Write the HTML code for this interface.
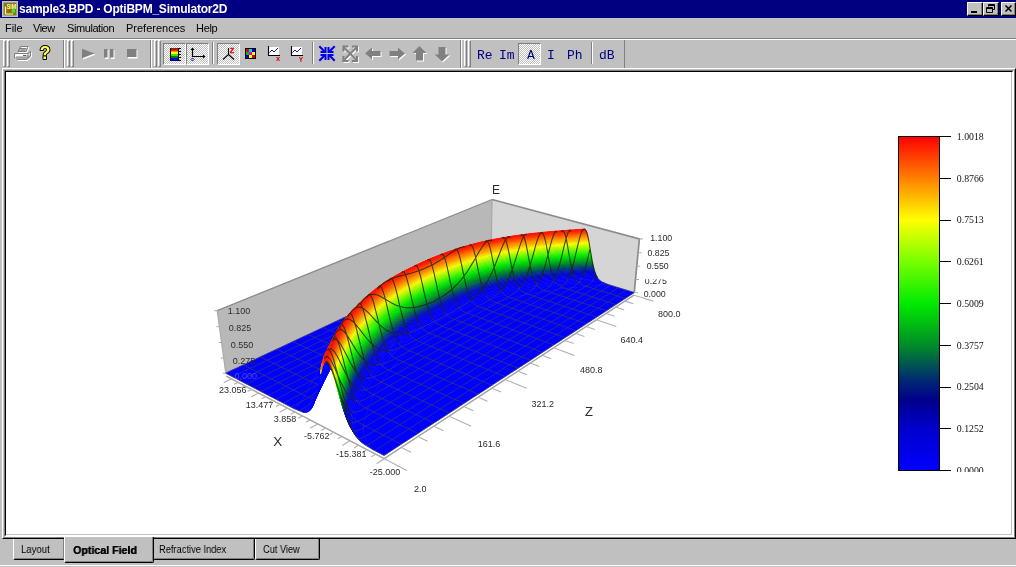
<!DOCTYPE html>
<html><head><meta charset="utf-8"><title>sample3.BPD - OptiBPM_Simulator2D</title><style>
html,body{margin:0;padding:0}
body{width:1016px;height:567px;position:relative;overflow:hidden;background:#c0c0c0;font-family:"Liberation Sans",Arial,sans-serif;font-size:11px;color:#000}
.a{position:absolute}
.t,.m,.tx,.tab span,svg{will-change:transform}
#title{left:0;top:0;width:1016px;height:18px;background:#000080}
#title .t{left:19px;top:2px;color:#fff;font-weight:bold;font-size:12px;line-height:14px;letter-spacing:-.22px;white-space:nowrap}
.wb{top:2px;width:16px;height:14px;background:#c0c0c0;box-sizing:border-box;border:1px solid;border-color:#fff #000 #000 #fff;box-shadow:inset -1px -1px 0 #808080}
.m{top:22px;line-height:12px;white-space:nowrap}
.grip{top:40px;width:3px;height:27px;box-sizing:border-box;border-left:1px solid #fff;border-right:1px solid #808080;border-top:1px solid #fff;border-bottom:1px solid #808080;background:#c0c0c0}
.vd{top:40px;width:1px;height:28px;background:#808080}
.vw{top:40px;width:1px;height:28px;background:#fff}
.sep{top:42px;width:2px;height:22px;border-left:1px solid #808080;border-right:1px solid #fff;box-sizing:border-box}
.pb{top:43px;height:22px;width:23px;box-sizing:border-box;border:1px solid;border-color:#808080 #fff #fff #808080;background:repeating-conic-gradient(#fff 0% 25%,#c0c0c0 0% 50%) 0 0/2px 2px}
.tx{top:49px;font-family:"Liberation Mono",monospace;font-size:13px;line-height:14px;color:#000080;white-space:nowrap}
.tab{top:539px;height:21px;border-radius:0 0 2px 2px;box-sizing:border-box;border-left:1px solid #fff;border-right:1px solid #000;border-bottom:1px solid #000;box-shadow:inset -1px -1px 0 #808080;background:#c0c0c0}
.tab span{position:absolute;top:4px;left:0;white-space:nowrap;transform-origin:0 0;line-height:12px}
</style></head><body>
<div id="title" class="a"><svg class="a" style="left:2px;top:1px" width="16" height="16" viewBox="0 0 16 16"><rect width="16" height="16" fill="#c4c4bc"/><rect x="1.5" y="1.5" width="13" height="13" fill="#857a18"/><path d="M3.500 5.500v7.500h7.500" stroke="#ffff90" stroke-width="1.200" fill="none"/><rect x="6" y="8.500" width="4" height="3" fill="#a06010"/><circle cx="11.300" cy="10" r="1.900" fill="#30f030"/><text x="4.800" y="7.600" font-family="Liberation Sans,sans-serif" font-weight="bold" font-size="6.500" fill="#ffffa0" textLength="9.500" lengthAdjust="spacingAndGlyphs">SIM</text></svg>
<div class="a t">sample3.BPD - OptiBPM_Simulator2D</div>
<div class="a wb" style="left:967px"><div class="a" style="left:3px;top:8px;width:6px;height:2px;background:#000"></div></div>
<div class="a wb" style="left:983px"><svg class="a" style="left:0;top:0" width="14" height="12" viewBox="0 0 14 12"><path d="M4.5 1.5h6v5h-2M4.5 2.5h6M4.5 1.5v2M2.5 4.5h6v5h-6zM2.5 5.5h6" stroke="#000" fill="none"/></svg></div>
<div class="a wb" style="left:1001px;width:15px"><svg class="a" style="left:0;top:0" width="14" height="12" viewBox="0 0 14 12"><path d="M3.5 2.5l6 6M9.5 2.5l-6 6" stroke="#000" stroke-width="1.6" fill="none"/></svg></div>
</div>
<div class="a m" style="left:4.5px;letter-spacing:-0.05px">File</div>
<div class="a m" style="left:33px;letter-spacing:-0.5px">View</div>
<div class="a m" style="left:66.7px;letter-spacing:-0.42px">Simulation</div>
<div class="a m" style="left:126px;letter-spacing:0px">Preferences</div>
<div class="a m" style="left:195.5px;letter-spacing:-0.3px">Help</div>
<div class="a" style="left:0;top:38px;width:1016px;height:1px;background:#808080"></div>
<div class="a" style="left:0;top:39px;width:1016px;height:1px;background:#fff"></div>
<div class="a grip" style="left:3px"></div><div class="a grip" style="left:7px"></div>
<div class="a vd" style="left:63px"></div>
<div class="a vw" style="left:64px"></div>
<div class="a grip" style="left:67px"></div><div class="a grip" style="left:71px"></div>
<div class="a vd" style="left:150px"></div>
<div class="a vw" style="left:151px"></div>
<div class="a grip" style="left:154px"></div><div class="a grip" style="left:158px"></div>
<div class="a vd" style="left:460px"></div>
<div class="a vw" style="left:461px"></div>
<div class="a grip" style="left:464px"></div><div class="a grip" style="left:468px"></div>
<div class="a vd" style="left:624px"></div>
<div class="a sep" style="left:212px"></div>
<div class="a sep" style="left:312px"></div>
<div class="a sep" style="left:591px"></div>
<div class="a pb" style="left:163px"></div><div class="a pb" style="left:186px"></div><div class="a pb" style="left:217px"></div><div class="a pb" style="left:518px"></div>
<svg class="a" style="left:0;top:40px" width="640" height="28" viewBox="0 40 640 28" font-family="Liberation Sans,Arial,sans-serif">
<!-- printer (disabled) -->
<g fill="none" stroke="#fff" transform="translate(1,1)"><path d="M20.5 46.5h7.5l-2 5h-8zM14.5 53.5h13.5l2.5-2v4.5l-2.5 2h-13.5zM16.5 59.5h10.5l2-2"/></g>
<g fill="none" stroke="#808080"><path d="M20.5 46.5h7.5l-2 5h-8zM20 48.5h6M19 50h6M14.5 53.5h13.5l2.5-2M28 53.5v4.5M30.5 51.500v4.5l-2.500 2h-13.500v-4.500M16.500 59.500h10.500l2-2"/><path d="M16 55.500h7" stroke="#fff"/><path d="M23 55.500h3" stroke="#606060"/></g>
<!-- help -->
<text x="45" y="58.900" font-size="17.5" font-weight="bold" text-anchor="middle" fill="#ffff50" stroke="#000" stroke-width="2" paint-order="stroke" stroke-linejoin="round">?</text>
<!-- play pause stop (disabled) -->
<g fill="#fff"><path d="M83 50l12.500 4.700-12.500 4.700z"/><rect x="105" y="50" width="3.500" height="9"/><rect x="111" y="50" width="3.500" height="9"/><rect x="128" y="50" width="9.500" height="8.500"/></g>
<g fill="#808080"><path d="M82 48.800l12.500 4.700-12.500 4.700z"/><rect x="104" y="49" width="3.500" height="8.500"/><rect x="110" y="49" width="3.500" height="8.500"/><rect x="127" y="49" width="9.500" height="8"/></g>
<!-- colour bar icon -->
<g shape-rendering="crispEdges"><rect x="170" y="48" width="9" height="13" fill="#000"/>
<rect x="171" y="48" width="7" height="2" fill="#a02000"/><rect x="171" y="50" width="7" height="1" fill="#ff2000"/><rect x="171" y="51" width="7" height="1" fill="#ff9000"/><rect x="171" y="52" width="7" height="2" fill="#ffff00"/><rect x="171" y="54" width="7" height="2" fill="#40e000"/><rect x="171" y="56" width="7" height="2" fill="#008000"/><rect x="171" y="58" width="7" height="2" fill="#0000e0"/><rect x="171" y="60" width="7" height="1" fill="#000090"/>
<path d="M179 48.500h2M179 51.500h2M179 54.500h2M179 57.500h2M179 60.500h2" stroke="#000"/></g>
<!-- axes icon -->
<g stroke="#000" fill="#000"><path d="M192.500 49v7.500h11" fill="none" stroke-width="1.200"/><path d="M192.500 47.500l2 2.500h-4z" stroke="none"/><path d="M205.500 56.500l-2.500-2v4z" stroke="none"/></g>
<path d="M192.500 58l1.500 1.500-1.500 1.500-1.500-1.500z" fill="none" stroke="#0000c0" stroke-width=".9"/>
<!-- xyz icon -->
<path d="M228.500 48v6.500l-5.500 5M228.500 54.500l5.500 5" stroke="#000" stroke-width="1.100" fill="none"/>
<text x="229.800" y="52.800" font-size="7" font-weight="bold" fill="#e00000" stroke="#e00000" stroke-width=".3">Z</text>
<!-- palette icon -->
<g shape-rendering="crispEdges"><rect x="245" y="48" width="11" height="11" fill="#000"/>
<rect x="246" y="49" width="3" height="3" fill="#e00000"/><rect x="249" y="49" width="3" height="3" fill="#00e0e0"/><rect x="252" y="49" width="3" height="3" fill="#0000c0"/>
<rect x="246" y="52" width="3" height="3" fill="#00c000"/><rect x="249" y="52" width="3" height="3" fill="#e000e0"/><rect x="252" y="52" width="3" height="3" fill="#ffff00"/>
<rect x="246" y="55" width="3" height="3" fill="#0000c0"/><rect x="249" y="55" width="3" height="3" fill="#ffff00"/><rect x="252" y="55" width="3" height="3" fill="#e00000"/></g>
<!-- chart x / chart y -->
<g id="ch"><rect x="269" y="47" width="10" height="8" fill="#fff"/><path d="M268.500 46v9.500h11.500" stroke="#000" stroke-width="1.100" fill="none"/><path d="M269.500 52.500l2.500-2.500 2 2 4-4" stroke="#0000a0" stroke-width=".9" fill="none"/></g>
<text x="276" y="61.300" font-size="7.500" font-weight="bold" fill="#e00000">x</text>
<use href="#ch" x="23"/>
<text x="298.700" y="62" font-size="6.500" font-weight="bold" fill="#e00000">Y</text>
<!-- zoom-in (blue arrows to centre) -->
<g stroke="#0000e8" stroke-width="2" fill="none"><path d="M319.300 46.300l6 6M334.700 46.300l-6 6M319.300 60.700l6-6M334.700 60.700l-6-6"/><path d="M320.500 52h5v-5M333.500 52h-5v-5M320.500 55h5v5M333.500 55h-5v5" stroke-width="2"/></g>
<!-- zoom-out (disabled) -->
<g stroke="#fff" stroke-width="2" fill="none" transform="translate(1,1)"><path d="M344 47.500l12.500 12.500M356.500 47.500l-12.500 12.500"/><path d="M343.500 51.500v-5h5M352 46.500h5v5M343.500 56v5h5M352 61h5v-5"/></g>
<g stroke="#808080" stroke-width="2" fill="none"><path d="M344 47.500l12.500 12.500M356.500 47.500l-12.500 12.500"/><path d="M343.500 51.500v-5h5M352 46.500h5v5M343.500 56v5h5M352 61h5v-5" stroke-width="2.200"/></g>
<!-- arrows (disabled) -->
<g fill="#fff" transform="translate(1,1)"><path d="M365 53.500l7-6v3.500h8.500v5h-8.500v3.500z"/><path d="M405 53.500l-7-6v3.500h-8.500v5h8.500v3.500z"/><path d="M419.500 46l7 7h-3.500v7.500h-7v-7.500h-3.500z"/><path d="M442 61.500l7.500-7h-4v-7.500h-7v7.500h-4z"/></g>
<g fill="#808080"><path d="M365 53.500l7-6v3.500h8.500v5h-8.500v3.500z"/><path d="M405 53.500l-7-6v3.500h-8.500v5h8.500v3.500z"/><path d="M419.500 46l7 7h-3.500v7.500h-7v-7.500h-3.500z"/><path d="M442 61.500l7.500-7h-4v-7.500h-7v7.500h-4z"/></g>
</svg>
<div class="a tx" style="left:477.300px">Re</div><div class="a tx" style="left:499px">Im</div><div class="a tx" style="left:527px">A</div><div class="a tx" style="left:547.400px">I</div><div class="a tx" style="left:567px">Ph</div><div class="a tx" style="left:599px">dB</div>

<div class="a" style="left:2px;top:68px;width:1014px;height:471px;box-sizing:border-box;border:1px solid;border-color:#fff #000 #000 #fff"></div>
<div class="a" style="left:3px;top:69px;width:1012px;height:469px;box-sizing:border-box;border:1px solid;border-color:#c0c0c0 #808080 #808080 #c0c0c0"></div>
<div class="a" style="left:4px;top:70px;width:1010px;height:467px;box-sizing:border-box;border:1px solid;border-color:#808080 #fff #fff #808080"></div>
<div class="a" style="left:5px;top:71px;width:1008px;height:465px;box-sizing:border-box;border:1px solid;border-color:#000 #fff #fff #000;background:#fff"></div>
<div class="a" style="left:6px;top:534px;width:1006px;height:1px;background:#c0c0c0"></div>
<div class="a" style="left:1011px;top:72px;width:1px;height:463px;background:#c0c0c0"></div>
<svg width="1006" height="463" viewBox="6 72 1006 463" style="position:absolute;left:6px;top:72px" font-family="Liberation Sans, Arial, sans-serif" fill="#2b2b2b">
<defs><clipPath id="c275"><rect x="640" y="279.3" width="40" height="10"/></clipPath><clipPath id="cbl"><rect x="950" y="120" width="60" height="352"/></clipPath>
<linearGradient id="cb" x1="0" y1="1" x2="0" y2="0">
<stop offset="0.000" stop-color="#0000ff"/>
<stop offset="0.125" stop-color="#0000cd"/>
<stop offset="0.210" stop-color="#00008c"/>
<stop offset="0.270" stop-color="#002873"/>
<stop offset="0.375" stop-color="#008c28"/>
<stop offset="0.500" stop-color="#00eb00"/>
<stop offset="0.625" stop-color="#78ff00"/>
<stop offset="0.750" stop-color="#ffff00"/>
<stop offset="0.875" stop-color="#ff8000"/>
<stop offset="1.000" stop-color="#ff0000"/>
</linearGradient></defs>
<polygon points="225.8,373.2 217.2,310.7 492.1,199.5 491.2,248.6" fill="#b8b8b8"/>
<polygon points="491.2,248.6 492.1,199.5 639.4,238.9 634.2,292.6" fill="#d5d5d5"/>
<polyline points="491.2,248.6 492.1,199.5" stroke="#a2a2a2" stroke-width="1" fill="none"/>
<polyline points="217.2,310.7 492.1,199.5" stroke="#8c8c8c" stroke-width="1.3" fill="none"/>
<polyline points="492.1,199.5 639.4,238.9 634.2,292.6" stroke="#8c8c8c" stroke-width="1.7" fill="none"/>
<polyline points="225.8,373.2 217.2,310.7" stroke="#aaa" stroke-width="1.2" fill="none"/>
<polygon points="225.8,373.2 228.2,372.0 230.5,370.9 232.9,369.8 235.2,368.7 237.5,367.7 239.8,366.6 242.1,365.5 244.4,364.4 246.7,363.4 249.0,362.3 251.2,361.2 259.7,357.2 268.0,353.3 276.2,349.5 284.3,345.7 292.2,342.0 300.0,338.3 307.7,334.7 315.2,331.2 322.6,327.7 329.9,324.3 337.1,320.9 344.2,317.6 351.2,314.3 358.0,311.1 364.8,307.9 371.5,304.8 378.0,301.7 384.5,298.7 390.8,295.7 397.1,292.7 403.3,289.8 409.4,287.0 415.4,284.2 421.3,281.4 427.2,278.7 432.9,276.0 438.6,273.3 444.2,270.7 449.7,268.1 455.1,265.5 460.5,263.0 465.8,260.5 471.0,258.1 476.2,255.6 481.3,253.3 486.3,250.9 491.2,248.6 556.1,268.5 545.4,269.2 534.9,270.1 524.7,271.0 514.8,272.1 505.2,273.2 495.8,274.5 486.8,276.0 478.0,277.5 469.6,279.2 461.5,281.1 453.6,283.1 446.1,285.2 438.7,287.5 431.7,290.0 424.8,292.5 418.0,295.2 411.5,298.0 405.0,301.0 398.6,304.0 392.3,307.2 386.1,310.5 379.9,313.9 373.9,317.4 368.0,321.1 362.4,325.0 356.9,329.2 351.7,333.5 346.6,338.0 341.7,342.7 336.8,347.6 332.1,352.7 327.4,358.0 323.0,363.6 318.9,369.6 315.2,375.9 311.8,382.5 308.3,389.4 307.3,391.2 306.3,393.1 305.3,394.9 304.2,396.7 303.1,398.6 302.0,400.4 300.7,402.2 299.4,403.9 297.8,405.6 296.0,407.1 293.8,408.5" fill="#0000ff" stroke="#0000ff" stroke-width=".6"/>
<polygon points="373.5,449.9 369.4,445.1 366.7,441.0 364.9,437.5 363.9,434.4 363.3,431.5 363.2,428.9 363.3,426.4 363.5,424.1 364.0,421.8 364.5,419.6 365.1,417.5 367.6,409.7 370.3,402.3 373.4,395.2 377.0,388.7 380.9,382.5 385.2,376.6 389.6,371.0 394.1,365.6 398.7,360.4 403.5,355.4 408.4,350.7 413.6,346.2 419.0,341.9 424.7,337.8 430.6,333.9 436.6,330.2 442.7,326.6 448.8,323.2 455.1,319.8 461.5,316.6 468.0,313.6 474.6,310.6 481.5,307.8 488.5,305.2 495.8,302.7 503.4,300.3 511.3,298.2 519.5,296.1 528.1,294.3 537.0,292.6 546.2,291.0 555.7,289.6 565.5,288.3 575.7,287.2 586.2,286.2 596.9,285.3 607.9,284.5 634.2,292.6 629.8,295.5 625.2,298.5 620.6,301.5 615.9,304.5 611.1,307.6 606.3,310.8 601.4,314.0 596.4,317.2 591.4,320.5 586.2,323.8 581.0,327.2 575.7,330.7 570.3,334.2 564.8,337.7 559.3,341.4 553.6,345.0 547.9,348.8 542.0,352.6 536.1,356.5 530.0,360.4 523.9,364.4 517.6,368.5 511.3,372.6 504.8,376.8 498.2,381.1 491.5,385.5 484.7,389.9 477.7,394.4 470.6,399.0 463.4,403.7 456.1,408.5 448.6,413.4 441.0,418.4 433.2,423.4 425.2,428.6 417.2,433.9 408.9,439.2 406.7,440.7 404.5,442.1 402.3,443.5 400.0,445.0 397.8,446.5 395.5,447.9 393.2,449.4 391.0,450.9 388.7,452.4 386.4,453.9 384.0,455.4" fill="#0000ff" stroke="#0000ff" stroke-width=".6"/>
<polygon points="293.8,408.5 296.0,407.1 297.8,405.6 299.4,403.9 300.7,402.2 302.0,400.4 303.1,398.6 304.2,396.7 305.3,394.9 306.3,393.1 307.3,391.2 308.3,389.4 311.8,382.5 315.2,375.9 318.9,369.6 323.0,363.6 327.4,358.0 332.1,352.7 336.8,347.6 341.7,342.7 346.6,338.0 351.7,333.5 356.9,329.2 362.4,325.0 368.0,321.1 373.9,317.4 379.9,313.9 386.1,310.5 392.3,307.2 398.6,304.0 405.0,301.0 411.5,298.0 418.0,295.2 424.8,292.5 431.7,290.0 438.7,287.5 446.1,285.2 453.6,283.1 461.5,281.1 469.6,279.2 478.0,277.5 486.8,276.0 495.8,274.5 505.2,273.2 514.8,272.1 524.7,271.0 534.9,270.1 545.4,269.2 556.1,268.5 563.0,269.7 552.2,270.4 541.7,271.3 531.5,272.2 521.5,273.3 511.8,274.5 502.4,275.8 493.4,277.2 484.6,278.8 476.1,280.5 468.0,282.4 460.1,284.4 452.6,286.6 445.3,288.9 438.2,291.3 431.3,293.9 424.6,296.7 418.0,299.5 411.5,302.5 405.2,305.5 398.9,308.7 392.6,312.0 386.5,315.5 380.5,319.1 374.6,322.8 369.0,326.8 363.6,330.9 358.4,335.3 353.4,339.9 348.5,344.6 343.6,349.6 338.9,354.8 334.3,360.1 329.9,365.8 325.9,371.8 322.3,378.2 318.9,384.9 315.5,391.9 314.6,393.8 313.7,395.6 312.7,397.5 311.8,399.4 310.8,401.3 309.8,403.2 308.8,405.1 307.7,407.0 306.6,408.9 305.3,410.7 303.8,412.5" fill="#0000ff" stroke="#0000ff" stroke-width=".7"/>
<polygon points="303.8,412.5 305.3,410.7 306.6,408.9 307.7,407.0 308.8,405.1 309.8,403.2 310.8,401.3 311.8,399.4 312.7,397.5 313.7,395.6 314.6,393.8 315.5,391.9 318.9,384.9 322.3,378.2 325.9,371.8 329.9,365.8 334.3,360.1 338.9,354.8 343.6,349.6 348.5,344.6 353.4,339.9 358.4,335.3 363.6,330.9 369.0,326.8 374.6,322.8 380.5,319.1 386.5,315.5 392.6,312.0 398.9,308.7 405.2,305.5 411.5,302.5 418.0,299.5 424.6,296.7 431.3,293.9 438.2,291.3 445.3,288.9 452.6,286.6 460.1,284.4 468.0,282.4 476.1,280.5 484.6,278.8 493.4,277.2 502.4,275.8 511.8,274.5 521.5,273.3 531.5,272.2 541.7,271.3 552.2,270.4 563.0,269.7 564.7,269.3 554.0,270.0 543.4,270.9 533.2,271.8 523.2,272.9 513.5,274.0 504.1,275.4 495.1,276.8 486.3,278.4 477.8,280.1 469.6,282.0 461.8,284.0 454.2,286.2 446.9,288.5 439.8,290.9 432.9,293.5 426.2,296.3 419.6,299.1 413.2,302.1 406.8,305.2 400.5,308.4 394.3,311.7 388.1,315.1 382.1,318.7 376.3,322.5 370.6,326.4 365.2,330.6 360.0,334.9 355.0,339.5 350.1,344.3 345.3,349.3 340.6,354.4 336.0,359.8 331.6,365.5 327.6,371.5 324.0,377.9 320.7,384.7 317.3,391.6 316.4,393.5 315.5,395.4 314.5,397.3 313.6,399.2 312.7,401.1 311.7,403.0 310.7,404.9 309.7,406.9 308.7,408.8 307.6,410.7 306.3,412.5" fill="#0000ff" stroke="#0000ff" stroke-width=".7"/>
<polygon points="306.3,412.5 307.6,410.7 308.7,408.8 309.7,406.9 310.7,404.9 311.7,403.0 312.7,401.1 313.6,399.2 314.5,397.3 315.5,395.4 316.4,393.5 317.3,391.6 320.7,384.7 324.0,377.9 327.6,371.5 331.6,365.5 336.0,359.8 340.6,354.4 345.3,349.3 350.1,344.3 355.0,339.5 360.0,334.9 365.2,330.6 370.6,326.4 376.3,322.5 382.1,318.7 388.1,315.1 394.3,311.7 400.5,308.4 406.8,305.2 413.2,302.1 419.6,299.1 426.2,296.3 432.9,293.5 439.8,290.9 446.9,288.5 454.2,286.2 461.8,284.0 469.6,282.0 477.8,280.1 486.3,278.4 495.1,276.8 504.1,275.4 513.5,274.0 523.2,272.9 533.2,271.8 543.4,270.9 554.0,270.0 564.7,269.3 565.9,268.6 555.1,269.4 544.6,270.2 534.3,271.2 524.3,272.3 514.6,273.4 505.2,274.7 496.1,276.2 487.4,277.8 478.9,279.5 470.7,281.4 462.9,283.4 455.3,285.5 448.0,287.9 440.9,290.3 434.0,292.9 427.2,295.6 420.6,298.5 414.2,301.5 407.8,304.5 401.5,307.7 395.3,311.0 389.2,314.5 383.2,318.1 377.3,321.8 371.7,325.8 366.3,330.0 361.1,334.3 356.1,338.9 351.2,343.7 346.4,348.7 341.6,353.8 337.0,359.2 332.7,364.9 328.7,370.9 325.1,377.3 321.7,384.1 318.4,391.0 317.5,392.9 316.6,394.8 315.7,396.7 314.7,398.6 313.8,400.5 312.9,402.4 312.0,404.4 311.0,406.3 310.0,408.2 309.0,410.2 307.8,412.0" fill="#0000ff" stroke="#0000ff" stroke-width=".7"/>
<polygon points="307.8,412.0 309.0,410.2 310.0,408.2 311.0,406.3 312.0,404.4 312.9,402.4 313.8,400.5 314.7,398.6 315.7,396.7 316.6,394.8 317.5,392.9 318.4,391.0 321.7,384.1 325.1,377.3 328.7,370.9 332.7,364.9 337.0,359.2 341.6,353.8 346.4,348.7 351.2,343.7 356.1,338.9 361.1,334.3 366.3,330.0 371.7,325.8 377.3,321.8 383.2,318.1 389.2,314.5 395.3,311.0 401.5,307.7 407.8,304.5 414.2,301.5 420.6,298.5 427.2,295.6 434.0,292.9 440.9,290.3 448.0,287.9 455.3,285.5 462.9,283.4 470.7,281.4 478.9,279.5 487.4,277.8 496.1,276.2 505.2,274.7 514.6,273.4 524.3,272.3 534.3,271.2 544.6,270.2 555.1,269.4 565.9,268.6 566.8,268.0 556.0,268.7 545.4,269.5 535.2,270.5 525.2,271.5 515.5,272.7 506.1,274.0 497.0,275.5 488.2,277.1 479.7,278.8 471.5,280.6 463.7,282.7 456.1,284.8 448.7,287.2 441.6,289.6 434.7,292.2 428.0,294.9 421.4,297.8 415.0,300.7 408.6,303.8 402.3,307.0 396.1,310.3 389.9,313.8 383.9,317.3 378.1,321.1 372.4,325.1 367.0,329.2 361.8,333.6 356.8,338.2 351.9,343.0 347.1,347.9 342.4,353.1 337.8,358.5 333.5,364.1 329.5,370.2 325.9,376.6 322.5,383.3 319.2,390.3 318.3,392.2 317.4,394.0 316.5,395.9 315.6,397.8 314.7,399.7 313.8,401.7 312.8,403.6 311.9,405.6 311.0,407.5 310.0,409.5 309.0,411.3" fill="#0000ff" stroke="#0000ff" stroke-width=".7"/>
<polygon points="309.0,411.3 310.0,409.5 311.0,407.5 311.9,405.6 312.8,403.6 313.8,401.7 314.7,399.7 315.6,397.8 316.5,395.9 317.4,394.0 318.3,392.2 319.2,390.3 322.5,383.3 325.9,376.6 329.5,370.2 333.5,364.1 337.8,358.5 342.4,353.1 347.1,347.9 351.9,343.0 356.8,338.2 361.8,333.6 367.0,329.2 372.4,325.1 378.1,321.1 383.9,317.3 389.9,313.8 396.1,310.3 402.3,307.0 408.6,303.8 415.0,300.7 421.4,297.8 428.0,294.9 434.7,292.2 441.6,289.6 448.7,287.2 456.1,284.8 463.7,282.7 471.5,280.6 479.7,278.8 488.2,277.1 497.0,275.5 506.1,274.0 515.5,272.7 525.2,271.5 535.2,270.5 545.4,269.5 556.0,268.7 566.8,268.0 567.5,267.2 556.7,267.9 546.2,268.8 535.9,269.7 525.9,270.8 516.2,272.0 506.8,273.3 497.6,274.7 488.8,276.3 480.4,278.0 472.2,279.9 464.3,281.9 456.7,284.1 449.4,286.4 442.3,288.8 435.4,291.4 428.7,294.1 422.1,297.0 415.6,300.0 409.2,303.0 402.9,306.2 396.7,309.5 390.6,313.0 384.5,316.6 378.7,320.3 373.1,324.3 367.7,328.4 362.5,332.8 357.4,337.4 352.5,342.2 347.7,347.1 343.0,352.3 338.4,357.7 334.1,363.3 330.1,369.3 326.5,375.8 323.2,382.5 319.8,389.5 319.0,391.3 318.0,393.2 317.1,395.1 316.2,397.0 315.3,398.9 314.4,400.8 313.6,402.8 312.7,404.7 311.8,406.7 310.8,408.6 309.9,410.5" fill="#0000ff" stroke="#0000ff" stroke-width=".7"/>
<polygon points="309.9,410.5 310.8,408.6 311.8,406.7 312.7,404.7 313.6,402.8 314.4,400.8 315.3,398.9 316.2,397.0 317.1,395.1 318.0,393.2 319.0,391.3 319.8,389.5 323.2,382.5 326.5,375.8 330.1,369.3 334.1,363.3 338.4,357.7 343.0,352.3 347.7,347.1 352.5,342.2 357.4,337.4 362.5,332.8 367.7,328.4 373.1,324.3 378.7,320.3 384.5,316.6 390.6,313.0 396.7,309.5 402.9,306.2 409.2,303.0 415.6,300.0 422.1,297.0 428.7,294.1 435.4,291.4 442.3,288.8 449.4,286.4 456.7,284.1 464.3,281.9 472.2,279.9 480.4,278.0 488.8,276.3 497.6,274.7 506.8,273.3 516.2,272.0 525.9,270.8 535.9,269.7 546.2,268.8 556.7,267.9 567.5,267.2 568.2,266.4 557.3,267.2 546.8,268.0 536.5,269.0 526.5,270.0 516.8,271.2 507.3,272.5 498.2,273.9 489.4,275.5 480.9,277.2 472.7,279.1 464.9,281.1 457.3,283.3 449.9,285.6 442.8,288.0 435.9,290.6 429.2,293.3 422.6,296.2 416.1,299.1 409.8,302.2 403.5,305.4 397.2,308.7 391.1,312.1 385.1,315.7 379.2,319.5 373.6,323.4 368.2,327.6 363.0,332.0 358.0,336.5 353.1,341.3 348.3,346.3 343.5,351.4 338.9,356.8 334.6,362.5 330.6,368.5 327.0,374.9 323.7,381.6 320.4,388.6 319.5,390.4 318.6,392.3 317.7,394.2 316.8,396.1 315.9,398.0 315.0,399.9 314.1,401.9 313.3,403.8 312.4,405.8 311.5,407.7 310.6,409.7" fill="#0000ff" stroke="#0000ff" stroke-width=".7"/>
<polygon points="310.6,409.7 311.5,407.7 312.4,405.8 313.3,403.8 314.1,401.9 315.0,399.9 315.9,398.0 316.8,396.1 317.7,394.2 318.6,392.3 319.5,390.4 320.4,388.6 323.7,381.6 327.0,374.9 330.6,368.5 334.6,362.5 338.9,356.8 343.5,351.4 348.3,346.3 353.1,341.3 358.0,336.5 363.0,332.0 368.2,327.6 373.6,323.4 379.2,319.5 385.1,315.7 391.1,312.1 397.2,308.7 403.5,305.4 409.8,302.2 416.1,299.1 422.6,296.2 429.2,293.3 435.9,290.6 442.8,288.0 449.9,285.6 457.3,283.3 464.9,281.1 472.7,279.1 480.9,277.2 489.4,275.5 498.2,273.9 507.3,272.5 516.8,271.2 526.5,270.0 536.5,269.0 546.8,268.0 557.3,267.2 568.2,266.4 568.7,265.6 557.9,266.4 547.3,267.2 537.0,268.2 527.0,269.2 517.3,270.4 507.9,271.7 498.8,273.1 489.9,274.7 481.4,276.4 473.2,278.3 465.4,280.3 457.8,282.5 450.4,284.8 443.3,287.2 436.4,289.8 429.7,292.5 423.1,295.3 416.6,298.3 410.2,301.4 403.9,304.6 397.7,307.9 391.5,311.3 385.5,314.9 379.7,318.6 374.0,322.6 368.6,326.7 363.4,331.1 358.4,335.7 353.5,340.4 348.7,345.4 344.0,350.5 339.4,355.9 335.0,361.6 331.1,367.6 327.5,374.0 324.2,380.7 320.8,387.7 320.0,389.5 319.1,391.4 318.2,393.3 317.3,395.2 316.4,397.1 315.5,399.0 314.7,400.9 313.8,402.9 313.0,404.9 312.1,406.8 311.3,408.7" fill="#0000ff" stroke="#0000ff" stroke-width=".7"/>
<polygon points="311.3,408.7 312.1,406.8 313.0,404.9 313.8,402.9 314.7,400.9 315.5,399.0 316.4,397.1 317.3,395.2 318.2,393.3 319.1,391.4 320.0,389.5 320.8,387.7 324.2,380.7 327.5,374.0 331.1,367.6 335.0,361.6 339.4,355.9 344.0,350.5 348.7,345.4 353.5,340.4 358.4,335.7 363.4,331.1 368.6,326.7 374.0,322.6 379.7,318.6 385.5,314.9 391.5,311.3 397.7,307.9 403.9,304.6 410.2,301.4 416.6,298.3 423.1,295.3 429.7,292.5 436.4,289.8 443.3,287.2 450.4,284.8 457.8,282.5 465.4,280.3 473.2,278.3 481.4,276.4 489.9,274.7 498.8,273.1 507.9,271.7 517.3,270.4 527.0,269.2 537.0,268.2 547.3,267.2 557.9,266.4 568.7,265.6 569.3,264.8 558.4,265.6 547.8,266.4 537.5,267.3 527.5,268.4 517.8,269.6 508.3,270.9 499.2,272.3 490.4,273.9 481.9,275.6 473.7,277.4 465.8,279.4 458.2,281.6 450.9,283.9 443.8,286.4 436.8,288.9 430.1,291.7 423.5,294.5 417.0,297.4 410.6,300.5 404.3,303.7 398.1,307.0 392.0,310.4 385.9,314.0 380.1,317.7 374.4,321.7 369.0,325.8 363.8,330.2 358.8,334.8 353.9,339.5 349.1,344.5 344.4,349.6 339.8,355.0 335.4,360.6 331.5,366.6 327.9,373.0 324.6,379.8 321.3,386.7 320.4,388.6 319.5,390.4 318.6,392.3 317.7,394.2 316.8,396.1 315.9,398.0 315.1,400.0 314.3,401.9 313.5,403.9 312.7,405.8 311.9,407.8" fill="#0000ff" stroke="#0000ff" stroke-width=".7"/>
<polygon points="311.9,407.8 312.7,405.8 313.5,403.9 314.3,401.9 315.1,400.0 315.9,398.0 316.8,396.1 317.7,394.2 318.6,392.3 319.5,390.4 320.4,388.6 321.3,386.7 324.6,379.8 327.9,373.0 331.5,366.6 335.4,360.6 339.8,355.0 344.4,349.6 349.1,344.5 353.9,339.5 358.8,334.8 363.8,330.2 369.0,325.8 374.4,321.7 380.1,317.7 385.9,314.0 392.0,310.4 398.1,307.0 404.3,303.7 410.6,300.5 417.0,297.4 423.5,294.5 430.1,291.7 436.8,288.9 443.8,286.4 450.9,283.9 458.2,281.6 465.8,279.4 473.7,277.4 481.9,275.6 490.4,273.9 499.2,272.3 508.3,270.9 517.8,269.6 527.5,268.4 537.5,267.3 547.8,266.4 558.4,265.6 569.3,264.8 569.7,264.0 558.9,264.7 548.3,265.6 538.0,266.5 528.0,267.5 518.2,268.7 508.8,270.0 499.6,271.5 490.8,273.0 482.3,274.7 474.1,276.6 466.2,278.6 458.6,280.8 451.3,283.1 444.2,285.5 437.2,288.1 430.5,290.8 423.9,293.6 417.4,296.6 411.0,299.6 404.7,302.8 398.5,306.1 392.3,309.5 386.3,313.1 380.4,316.8 374.8,320.8 369.4,324.9 364.2,329.3 359.2,333.8 354.3,338.6 349.5,343.5 344.7,348.7 340.1,354.0 335.8,359.7 331.8,365.7 328.2,372.1 324.9,378.8 321.6,385.7 320.7,387.6 319.8,389.4 318.9,391.3 318.1,393.2 317.2,395.1 316.3,397.0 315.5,399.0 314.7,400.9 313.9,402.9 313.2,404.8 312.4,406.7" fill="#0000ff" stroke="#0000ff" stroke-width=".7"/>
<polygon points="312.4,406.7 313.2,404.8 313.9,402.9 314.7,400.9 315.5,399.0 316.3,397.0 317.2,395.1 318.1,393.2 318.9,391.3 319.8,389.4 320.7,387.6 321.6,385.7 324.9,378.8 328.2,372.1 331.8,365.7 335.8,359.7 340.1,354.0 344.7,348.7 349.5,343.5 354.3,338.6 359.2,333.8 364.2,329.3 369.4,324.9 374.8,320.8 380.4,316.8 386.3,313.1 392.3,309.5 398.5,306.1 404.7,302.8 411.0,299.6 417.4,296.6 423.9,293.6 430.5,290.8 437.2,288.1 444.2,285.5 451.3,283.1 458.6,280.8 466.2,278.6 474.1,276.6 482.3,274.7 490.8,273.0 499.6,271.5 508.8,270.0 518.2,268.7 528.0,267.5 538.0,266.5 548.3,265.6 558.9,264.7 569.7,264.0 570.2,263.1 559.3,263.9 548.7,264.7 538.4,265.6 528.4,266.7 518.6,267.9 509.2,269.2 500.0,270.6 491.2,272.2 482.7,273.9 474.5,275.7 466.6,277.7 459.0,279.9 451.6,282.2 444.5,284.6 437.6,287.2 430.8,289.9 424.2,292.7 417.8,295.7 411.4,298.7 405.1,301.9 398.8,305.2 392.7,308.6 386.6,312.2 380.8,315.9 375.1,319.8 369.7,324.0 364.5,328.3 359.5,332.9 354.6,337.7 349.8,342.6 345.1,347.7 340.5,353.1 336.1,358.7 332.1,364.7 328.6,371.1 325.2,377.8 321.9,384.7 321.1,386.6 320.2,388.4 319.3,390.3 318.4,392.2 317.5,394.1 316.7,396.0 315.9,397.9 315.1,399.9 314.3,401.8 313.6,403.8 312.9,405.7" fill="#0000ff" stroke="#0000ff" stroke-width=".7"/>
<polygon points="312.9,405.7 313.6,403.8 314.3,401.8 315.1,399.9 315.9,397.9 316.7,396.0 317.5,394.1 318.4,392.2 319.3,390.3 320.2,388.4 321.1,386.6 321.9,384.7 325.2,377.8 328.6,371.1 332.1,364.7 336.1,358.7 340.5,353.1 345.1,347.7 349.8,342.6 354.6,337.7 359.5,332.9 364.5,328.3 369.7,324.0 375.1,319.8 380.8,315.9 386.6,312.2 392.7,308.6 398.8,305.2 405.1,301.9 411.4,298.7 417.8,295.7 424.2,292.7 430.8,289.9 437.6,287.2 444.5,284.6 451.6,282.2 459.0,279.9 466.6,277.7 474.5,275.7 482.7,273.9 491.2,272.2 500.0,270.6 509.2,269.2 518.6,267.9 528.4,266.7 538.4,265.6 548.7,264.7 559.3,263.9 570.2,263.1 570.6,262.3 559.8,263.0 549.2,263.9 538.8,264.8 528.8,265.8 519.0,267.0 509.6,268.3 500.4,269.7 491.6,271.3 483.1,273.0 474.9,274.9 467.0,276.9 459.3,279.0 452.0,281.3 444.9,283.7 437.9,286.3 431.2,289.0 424.6,291.8 418.1,294.8 411.7,297.8 405.4,301.0 399.1,304.3 393.0,307.7 387.0,311.3 381.1,315.0 375.4,318.9 370.0,323.1 364.8,327.4 359.8,332.0 354.9,336.7 350.1,341.6 345.4,346.8 340.8,352.1 336.4,357.8 332.4,363.7 328.9,370.1 325.5,376.8 322.2,383.7 321.4,385.6 320.5,387.4 319.6,389.3 318.7,391.2 317.9,393.1 317.0,395.0 316.2,396.9 315.4,398.8 314.7,400.8 314.0,402.7 313.3,404.6" fill="#0000ff" stroke="#0000ff" stroke-width=".7"/>
<polygon points="313.3,404.6 314.0,402.7 314.7,400.8 315.4,398.8 316.2,396.9 317.0,395.0 317.9,393.1 318.7,391.2 319.6,389.3 320.5,387.4 321.4,385.6 322.2,383.7 325.5,376.8 328.9,370.1 332.4,363.7 336.4,357.8 340.8,352.1 345.4,346.8 350.1,341.6 354.9,336.7 359.8,332.0 364.8,327.4 370.0,323.1 375.4,318.9 381.1,315.0 387.0,311.3 393.0,307.7 399.1,304.3 405.4,301.0 411.7,297.8 418.1,294.8 424.6,291.8 431.2,289.0 437.9,286.3 444.9,283.7 452.0,281.3 459.3,279.0 467.0,276.9 474.9,274.9 483.1,273.0 491.6,271.3 500.4,269.7 509.6,268.3 519.0,267.0 528.8,265.8 538.8,264.8 549.2,263.9 559.8,263.0 570.6,262.3 571.0,261.4 560.1,262.2 549.5,263.0 539.2,263.9 529.1,265.0 519.4,266.1 509.9,267.4 500.8,268.9 491.9,270.4 483.4,272.1 475.2,274.0 467.3,276.0 459.7,278.1 452.3,280.4 445.2,282.8 438.3,285.4 431.5,288.1 424.9,290.9 418.4,293.9 412.0,296.9 405.7,300.1 399.4,303.4 393.3,306.8 387.2,310.3 381.4,314.1 375.7,318.0 370.3,322.1 365.1,326.4 360.1,331.0 355.2,335.7 350.4,340.7 345.6,345.8 341.0,351.1 336.7,356.8 332.7,362.7 329.1,369.1 325.8,375.8 322.5,382.7 321.6,384.5 320.8,386.4 319.9,388.3 319.0,390.1 318.1,392.0 317.3,393.9 316.5,395.8 315.8,397.8 315.0,399.7 314.3,401.6 313.7,403.6" fill="#0000ff" stroke="#0000ff" stroke-width=".7"/>
<polygon points="313.7,403.6 314.3,401.6 315.0,399.7 315.8,397.8 316.5,395.8 317.3,393.9 318.1,392.0 319.0,390.1 319.9,388.3 320.8,386.4 321.6,384.5 322.5,382.7 325.8,375.8 329.1,369.1 332.7,362.7 336.7,356.8 341.0,351.1 345.6,345.8 350.4,340.7 355.2,335.7 360.1,331.0 365.1,326.4 370.3,322.1 375.7,318.0 381.4,314.1 387.2,310.3 393.3,306.8 399.4,303.4 405.7,300.1 412.0,296.9 418.4,293.9 424.9,290.9 431.5,288.1 438.3,285.4 445.2,282.8 452.3,280.4 459.7,278.1 467.3,276.0 475.2,274.0 483.4,272.1 491.9,270.4 500.8,268.9 509.9,267.4 519.4,266.1 529.1,265.0 539.2,263.9 549.5,263.0 560.1,262.2 571.0,261.4 571.4,260.6 560.5,261.3 549.9,262.1 539.6,263.1 529.5,264.1 519.7,265.3 510.3,266.6 501.1,268.0 492.3,269.5 483.7,271.2 475.5,273.1 467.6,275.1 460.0,277.2 452.6,279.5 445.5,281.9 438.6,284.5 431.8,287.2 425.2,290.0 418.7,292.9 412.3,296.0 406.0,299.2 399.7,302.4 393.6,305.8 387.5,309.4 381.7,313.1 376.0,317.0 370.6,321.1 365.4,325.5 360.3,330.0 355.4,334.8 350.6,339.7 345.9,344.8 341.3,350.1 337.0,355.8 333.0,361.7 329.4,368.1 326.1,374.8 322.8,381.7 321.9,383.5 321.0,385.3 320.1,387.2 319.3,389.1 318.4,391.0 317.6,392.9 316.8,394.8 316.1,396.7 315.4,398.6 314.7,400.5 314.1,402.5" fill="#0000ff" stroke="#0000ff" stroke-width=".7"/>
<polygon points="314.1,402.5 314.7,400.5 315.4,398.6 316.1,396.7 316.8,394.8 317.6,392.9 318.4,391.0 319.3,389.1 320.1,387.2 321.0,385.3 321.9,383.5 322.8,381.7 326.1,374.8 329.4,368.1 333.0,361.7 337.0,355.8 341.3,350.1 345.9,344.8 350.6,339.7 355.4,334.8 360.3,330.0 365.4,325.5 370.6,321.1 376.0,317.0 381.7,313.1 387.5,309.4 393.6,305.8 399.7,302.4 406.0,299.2 412.3,296.0 418.7,292.9 425.2,290.0 431.8,287.2 438.6,284.5 445.5,281.9 452.6,279.5 460.0,277.2 467.6,275.1 475.5,273.1 483.7,271.2 492.3,269.5 501.1,268.0 510.3,266.6 519.7,265.3 529.5,264.1 539.6,263.1 549.9,262.1 560.5,261.3 571.4,260.6 571.8,259.7 560.9,260.4 550.3,261.2 539.9,262.2 529.9,263.2 520.1,264.4 510.6,265.7 501.4,267.1 492.6,268.7 484.1,270.3 475.8,272.2 467.9,274.2 460.3,276.3 452.9,278.6 445.8,281.0 438.8,283.6 432.1,286.3 425.5,289.1 419.0,292.0 412.6,295.1 406.3,298.2 400.0,301.5 393.8,304.9 387.8,308.4 381.9,312.2 376.3,316.1 370.8,320.2 365.6,324.5 360.6,329.0 355.7,333.8 350.9,338.7 346.1,343.8 341.5,349.1 337.2,354.8 333.2,360.7 329.6,367.1 326.3,373.7 323.0,380.6 322.1,382.5 321.3,384.3 320.4,386.1 319.5,388.0 318.7,389.9 317.9,391.8 317.1,393.7 316.3,395.6 315.7,397.5 315.0,399.4 314.4,401.4" fill="#0000ff" stroke="#0000ff" stroke-width=".7"/>
<polygon points="314.4,401.4 315.0,399.4 315.7,397.5 316.3,395.6 317.1,393.7 317.9,391.8 318.7,389.9 319.5,388.0 320.4,386.1 321.3,384.3 322.1,382.5 323.0,380.6 326.3,373.7 329.6,367.1 333.2,360.7 337.2,354.8 341.5,349.1 346.1,343.8 350.9,338.7 355.7,333.8 360.6,329.0 365.6,324.5 370.8,320.2 376.3,316.1 381.9,312.2 387.8,308.4 393.8,304.9 400.0,301.5 406.3,298.2 412.6,295.1 419.0,292.0 425.5,289.1 432.1,286.3 438.8,283.6 445.8,281.0 452.9,278.6 460.3,276.3 467.9,274.2 475.8,272.2 484.1,270.3 492.6,268.7 501.4,267.1 510.6,265.7 520.1,264.4 529.9,263.2 539.9,262.2 550.3,261.2 560.9,260.4 571.8,259.7 572.1,258.8 561.2,259.5 550.6,260.4 540.3,261.3 530.2,262.3 520.4,263.5 510.9,264.8 501.8,266.2 492.9,267.8 484.4,269.5 476.1,271.3 468.2,273.3 460.6,275.4 453.2,277.7 446.1,280.1 439.1,282.7 432.4,285.4 425.7,288.2 419.2,291.1 412.8,294.1 406.5,297.3 400.2,300.6 394.1,303.9 388.0,307.5 382.2,311.2 376.5,315.1 371.1,319.2 365.9,323.5 360.8,328.1 355.9,332.8 351.1,337.7 346.4,342.8 341.8,348.1 337.4,353.7 333.4,359.7 329.9,366.0 326.5,372.7 323.3,379.6 322.4,381.4 321.5,383.2 320.6,385.1 319.8,386.9 318.9,388.8 318.1,390.7 317.3,392.6 316.6,394.5 315.9,396.4 315.3,398.3 314.8,400.2" fill="#0000ff" stroke="#0000ff" stroke-width=".7"/>
<polygon points="314.8,400.2 315.3,398.3 315.9,396.4 316.6,394.5 317.3,392.6 318.1,390.7 318.9,388.8 319.8,386.9 320.6,385.1 321.5,383.2 322.4,381.4 323.3,379.6 326.5,372.7 329.9,366.0 333.4,359.7 337.4,353.7 341.8,348.1 346.4,342.8 351.1,337.7 355.9,332.8 360.8,328.1 365.9,323.5 371.1,319.2 376.5,315.1 382.2,311.2 388.0,307.5 394.1,303.9 400.2,300.6 406.5,297.3 412.8,294.1 419.2,291.1 425.7,288.2 432.4,285.4 439.1,282.7 446.1,280.1 453.2,277.7 460.6,275.4 468.2,273.3 476.1,271.3 484.4,269.5 492.9,267.8 501.8,266.2 510.9,264.8 520.4,263.5 530.2,262.3 540.3,261.3 550.6,260.4 561.2,259.5 572.1,258.8 572.5,257.9 561.6,258.7 550.9,259.5 540.6,260.4 530.5,261.5 520.7,262.6 511.2,263.9 502.1,265.3 493.2,266.9 484.6,268.5 476.4,270.4 468.5,272.4 460.9,274.5 453.5,276.8 446.3,279.2 439.4,281.8 432.6,284.4 426.0,287.2 419.5,290.2 413.1,293.2 406.8,296.3 400.5,299.6 394.3,303.0 388.3,306.5 382.4,310.2 376.7,314.1 371.3,318.2 366.1,322.6 361.1,327.1 356.2,331.8 351.3,336.7 346.6,341.8 342.0,347.1 337.6,352.7 333.6,358.7 330.1,365.0 326.8,371.6 323.5,378.5 322.6,380.3 321.7,382.2 320.8,384.0 320.0,385.9 319.1,387.7 318.3,389.6 317.6,391.5 316.9,393.4 316.2,395.3 315.6,397.2 315.1,399.1" fill="#0000ff" stroke="#0000ff" stroke-width=".7"/>
<polygon points="315.1,399.1 315.6,397.2 316.2,395.3 316.9,393.4 317.6,391.5 318.3,389.6 319.1,387.7 320.0,385.9 320.8,384.0 321.7,382.2 322.6,380.3 323.5,378.5 326.8,371.6 330.1,365.0 333.6,358.7 337.6,352.7 342.0,347.1 346.6,341.8 351.3,336.7 356.2,331.8 361.1,327.1 366.1,322.6 371.3,318.2 376.7,314.1 382.4,310.2 388.3,306.5 394.3,303.0 400.5,299.6 406.8,296.3 413.1,293.2 419.5,290.2 426.0,287.2 432.6,284.4 439.4,281.8 446.3,279.2 453.5,276.8 460.9,274.5 468.5,272.4 476.4,270.4 484.6,268.5 493.2,266.9 502.1,265.3 511.2,263.9 520.7,262.6 530.5,261.5 540.6,260.4 550.9,259.5 561.6,258.7 572.5,257.9 572.8,257.0 561.9,257.8 551.3,258.6 540.9,259.5 530.8,260.6 521.0,261.7 511.5,263.0 502.4,264.4 493.5,266.0 484.9,267.6 476.7,269.5 468.8,271.5 461.1,273.6 453.7,275.9 446.6,278.3 439.6,280.8 432.9,283.5 426.2,286.3 419.7,289.2 413.3,292.2 407.0,295.4 400.7,298.6 394.6,302.0 388.5,305.6 382.6,309.3 377.0,313.1 371.5,317.2 366.3,321.6 361.3,326.1 356.4,330.8 351.5,335.7 346.8,340.8 342.2,346.1 337.8,351.7 333.9,357.6 330.3,364.0 327.0,370.6 323.7,377.4 322.8,379.3 321.9,381.1 321.1,382.9 320.2,384.8 319.4,386.6 318.6,388.5 317.8,390.4 317.1,392.3 316.5,394.2 315.9,396.1 315.4,398.0" fill="#0000ff" stroke="#0000ff" stroke-width=".7"/>
<polygon points="315.4,398.0 315.9,396.1 316.5,394.2 317.1,392.3 317.8,390.4 318.6,388.5 319.4,386.6 320.2,384.8 321.1,382.9 321.9,381.1 322.8,379.3 323.7,377.4 327.0,370.6 330.3,364.0 333.9,357.6 337.8,351.7 342.2,346.1 346.8,340.8 351.5,335.7 356.4,330.8 361.3,326.1 366.3,321.6 371.5,317.2 377.0,313.1 382.6,309.3 388.5,305.6 394.6,302.0 400.7,298.6 407.0,295.4 413.3,292.2 419.7,289.2 426.2,286.3 432.9,283.5 439.6,280.8 446.6,278.3 453.7,275.9 461.1,273.6 468.8,271.5 476.7,269.5 484.9,267.6 493.5,266.0 502.4,264.4 511.5,263.0 521.0,261.7 530.8,260.6 540.9,259.5 551.3,258.6 561.9,257.8 572.8,257.0 573.1,256.2 562.2,256.9 551.6,257.7 541.2,258.6 531.1,259.7 521.3,260.8 511.8,262.1 502.6,263.5 493.8,265.0 485.2,266.7 477.0,268.6 469.0,270.5 461.4,272.7 454.0,274.9 446.9,277.4 439.9,279.9 433.1,282.6 426.5,285.4 420.0,288.3 413.6,291.3 407.2,294.4 401.0,297.7 394.8,301.1 388.7,304.6 382.8,308.3 377.2,312.2 371.7,316.3 366.5,320.6 361.5,325.1 356.6,329.8 351.8,334.7 347.0,339.8 342.4,345.1 338.0,350.6 334.1,356.6 330.5,362.9 327.2,369.5 323.9,376.4 323.0,378.2 322.1,380.0 321.3,381.8 320.4,383.7 319.6,385.5 318.8,387.4 318.0,389.3 317.3,391.1 316.7,393.0 316.2,394.9 315.7,396.8" fill="#0000ff" stroke="#0000ff" stroke-width=".7"/>
<polygon points="315.7,396.8 316.2,394.9 316.7,393.0 317.3,391.1 318.0,389.3 318.8,387.4 319.6,385.5 320.4,383.7 321.3,381.8 322.1,380.0 323.0,378.2 323.9,376.4 327.2,369.5 330.5,362.9 334.1,356.6 338.0,350.6 342.4,345.1 347.0,339.8 351.8,334.7 356.6,329.8 361.5,325.1 366.5,320.6 371.7,316.3 377.2,312.2 382.8,308.3 388.7,304.6 394.8,301.1 401.0,297.7 407.2,294.4 413.6,291.3 420.0,288.3 426.5,285.4 433.1,282.6 439.9,279.9 446.9,277.4 454.0,274.9 461.4,272.7 469.0,270.5 477.0,268.6 485.2,266.7 493.8,265.0 502.6,263.5 511.8,262.1 521.3,260.8 531.1,259.7 541.2,258.6 551.6,257.7 562.2,256.9 573.1,256.2 573.5,255.3 562.6,256.0 551.9,256.8 541.5,257.7 531.4,258.8 521.6,259.9 512.1,261.2 502.9,262.6 494.0,264.1 485.5,265.8 477.2,267.6 469.3,269.6 461.6,271.7 454.3,274.0 447.1,276.4 440.1,279.0 433.4,281.6 426.7,284.4 420.2,287.3 413.8,290.3 407.5,293.5 401.2,296.7 395.0,300.1 388.9,303.6 383.1,307.3 377.4,311.2 372.0,315.3 366.7,319.6 361.7,324.1 356.8,328.8 352.0,333.7 347.2,338.7 342.6,344.0 338.2,349.6 334.2,355.5 330.7,361.8 327.3,368.5 324.1,375.3 323.2,377.1 322.3,378.9 321.4,380.7 320.6,382.6 319.8,384.4 319.0,386.3 318.2,388.1 317.6,390.0 316.9,391.9 316.4,393.8 316.0,395.6" fill="#0000ff" stroke="#0000ff" stroke-width=".7"/>
<polygon points="316.0,395.6 316.4,393.8 316.9,391.9 317.6,390.0 318.2,388.1 319.0,386.3 319.8,384.4 320.6,382.6 321.4,380.7 322.3,378.9 323.2,377.1 324.1,375.3 327.3,368.5 330.7,361.8 334.2,355.5 338.2,349.6 342.6,344.0 347.2,338.7 352.0,333.7 356.8,328.8 361.7,324.1 366.7,319.6 372.0,315.3 377.4,311.2 383.1,307.3 388.9,303.6 395.0,300.1 401.2,296.7 407.5,293.5 413.8,290.3 420.2,287.3 426.7,284.4 433.4,281.6 440.1,279.0 447.1,276.4 454.3,274.0 461.6,271.7 469.3,269.6 477.2,267.6 485.5,265.8 494.0,264.1 502.9,262.6 512.1,261.2 521.6,259.9 531.4,258.8 541.5,257.7 551.9,256.8 562.6,256.0 573.5,255.3 573.8,254.4 562.9,255.1 552.2,255.9 541.8,256.8 531.7,257.9 521.9,259.0 512.4,260.3 503.2,261.7 494.3,263.2 485.7,264.9 477.5,266.7 469.5,268.7 461.9,270.8 454.5,273.1 447.3,275.5 440.4,278.0 433.6,280.7 426.9,283.5 420.4,286.4 414.0,289.4 407.7,292.5 401.4,295.8 395.2,299.1 389.2,302.6 383.3,306.3 377.6,310.2 372.2,314.3 366.9,318.6 361.9,323.1 357.0,327.8 352.1,332.6 347.4,337.7 342.8,343.0 338.4,348.6 334.4,354.5 330.9,360.8 327.5,367.4 324.3,374.2 323.4,376.0 322.5,377.8 321.6,379.6 320.8,381.5 320.0,383.3 319.2,385.1 318.4,387.0 317.8,388.9 317.2,390.7 316.7,392.6 316.3,394.5" fill="#0000ff" stroke="#0000ff" stroke-width=".7"/>
<polygon points="316.3,394.5 316.7,392.6 317.2,390.7 317.8,388.9 318.4,387.0 319.2,385.1 320.0,383.3 320.8,381.5 321.6,379.6 322.5,377.8 323.4,376.0 324.3,374.2 327.5,367.4 330.9,360.8 334.4,354.5 338.4,348.6 342.8,343.0 347.4,337.7 352.1,332.6 357.0,327.8 361.9,323.1 366.9,318.6 372.2,314.3 377.6,310.2 383.3,306.3 389.2,302.6 395.2,299.1 401.4,295.8 407.7,292.5 414.0,289.4 420.4,286.4 426.9,283.5 433.6,280.7 440.4,278.0 447.3,275.5 454.5,273.1 461.9,270.8 469.5,268.7 477.5,266.7 485.7,264.9 494.3,263.2 503.2,261.7 512.4,260.3 521.9,259.0 531.7,257.9 541.8,256.8 552.2,255.9 562.9,255.1 573.8,254.4 574.1,253.5 563.2,254.2 552.5,255.0 542.1,255.9 532.0,257.0 522.2,258.1 512.7,259.4 503.5,260.8 494.6,262.3 486.0,264.0 477.7,265.8 469.8,267.8 462.1,269.9 454.7,272.2 447.6,274.5 440.6,277.1 433.8,279.7 427.2,282.5 420.7,285.4 414.2,288.4 407.9,291.5 401.6,294.8 395.4,298.1 389.4,301.6 383.5,305.3 377.8,309.2 372.3,313.3 367.1,317.6 362.1,322.0 357.2,326.7 352.3,331.6 347.6,336.7 343.0,341.9 338.6,347.5 334.6,353.4 331.0,359.7 327.7,366.3 324.4,373.1 323.6,374.9 322.7,376.7 321.8,378.5 321.0,380.3 320.2,382.2 319.4,384.0 318.6,385.9 318.0,387.7 317.4,389.6 316.9,391.4 316.5,393.3" fill="#0000ff" stroke="#0000ff" stroke-width=".7"/>
<polygon points="316.5,393.3 316.9,391.4 317.4,389.6 318.0,387.7 318.6,385.9 319.4,384.0 320.2,382.2 321.0,380.3 321.8,378.5 322.7,376.7 323.6,374.9 324.4,373.1 327.7,366.3 331.0,359.7 334.6,353.4 338.6,347.5 343.0,341.9 347.6,336.7 352.3,331.6 357.2,326.7 362.1,322.0 367.1,317.6 372.3,313.3 377.8,309.2 383.5,305.3 389.4,301.6 395.4,298.1 401.6,294.8 407.9,291.5 414.2,288.4 420.7,285.4 427.2,282.5 433.8,279.7 440.6,277.1 447.6,274.5 454.7,272.2 462.1,269.9 469.8,267.8 477.7,265.8 486.0,264.0 494.6,262.3 503.5,260.8 512.7,259.4 522.2,258.1 532.0,257.0 542.1,255.9 552.5,255.0 563.2,254.2 574.1,253.5 574.4,252.6 563.5,253.3 552.8,254.1 542.4,255.0 532.3,256.0 522.4,257.2 512.9,258.5 503.7,259.9 494.8,261.4 486.2,263.1 478.0,264.9 470.0,266.8 462.4,269.0 455.0,271.2 447.8,273.6 440.8,276.1 434.0,278.8 427.4,281.6 420.9,284.4 414.4,287.5 408.1,290.6 401.8,293.8 395.6,297.2 389.6,300.7 383.7,304.3 378.0,308.2 372.5,312.3 367.3,316.5 362.3,321.0 357.3,325.7 352.5,330.6 347.8,335.6 343.1,340.9 338.8,346.5 334.8,352.4 331.2,358.6 327.9,365.2 324.6,372.0 323.7,373.8 322.9,375.6 322.0,377.4 321.2,379.2 320.3,381.0 319.6,382.9 318.8,384.7 318.2,386.6 317.6,388.4 317.1,390.3 316.8,392.1" fill="#0000ff" stroke="#0000ff" stroke-width=".7"/>
<polygon points="316.8,392.1 317.1,390.3 317.6,388.4 318.2,386.6 318.8,384.7 319.6,382.9 320.3,381.0 321.2,379.2 322.0,377.4 322.9,375.6 323.7,373.8 324.6,372.0 327.9,365.2 331.2,358.6 334.8,352.4 338.8,346.5 343.1,340.9 347.8,335.6 352.5,330.6 357.3,325.7 362.3,321.0 367.3,316.5 372.5,312.3 378.0,308.2 383.7,304.3 389.6,300.7 395.6,297.2 401.8,293.8 408.1,290.6 414.4,287.5 420.9,284.4 427.4,281.6 434.0,278.8 440.8,276.1 447.8,273.6 455.0,271.2 462.4,269.0 470.0,266.8 478.0,264.9 486.2,263.1 494.8,261.4 503.7,259.9 512.9,258.5 522.4,257.2 532.3,256.0 542.4,255.0 552.8,254.1 563.5,253.3 574.4,252.6 574.7,251.7 563.8,252.4 553.1,253.2 542.7,254.1 532.6,255.1 522.7,256.3 513.2,257.5 504.0,258.9 495.1,260.5 486.5,262.1 478.2,264.0 470.3,265.9 462.6,268.0 455.2,270.3 448.0,272.7 441.1,275.2 434.3,277.8 427.6,280.6 421.1,283.5 414.7,286.5 408.3,289.6 402.0,292.8 395.8,296.2 389.8,299.7 383.9,303.3 378.2,307.2 372.7,311.3 367.5,315.5 362.4,320.0 357.5,324.7 352.7,329.5 347.9,334.6 343.3,339.8 339.0,345.4 335.0,351.3 331.4,357.6 328.1,364.1 324.8,370.9 323.9,372.7 323.0,374.5 322.2,376.3 321.3,378.1 320.5,379.9 319.7,381.7 319.0,383.6 318.4,385.4 317.8,387.2 317.4,389.1 317.0,390.9" fill="#0000ff" stroke="#0000ff" stroke-width=".7"/>
<polygon points="317.0,390.9 317.4,389.1 317.8,387.2 318.4,385.4 319.0,383.6 319.7,381.7 320.5,379.9 321.3,378.1 322.2,376.3 323.0,374.5 323.9,372.7 324.8,370.9 328.1,364.1 331.4,357.6 335.0,351.3 339.0,345.4 343.3,339.8 347.9,334.6 352.7,329.5 357.5,324.7 362.4,320.0 367.5,315.5 372.7,311.3 378.2,307.2 383.9,303.3 389.8,299.7 395.8,296.2 402.0,292.8 408.3,289.6 414.7,286.5 421.1,283.5 427.6,280.6 434.3,277.8 441.1,275.2 448.0,272.7 455.2,270.3 462.6,268.0 470.3,265.9 478.2,264.0 486.5,262.1 495.1,260.5 504.0,258.9 513.2,257.5 522.7,256.3 532.6,255.1 542.7,254.1 553.1,253.2 563.8,252.4 574.7,251.7 575.0,250.8 564.1,251.5 553.4,252.3 543.0,253.2 532.8,254.2 523.0,255.4 513.5,256.6 504.2,258.0 495.3,259.5 486.7,261.2 478.5,263.0 470.5,265.0 462.8,267.1 455.4,269.3 448.3,271.7 441.3,274.2 434.5,276.9 427.8,279.6 421.3,282.5 414.9,285.5 408.5,288.6 402.2,291.8 396.0,295.2 389.9,298.7 384.0,302.3 378.4,306.2 372.9,310.2 367.7,314.5 362.6,319.0 357.7,323.6 352.9,328.5 348.1,333.5 343.5,338.8 339.1,344.3 335.1,350.2 331.5,356.5 328.2,363.0 324.9,369.8 324.1,371.6 323.2,373.4 322.3,375.2 321.5,377.0 320.7,378.8 319.9,380.6 319.2,382.4 318.6,384.2 318.0,386.1 317.6,387.9 317.3,389.7" fill="#0000ff" stroke="#0000ff" stroke-width=".7"/>
<polygon points="317.3,389.7 317.6,387.9 318.0,386.1 318.6,384.2 319.2,382.4 319.9,380.6 320.7,378.8 321.5,377.0 322.3,375.2 323.2,373.4 324.1,371.6 324.9,369.8 328.2,363.0 331.5,356.5 335.1,350.2 339.1,344.3 343.5,338.8 348.1,333.5 352.9,328.5 357.7,323.6 362.6,319.0 367.7,314.5 372.9,310.2 378.4,306.2 384.0,302.3 389.9,298.7 396.0,295.2 402.2,291.8 408.5,288.6 414.9,285.5 421.3,282.5 427.8,279.6 434.5,276.9 441.3,274.2 448.3,271.7 455.4,269.3 462.8,267.1 470.5,265.0 478.5,263.0 486.7,261.2 495.3,259.5 504.2,258.0 513.5,256.6 523.0,255.4 532.8,254.2 543.0,253.2 553.4,252.3 564.1,251.5 575.0,250.8 575.3,249.8 564.4,250.6 553.7,251.4 543.2,252.3 533.1,253.3 523.3,254.4 513.7,255.7 504.5,257.1 495.6,258.6 487.0,260.3 478.7,262.1 470.7,264.0 463.1,266.1 455.7,268.4 448.5,270.8 441.5,273.3 434.7,275.9 428.0,278.7 421.5,281.6 415.1,284.5 408.7,287.6 402.4,290.9 396.2,294.2 390.1,297.7 384.2,301.3 378.5,305.2 373.1,309.2 367.9,313.5 362.8,318.0 357.9,322.6 353.0,327.5 348.3,332.5 343.7,337.7 339.3,343.3 335.3,349.1 331.7,355.4 328.4,361.9 325.1,368.7 324.2,370.5 323.4,372.2 322.5,374.0 321.7,375.8 320.9,377.6 320.1,379.4 319.4,381.3 318.8,383.1 318.2,384.9 317.8,386.7 317.5,388.5" fill="#0000ff" stroke="#0000ff" stroke-width=".7"/>
<polygon points="317.5,388.5 317.8,386.7 318.2,384.9 318.8,383.1 319.4,381.3 320.1,379.4 320.9,377.6 321.7,375.8 322.5,374.0 323.4,372.2 324.2,370.5 325.1,368.7 328.4,361.9 331.7,355.4 335.3,349.1 339.3,343.3 343.7,337.7 348.3,332.5 353.0,327.5 357.9,322.6 362.8,318.0 367.9,313.5 373.1,309.2 378.5,305.2 384.2,301.3 390.1,297.7 396.2,294.2 402.4,290.9 408.7,287.6 415.1,284.5 421.5,281.6 428.0,278.7 434.7,275.9 441.5,273.3 448.5,270.8 455.7,268.4 463.1,266.1 470.7,264.0 478.7,262.1 487.0,260.3 495.6,258.6 504.5,257.1 513.7,255.7 523.3,254.4 533.1,253.3 543.2,252.3 553.7,251.4 564.4,250.6 575.3,249.8 575.6,248.9 564.7,249.6 554.0,250.5 543.5,251.4 533.4,252.4 523.5,253.5 514.0,254.8 504.8,256.2 495.8,257.7 487.2,259.3 479.0,261.2 471.0,263.1 463.3,265.2 455.9,267.4 448.7,269.8 441.7,272.3 434.9,275.0 428.2,277.7 421.7,280.6 415.3,283.6 408.9,286.7 402.6,289.9 396.4,293.2 390.3,296.7 384.4,300.3 378.7,304.2 373.3,308.2 368.0,312.5 363.0,316.9 358.0,321.6 353.2,326.4 348.4,331.4 343.8,336.7 339.5,342.2 335.5,348.1 331.9,354.3 328.5,360.8 325.3,367.6 324.4,369.3 323.5,371.1 322.7,372.9 321.8,374.7 321.0,376.5 320.3,378.3 319.6,380.1 319.0,381.9 318.4,383.7 318.0,385.5 317.8,387.3" fill="#0000ff" stroke="#0000ff" stroke-width=".7"/>
<polygon points="317.8,387.3 318.0,385.5 318.4,383.7 319.0,381.9 319.6,380.1 320.3,378.3 321.0,376.5 321.8,374.7 322.7,372.9 323.5,371.1 324.4,369.3 325.3,367.6 328.5,360.8 331.9,354.3 335.5,348.1 339.5,342.2 343.8,336.7 348.4,331.4 353.2,326.4 358.0,321.6 363.0,316.9 368.0,312.5 373.3,308.2 378.7,304.2 384.4,300.3 390.3,296.7 396.4,293.2 402.6,289.9 408.9,286.7 415.3,283.6 421.7,280.6 428.2,277.7 434.9,275.0 441.7,272.3 448.7,269.8 455.9,267.4 463.3,265.2 471.0,263.1 479.0,261.2 487.2,259.3 495.8,257.7 504.8,256.2 514.0,254.8 523.5,253.5 533.4,252.4 543.5,251.4 554.0,250.5 564.7,249.6 575.6,248.9 575.9,248.0 564.9,248.7 554.2,249.5 543.8,250.4 533.6,251.5 523.8,252.6 514.2,253.9 505.0,255.2 496.1,256.8 487.5,258.4 479.2,260.2 471.2,262.2 463.5,264.3 456.1,266.5 448.9,268.9 441.9,271.4 435.1,274.0 428.5,276.7 421.9,279.6 415.5,282.6 409.1,285.7 402.8,288.9 396.6,292.2 390.5,295.7 384.6,299.3 378.9,303.2 373.5,307.2 368.2,311.4 363.2,315.9 358.2,320.5 353.4,325.4 348.6,330.4 344.0,335.6 339.6,341.1 335.6,347.0 332.0,353.2 328.7,359.7 325.4,366.4 324.6,368.2 323.7,370.0 322.8,371.8 322.0,373.6 321.2,375.4 320.4,377.1 319.7,378.9 319.1,380.7 318.6,382.5 318.3,384.3 318.0,386.1" fill="#0000ff" stroke="#0000ff" stroke-width=".7"/>
<polygon points="318.0,386.1 318.3,384.3 318.6,382.5 319.1,380.7 319.7,378.9 320.4,377.1 321.2,375.4 322.0,373.6 322.8,371.8 323.7,370.0 324.6,368.2 325.4,366.4 328.7,359.7 332.0,353.2 335.6,347.0 339.6,341.1 344.0,335.6 348.6,330.4 353.4,325.4 358.2,320.5 363.2,315.9 368.2,311.4 373.5,307.2 378.9,303.2 384.6,299.3 390.5,295.7 396.6,292.2 402.8,288.9 409.1,285.7 415.5,282.6 421.9,279.6 428.5,276.7 435.1,274.0 441.9,271.4 448.9,268.9 456.1,266.5 463.5,264.3 471.2,262.2 479.2,260.2 487.5,258.4 496.1,256.8 505.0,255.2 514.2,253.9 523.8,252.6 533.6,251.5 543.8,250.4 554.2,249.5 564.9,248.7 575.9,248.0 576.2,247.1 565.2,247.8 554.5,248.6 544.1,249.5 533.9,250.5 524.0,251.7 514.5,252.9 505.3,254.3 496.3,255.8 487.7,257.5 479.4,259.3 471.4,261.2 463.8,263.3 456.3,265.5 449.1,267.9 442.1,270.4 435.3,273.0 428.7,275.8 422.1,278.6 415.7,281.6 409.3,284.7 403.0,287.9 396.8,291.2 390.7,294.7 384.8,298.3 379.1,302.1 373.6,306.2 368.4,310.4 363.3,314.9 358.4,319.5 353.5,324.3 348.8,329.3 344.2,334.5 339.8,340.1 335.8,345.9 332.2,352.1 328.9,358.6 325.6,365.3 324.7,367.1 323.9,368.9 323.0,370.6 322.2,372.4 321.4,374.2 320.6,376.0 319.9,377.8 319.3,379.6 318.8,381.3 318.5,383.1 318.3,384.9" fill="#0000ff" stroke="#0000ff" stroke-width=".7"/>
<polygon points="318.3,384.9 318.5,383.1 318.8,381.3 319.3,379.6 319.9,377.8 320.6,376.0 321.4,374.2 322.2,372.4 323.0,370.6 323.9,368.9 324.7,367.1 325.6,365.3 328.9,358.6 332.2,352.1 335.8,345.9 339.8,340.1 344.2,334.5 348.8,329.3 353.5,324.3 358.4,319.5 363.3,314.9 368.4,310.4 373.6,306.2 379.1,302.1 384.8,298.3 390.7,294.7 396.8,291.2 403.0,287.9 409.3,284.7 415.7,281.6 422.1,278.6 428.7,275.8 435.3,273.0 442.1,270.4 449.1,267.9 456.3,265.5 463.8,263.3 471.4,261.2 479.4,259.3 487.7,257.5 496.3,255.8 505.3,254.3 514.5,252.9 524.0,251.7 533.9,250.5 544.1,249.5 554.5,248.6 565.2,247.8 576.2,247.1 576.5,246.2 565.5,246.9 554.8,247.7 544.3,248.6 534.2,249.6 524.3,250.7 514.8,252.0 505.5,253.4 496.6,254.9 488.0,256.5 479.7,258.3 471.7,260.3 464.0,262.4 456.6,264.6 449.4,266.9 442.4,269.4 435.5,272.1 428.9,274.8 422.3,277.7 415.9,280.6 409.5,283.7 403.2,286.9 397.0,290.2 390.9,293.7 385.0,297.3 379.3,301.1 373.8,305.2 368.6,309.4 363.5,313.8 358.6,318.5 353.7,323.3 348.9,328.3 344.3,333.5 339.9,339.0 335.9,344.8 332.3,351.0 329.0,357.5 325.7,364.2 324.9,366.0 324.0,367.7 323.2,369.5 322.3,371.3 321.5,373.1 320.8,374.8 320.1,376.6 319.5,378.4 319.0,380.2 318.7,381.9 318.5,383.7" fill="#0000ff" stroke="#0000ff" stroke-width=".7"/>
<polygon points="318.5,383.7 318.7,381.9 319.0,380.2 319.5,378.4 320.1,376.6 320.8,374.8 321.5,373.1 322.3,371.3 323.2,369.5 324.0,367.7 324.9,366.0 325.7,364.2 329.0,357.5 332.3,351.0 335.9,344.8 339.9,339.0 344.3,333.5 348.9,328.3 353.7,323.3 358.6,318.5 363.5,313.8 368.6,309.4 373.8,305.2 379.3,301.1 385.0,297.3 390.9,293.7 397.0,290.2 403.2,286.9 409.5,283.7 415.9,280.6 422.3,277.7 428.9,274.8 435.5,272.1 442.4,269.4 449.4,266.9 456.6,264.6 464.0,262.4 471.7,260.3 479.7,258.3 488.0,256.5 496.6,254.9 505.5,253.4 514.8,252.0 524.3,250.7 534.2,249.6 544.3,248.6 554.8,247.7 565.5,246.9 576.5,246.2 576.8,245.3 565.8,246.0 555.1,246.8 544.6,247.7 534.5,248.7 524.6,249.8 515.0,251.1 505.8,252.4 496.8,254.0 488.2,255.6 479.9,257.4 471.9,259.3 464.2,261.4 456.8,263.6 449.6,266.0 442.6,268.5 435.8,271.1 429.1,273.8 422.5,276.7 416.1,279.6 409.7,282.7 403.4,285.9 397.2,289.2 391.1,292.7 385.2,296.3 379.5,300.1 374.0,304.1 368.7,308.4 363.7,312.8 358.7,317.4 353.9,322.2 349.1,327.2 344.5,332.4 340.1,337.9 336.1,343.7 332.5,349.9 329.2,356.4 325.9,363.1 325.0,364.8 324.2,366.6 323.3,368.4 322.5,370.1 321.7,371.9 321.0,373.7 320.3,375.4 319.7,377.2 319.2,379.0 318.9,380.7 318.8,382.5" fill="#0000ff" stroke="#0000ff" stroke-width=".7"/>
<polygon points="318.8,382.5 318.9,380.7 319.2,379.0 319.7,377.2 320.3,375.4 321.0,373.7 321.7,371.9 322.5,370.1 323.3,368.4 324.2,366.6 325.0,364.8 325.9,363.1 329.2,356.4 332.5,349.9 336.1,343.7 340.1,337.9 344.5,332.4 349.1,327.2 353.9,322.2 358.7,317.4 363.7,312.8 368.7,308.4 374.0,304.1 379.5,300.1 385.2,296.3 391.1,292.7 397.2,289.2 403.4,285.9 409.7,282.7 416.1,279.6 422.5,276.7 429.1,273.8 435.8,271.1 442.6,268.5 449.6,266.0 456.8,263.6 464.2,261.4 471.9,259.3 479.9,257.4 488.2,255.6 496.8,254.0 505.8,252.4 515.0,251.1 524.6,249.8 534.5,248.7 544.6,247.7 555.1,246.8 565.8,246.0 576.8,245.3 577.1,244.4 566.1,245.1 555.4,245.9 544.9,246.8 534.7,247.8 524.8,248.9 515.3,250.1 506.0,251.5 497.1,253.0 488.4,254.7 480.1,256.4 472.1,258.4 464.4,260.5 457.0,262.7 449.8,265.0 442.8,267.5 436.0,270.1 429.3,272.9 422.7,275.7 416.3,278.7 409.9,281.7 403.6,284.9 397.4,288.2 391.3,291.7 385.3,295.3 379.6,299.1 374.2,303.1 368.9,307.3 363.8,311.7 358.9,316.4 354.1,321.2 349.3,326.1 344.6,331.3 340.3,336.8 336.3,342.6 332.7,348.8 329.3,355.3 326.1,362.0 325.2,363.7 324.3,365.5 323.5,367.2 322.7,369.0 321.9,370.7 321.1,372.5 320.5,374.3 319.9,376.0 319.4,377.8 319.1,379.5 319.0,381.2" fill="#0000ff" stroke="#0000ff" stroke-width=".7"/>
<polygon points="319.0,381.2 319.1,379.5 319.4,377.8 319.9,376.0 320.5,374.3 321.1,372.5 321.9,370.7 322.7,369.0 323.5,367.2 324.3,365.5 325.2,363.7 326.1,362.0 329.3,355.3 332.7,348.8 336.3,342.6 340.3,336.8 344.6,331.3 349.3,326.1 354.1,321.2 358.9,316.4 363.8,311.7 368.9,307.3 374.2,303.1 379.6,299.1 385.3,295.3 391.3,291.7 397.4,288.2 403.6,284.9 409.9,281.7 416.3,278.7 422.7,275.7 429.3,272.9 436.0,270.1 442.8,267.5 449.8,265.0 457.0,262.7 464.4,260.5 472.1,258.4 480.1,256.4 488.4,254.7 497.1,253.0 506.0,251.5 515.3,250.1 524.8,248.9 534.7,247.8 544.9,246.8 555.4,245.9 566.1,245.1 577.1,244.4 577.4,243.4 566.4,244.1 555.7,244.9 545.2,245.8 535.0,246.8 525.1,248.0 515.5,249.2 506.3,250.6 497.3,252.1 488.7,253.7 480.4,255.5 472.4,257.4 464.7,259.5 457.2,261.7 450.0,264.1 443.0,266.5 436.2,269.2 429.5,271.9 422.9,274.7 416.5,277.7 410.1,280.7 403.8,283.9 397.6,287.2 391.5,290.7 385.5,294.3 379.8,298.1 374.4,302.1 369.1,306.3 364.0,310.7 359.1,315.3 354.2,320.1 349.4,325.1 344.8,330.3 340.4,335.7 336.4,341.6 332.8,347.7 329.5,354.2 326.2,360.8 325.4,362.6 324.5,364.3 323.6,366.1 322.8,367.8 322.0,369.6 321.3,371.3 320.6,373.1 320.1,374.8 319.6,376.6 319.3,378.3 319.2,380.0" fill="#0000ff" stroke="#0000ff" stroke-width=".7"/>
<polygon points="319.2,380.0 319.3,378.3 319.6,376.6 320.1,374.8 320.6,373.1 321.3,371.3 322.0,369.6 322.8,367.8 323.6,366.1 324.5,364.3 325.4,362.6 326.2,360.8 329.5,354.2 332.8,347.7 336.4,341.6 340.4,335.7 344.8,330.3 349.4,325.1 354.2,320.1 359.1,315.3 364.0,310.7 369.1,306.3 374.4,302.1 379.8,298.1 385.5,294.3 391.5,290.7 397.6,287.2 403.8,283.9 410.1,280.7 416.5,277.7 422.9,274.7 429.5,271.9 436.2,269.2 443.0,266.5 450.0,264.1 457.2,261.7 464.7,259.5 472.4,257.4 480.4,255.5 488.7,253.7 497.3,252.1 506.3,250.6 515.5,249.2 525.1,248.0 535.0,246.8 545.2,245.8 555.7,244.9 566.4,244.1 577.4,243.4 577.7,242.5 566.7,243.2 555.9,244.0 545.5,244.9 535.3,245.9 525.4,247.0 515.8,248.3 506.5,249.6 497.6,251.1 488.9,252.8 480.6,254.6 472.6,256.5 464.9,258.6 457.5,260.8 450.2,263.1 443.2,265.6 436.4,268.2 429.7,270.9 423.1,273.7 416.7,276.7 410.3,279.8 404.0,282.9 397.7,286.2 391.6,289.7 385.7,293.3 380.0,297.1 374.5,301.1 369.3,305.3 364.2,309.7 359.3,314.3 354.4,319.0 349.6,324.0 345.0,329.2 340.6,334.7 336.6,340.5 333.0,346.6 329.7,353.1 326.4,359.7 325.5,361.4 324.7,363.2 323.8,364.9 323.0,366.7 322.2,368.4 321.5,370.2 320.8,371.9 320.3,373.7 319.8,375.4 319.6,377.1 319.5,378.8" fill="#0000ff" stroke="#0000ff" stroke-width=".7"/>
<polygon points="319.5,378.8 319.6,377.1 319.8,375.4 320.3,373.7 320.8,371.9 321.5,370.2 322.2,368.4 323.0,366.7 323.8,364.9 324.7,363.2 325.5,361.4 326.4,359.7 329.7,353.1 333.0,346.6 336.6,340.5 340.6,334.7 345.0,329.2 349.6,324.0 354.4,319.0 359.3,314.3 364.2,309.7 369.3,305.3 374.5,301.1 380.0,297.1 385.7,293.3 391.6,289.7 397.7,286.2 404.0,282.9 410.3,279.8 416.7,276.7 423.1,273.7 429.7,270.9 436.4,268.2 443.2,265.6 450.2,263.1 457.5,260.8 464.9,258.6 472.6,256.5 480.6,254.6 488.9,252.8 497.6,251.1 506.5,249.6 515.8,248.3 525.4,247.0 535.3,245.9 545.5,244.9 555.9,244.0 566.7,243.2 577.7,242.5 578.0,241.6 567.0,242.3 556.2,243.1 545.7,244.0 535.5,245.0 525.6,246.1 516.1,247.3 506.8,248.7 497.8,250.2 489.2,251.8 480.9,253.6 472.9,255.5 465.1,257.6 457.7,259.8 450.5,262.1 443.5,264.6 436.6,267.2 429.9,269.9 423.4,272.8 416.9,275.7 410.5,278.8 404.2,281.9 397.9,285.2 391.8,288.6 385.9,292.2 380.2,296.0 374.7,300.0 369.5,304.2 364.4,308.6 359.4,313.2 354.6,318.0 349.8,322.9 345.2,328.1 340.8,333.6 336.8,339.4 333.2,345.5 329.8,352.0 326.6,358.6 325.7,360.3 324.8,362.1 324.0,363.8 323.2,365.5 322.4,367.3 321.7,369.0 321.0,370.7 320.5,372.5 320.0,374.2 319.8,375.9 319.8,377.6" fill="#0000ff" stroke="#0000ff" stroke-width=".7"/>
<polygon points="319.8,377.6 319.8,375.9 320.0,374.2 320.5,372.5 321.0,370.7 321.7,369.0 322.4,367.3 323.2,365.5 324.0,363.8 324.8,362.1 325.7,360.3 326.6,358.6 329.8,352.0 333.2,345.5 336.8,339.4 340.8,333.6 345.2,328.1 349.8,322.9 354.6,318.0 359.4,313.2 364.4,308.6 369.5,304.2 374.7,300.0 380.2,296.0 385.9,292.2 391.8,288.6 397.9,285.2 404.2,281.9 410.5,278.8 416.9,275.7 423.4,272.8 429.9,269.9 436.6,267.2 443.5,264.6 450.5,262.1 457.7,259.8 465.1,257.6 472.9,255.5 480.9,253.6 489.2,251.8 497.8,250.2 506.8,248.7 516.1,247.3 525.6,246.1 535.5,245.0 545.7,244.0 556.2,243.1 567.0,242.3 578.0,241.6 578.3,240.7 567.3,241.4 556.5,242.2 546.0,243.1 535.8,244.1 525.9,245.2 516.3,246.4 507.0,247.8 498.1,249.3 489.4,250.9 481.1,252.7 473.1,254.6 465.4,256.6 457.9,258.8 450.7,261.2 443.7,263.6 436.8,266.2 430.1,268.9 423.6,271.8 417.1,274.7 410.7,277.8 404.4,280.9 398.1,284.2 392.0,287.6 386.1,291.2 380.4,295.0 374.9,299.0 369.6,303.2 364.6,307.6 359.6,312.2 354.8,316.9 350.0,321.9 345.3,327.0 340.9,332.5 336.9,338.3 333.3,344.4 330.0,350.9 326.7,357.4 325.9,359.2 325.0,360.9 324.2,362.6 323.3,364.4 322.6,366.1 321.8,367.8 321.2,369.6 320.7,371.3 320.3,373.0 320.0,374.7 320.0,376.3" fill="#0000ff" stroke="#0000ff" stroke-width=".7"/>
<polygon points="320.0,376.3 320.0,374.7 320.3,373.0 320.7,371.3 321.2,369.6 321.8,367.8 322.6,366.1 323.3,364.4 324.2,362.6 325.0,360.9 325.9,359.2 326.7,357.4 330.0,350.9 333.3,344.4 336.9,338.3 340.9,332.5 345.3,327.0 350.0,321.9 354.8,316.9 359.6,312.2 364.6,307.6 369.6,303.2 374.9,299.0 380.4,295.0 386.1,291.2 392.0,287.6 398.1,284.2 404.4,280.9 410.7,277.8 417.1,274.7 423.6,271.8 430.1,268.9 436.8,266.2 443.7,263.6 450.7,261.2 457.9,258.8 465.4,256.6 473.1,254.6 481.1,252.7 489.4,250.9 498.1,249.3 507.0,247.8 516.3,246.4 525.9,245.2 535.8,244.1 546.0,243.1 556.5,242.2 567.3,241.4 578.3,240.7 578.6,239.8 567.6,240.5 556.8,241.2 546.3,242.1 536.1,243.1 526.2,244.2 516.6,245.5 507.3,246.8 498.3,248.3 489.7,250.0 481.4,251.7 473.3,253.6 465.6,255.7 458.2,257.9 450.9,260.2 443.9,262.7 437.1,265.3 430.4,268.0 423.8,270.8 417.3,273.7 410.9,276.8 404.6,279.9 398.3,283.2 392.2,286.6 386.3,290.2 380.6,294.0 375.1,298.0 369.8,302.1 364.8,306.5 359.8,311.1 354.9,315.9 350.1,320.8 345.5,326.0 341.1,331.4 337.1,337.2 333.5,343.3 330.2,349.7 326.9,356.3 326.0,358.0 325.2,359.8 324.3,361.5 323.5,363.2 322.7,364.9 322.0,366.7 321.4,368.4 320.9,370.1 320.5,371.8 320.3,373.5 320.3,375.1" fill="#0000ff" stroke="#0000ff" stroke-width=".7"/>
<polygon points="320.3,375.1 320.3,373.5 320.5,371.8 320.9,370.1 321.4,368.4 322.0,366.7 322.7,364.9 323.5,363.2 324.3,361.5 325.2,359.8 326.0,358.0 326.9,356.3 330.2,349.7 333.5,343.3 337.1,337.2 341.1,331.4 345.5,326.0 350.1,320.8 354.9,315.9 359.8,311.1 364.8,306.5 369.8,302.1 375.1,298.0 380.6,294.0 386.3,290.2 392.2,286.6 398.3,283.2 404.6,279.9 410.9,276.8 417.3,273.7 423.8,270.8 430.4,268.0 437.1,265.3 443.9,262.7 450.9,260.2 458.2,257.9 465.6,255.7 473.3,253.6 481.4,251.7 489.7,250.0 498.3,248.3 507.3,246.8 516.6,245.5 526.2,244.2 536.1,243.1 546.3,242.1 556.8,241.2 567.6,240.5 578.6,239.8 578.9,238.8 567.9,239.5 557.1,240.3 546.6,241.2 536.4,242.2 526.5,243.3 516.9,244.5 507.6,245.9 498.6,247.4 489.9,249.0 481.6,250.8 473.6,252.7 465.9,254.7 458.4,256.9 451.2,259.3 444.1,261.7 437.3,264.3 430.6,267.0 424.0,269.8 417.5,272.7 411.1,275.8 404.8,278.9 398.6,282.2 392.4,285.6 386.5,289.2 380.8,293.0 375.3,296.9 370.0,301.1 364.9,305.5 360.0,310.1 355.1,314.8 350.3,319.7 345.7,324.9 341.3,330.3 337.3,336.1 333.7,342.2 330.4,348.6 327.1,355.2 326.2,356.9 325.4,358.6 324.5,360.4 323.7,362.1 322.9,363.8 322.2,365.5 321.6,367.2 321.1,368.9 320.7,370.6 320.5,372.2 320.6,373.9" fill="#0000ff" stroke="#0000ff" stroke-width=".7"/>
<polygon points="320.6,373.9 320.5,372.2 320.7,370.6 321.1,368.9 321.6,367.2 322.2,365.5 322.9,363.8 323.7,362.1 324.5,360.4 325.4,358.6 326.2,356.9 327.1,355.2 330.4,348.6 333.7,342.2 337.3,336.1 341.3,330.3 345.7,324.9 350.3,319.7 355.1,314.8 360.0,310.1 364.9,305.5 370.0,301.1 375.3,296.9 380.8,293.0 386.5,289.2 392.4,285.6 398.6,282.2 404.8,278.9 411.1,275.8 417.5,272.7 424.0,269.8 430.6,267.0 437.3,264.3 444.1,261.7 451.2,259.3 458.4,256.9 465.9,254.7 473.6,252.7 481.6,250.8 489.9,249.0 498.6,247.4 507.6,245.9 516.9,244.5 526.5,243.3 536.4,242.2 546.6,241.2 557.1,240.3 567.9,239.5 578.9,238.8 579.3,237.9 568.2,238.6 557.4,239.4 546.9,240.3 536.7,241.3 526.8,242.4 517.2,243.6 507.9,245.0 498.9,246.4 490.2,248.1 481.9,249.8 473.8,251.7 466.1,253.8 458.6,256.0 451.4,258.3 444.4,260.7 437.5,263.3 430.8,266.0 424.2,268.8 417.8,271.8 411.4,274.8 405.0,277.9 398.8,281.2 392.7,284.6 386.7,288.2 381.0,291.9 375.5,295.9 370.2,300.1 365.1,304.4 360.2,309.0 355.3,313.8 350.5,318.7 345.9,323.8 341.5,329.2 337.5,335.0 333.9,341.1 330.5,347.5 327.3,354.0 326.4,355.8 325.6,357.5 324.7,359.2 323.9,360.9 323.1,362.6 322.4,364.3 321.8,366.0 321.3,367.7 320.9,369.4 320.8,371.0 320.8,372.7" fill="#ffd800" stroke="#ffd800" stroke-width=".7"/>
<polygon points="320.8,372.7 320.8,371.0 320.9,369.4 321.3,367.7 321.8,366.0 322.4,364.3 323.1,362.6 323.9,360.9 324.7,359.2 325.6,357.5 326.4,355.8 327.3,354.0 330.5,347.5 333.9,341.1 337.5,335.0 341.5,329.2 345.9,323.8 350.5,318.7 355.3,313.8 360.2,309.0 365.1,304.4 370.2,300.1 375.5,295.9 381.0,291.9 386.7,288.2 392.7,284.6 398.8,281.2 405.0,277.9 411.4,274.8 417.8,271.8 424.2,268.8 430.8,266.0 437.5,263.3 444.4,260.7 451.4,258.3 458.6,256.0 466.1,253.8 473.8,251.7 481.9,249.8 490.2,248.1 498.9,246.4 507.9,245.0 517.2,243.6 526.8,242.4 536.7,241.3 546.9,240.3 557.4,239.4 568.2,238.6 579.3,237.9 579.6,237.0 568.5,237.7 557.8,238.5 547.2,239.4 537.0,240.3 527.1,241.4 517.5,242.7 508.1,244.0 499.2,245.5 490.5,247.1 482.1,248.9 474.1,250.8 466.4,252.8 458.9,255.0 451.7,257.3 444.6,259.8 437.8,262.4 431.1,265.0 424.5,267.8 418.0,270.8 411.6,273.8 405.3,276.9 399.0,280.2 392.9,283.6 386.9,287.2 381.2,290.9 375.7,294.9 370.4,299.0 365.4,303.4 360.4,308.0 355.5,312.7 350.7,317.6 346.1,322.8 341.7,328.2 337.7,333.9 334.1,340.0 330.7,346.4 327.5,352.9 326.6,354.6 325.8,356.4 324.9,358.1 324.1,359.8 323.3,361.5 322.6,363.2 322.0,364.9 321.5,366.5 321.2,368.2 321.0,369.8 321.1,371.4" fill="#ffc400" stroke="#ffc400" stroke-width=".7"/>
<polygon points="321.1,371.4 321.0,369.8 321.2,368.2 321.5,366.5 322.0,364.9 322.6,363.2 323.3,361.5 324.1,359.8 324.9,358.1 325.8,356.4 326.6,354.6 327.5,352.9 330.7,346.4 334.1,340.0 337.7,333.9 341.7,328.2 346.1,322.8 350.7,317.6 355.5,312.7 360.4,308.0 365.4,303.4 370.4,299.0 375.7,294.9 381.2,290.9 386.9,287.2 392.9,283.6 399.0,280.2 405.3,276.9 411.6,273.8 418.0,270.8 424.5,267.8 431.1,265.0 437.8,262.4 444.6,259.8 451.7,257.3 458.9,255.0 466.4,252.8 474.1,250.8 482.1,248.9 490.5,247.1 499.2,245.5 508.1,244.0 517.5,242.7 527.1,241.4 537.0,240.3 547.2,239.4 557.8,238.5 568.5,237.7 579.6,237.0 579.9,236.1 568.9,236.8 558.1,237.5 547.6,238.4 537.3,239.4 527.4,240.5 517.8,241.7 508.4,243.1 499.5,244.6 490.8,246.2 482.4,247.9 474.4,249.8 466.7,251.9 459.2,254.1 451.9,256.4 444.9,258.8 438.0,261.4 431.3,264.1 424.7,266.9 418.2,269.8 411.8,272.8 405.5,275.9 399.2,279.2 393.1,282.6 387.2,286.1 381.4,289.9 375.9,293.9 370.7,298.0 365.6,302.4 360.6,306.9 355.7,311.6 350.9,316.6 346.3,321.7 341.9,327.1 337.9,332.8 334.3,338.9 330.9,345.3 327.7,351.8 326.8,353.5 326.0,355.2 325.1,356.9 324.3,358.6 323.6,360.3 322.9,362.0 322.3,363.7 321.8,365.3 321.4,367.0 321.3,368.6 321.4,370.2" fill="#ffb000" stroke="#ffb000" stroke-width=".7"/>
<polygon points="321.4,370.2 321.3,368.6 321.4,367.0 321.8,365.3 322.3,363.7 322.9,362.0 323.6,360.3 324.3,358.6 325.1,356.9 326.0,355.2 326.8,353.5 327.7,351.8 330.9,345.3 334.3,338.9 337.9,332.8 341.9,327.1 346.3,321.7 350.9,316.6 355.7,311.6 360.6,306.9 365.6,302.4 370.7,298.0 375.9,293.9 381.4,289.9 387.2,286.1 393.1,282.6 399.2,279.2 405.5,275.9 411.8,272.8 418.2,269.8 424.7,266.9 431.3,264.1 438.0,261.4 444.9,258.8 451.9,256.4 459.2,254.1 466.7,251.9 474.4,249.8 482.4,247.9 490.8,246.2 499.5,244.6 508.4,243.1 517.8,241.7 527.4,240.5 537.3,239.4 547.6,238.4 558.1,237.5 568.9,236.8 579.9,236.1 580.3,235.2 569.2,235.8 558.4,236.6 547.9,237.5 537.6,238.5 527.7,239.6 518.1,240.8 508.8,242.2 499.8,243.6 491.1,245.2 482.7,247.0 474.7,248.9 466.9,250.9 459.5,253.1 452.2,255.4 445.2,257.9 438.3,260.4 431.6,263.1 425.0,265.9 418.5,268.8 412.1,271.8 405.7,274.9 399.5,278.2 393.4,281.6 387.4,285.1 381.7,288.9 376.2,292.8 370.9,297.0 365.8,301.3 360.8,305.9 356.0,310.6 351.2,315.5 346.5,320.6 342.1,326.0 338.1,331.7 334.5,337.8 331.2,344.2 327.9,350.7 327.0,352.4 326.2,354.1 325.4,355.8 324.6,357.5 323.8,359.2 323.1,360.8 322.5,362.5 322.0,364.2 321.7,365.8 321.6,367.4 321.8,369.0" fill="#ff9c00" stroke="#ff9c00" stroke-width=".7"/>
<polygon points="321.8,369.0 321.6,367.4 321.7,365.8 322.0,364.2 322.5,362.5 323.1,360.8 323.8,359.2 324.6,357.5 325.4,355.8 326.2,354.1 327.0,352.4 327.9,350.7 331.2,344.2 334.5,337.8 338.1,331.7 342.1,326.0 346.5,320.6 351.2,315.5 356.0,310.6 360.8,305.9 365.8,301.3 370.9,297.0 376.2,292.8 381.7,288.9 387.4,285.1 393.4,281.6 399.5,278.2 405.7,274.9 412.1,271.8 418.5,268.8 425.0,265.9 431.6,263.1 438.3,260.4 445.2,257.9 452.2,255.4 459.5,253.1 466.9,250.9 474.7,248.9 482.7,247.0 491.1,245.2 499.8,243.6 508.8,242.2 518.1,240.8 527.7,239.6 537.6,238.5 547.9,237.5 558.4,236.6 569.2,235.8 580.3,235.2 580.7,234.2 569.6,234.9 558.8,235.7 548.2,236.6 538.0,237.6 528.0,238.7 518.4,239.9 509.1,241.2 500.1,242.7 491.4,244.3 483.0,246.1 475.0,248.0 467.2,250.0 459.8,252.2 452.5,254.5 445.5,256.9 438.6,259.5 431.9,262.1 425.3,264.9 418.8,267.8 412.4,270.8 406.0,274.0 399.8,277.2 393.6,280.6 387.7,284.1 381.9,287.9 376.4,291.8 371.2,296.0 366.1,300.3 361.1,304.8 356.2,309.5 351.4,314.4 346.8,319.6 342.4,324.9 338.3,330.7 334.7,336.7 331.4,343.1 328.2,349.6 327.3,351.3 326.4,353.0 325.6,354.7 324.8,356.3 324.1,358.0 323.4,359.7 322.8,361.4 322.3,363.0 322.0,364.6 321.9,366.2 322.1,367.8" fill="#ff8700" stroke="#ff8700" stroke-width=".7"/>
<polygon points="322.1,367.8 321.9,366.2 322.0,364.6 322.3,363.0 322.8,361.4 323.4,359.7 324.1,358.0 324.8,356.3 325.6,354.7 326.4,353.0 327.3,351.3 328.2,349.6 331.4,343.1 334.7,336.7 338.3,330.7 342.4,324.9 346.8,319.6 351.4,314.4 356.2,309.5 361.1,304.8 366.1,300.3 371.2,296.0 376.4,291.8 381.9,287.9 387.7,284.1 393.6,280.6 399.8,277.2 406.0,274.0 412.4,270.8 418.8,267.8 425.3,264.9 431.9,262.1 438.6,259.5 445.5,256.9 452.5,254.5 459.8,252.2 467.2,250.0 475.0,248.0 483.0,246.1 491.4,244.3 500.1,242.7 509.1,241.2 518.4,239.9 528.0,238.7 538.0,237.6 548.2,236.6 558.8,235.7 569.6,234.9 580.7,234.2 581.1,233.3 570.0,234.0 559.2,234.8 548.6,235.7 538.4,236.7 528.4,237.8 518.8,239.0 509.4,240.3 500.4,241.8 491.7,243.4 483.4,245.1 475.3,247.0 467.6,249.0 460.1,251.2 452.8,253.5 445.8,255.9 438.9,258.5 432.2,261.2 425.6,264.0 419.1,266.9 412.7,269.9 406.3,273.0 400.0,276.2 393.9,279.6 387.9,283.1 382.2,286.9 376.7,290.8 371.4,294.9 366.3,299.3 361.4,303.8 356.5,308.5 351.7,313.4 347.0,318.5 342.6,323.9 338.6,329.6 335.0,335.7 331.7,342.0 328.4,348.5 327.6,350.2 326.7,351.8 325.9,353.5 325.1,355.2 324.3,356.9 323.7,358.6 323.1,360.2 322.6,361.8 322.4,363.5 322.3,365.1 322.5,366.6" fill="#ff7300" stroke="#ff7300" stroke-width=".7"/>
<polygon points="322.5,366.6 322.3,365.1 322.4,363.5 322.6,361.8 323.1,360.2 323.7,358.6 324.3,356.9 325.1,355.2 325.9,353.5 326.7,351.8 327.6,350.2 328.4,348.5 331.7,342.0 335.0,335.7 338.6,329.6 342.6,323.9 347.0,318.5 351.7,313.4 356.5,308.5 361.4,303.8 366.3,299.3 371.4,294.9 376.7,290.8 382.2,286.9 387.9,283.1 393.9,279.6 400.0,276.2 406.3,273.0 412.7,269.9 419.1,266.9 425.6,264.0 432.2,261.2 438.9,258.5 445.8,255.9 452.8,253.5 460.1,251.2 467.6,249.0 475.3,247.0 483.4,245.1 491.7,243.4 500.4,241.8 509.4,240.3 518.8,239.0 528.4,237.8 538.4,236.7 548.6,235.7 559.2,234.8 570.0,234.0 581.1,233.3 581.5,232.4 570.4,233.1 559.6,233.9 549.0,234.8 538.8,235.7 528.8,236.8 519.1,238.1 509.8,239.4 500.8,240.9 492.1,242.5 483.7,244.2 475.7,246.1 467.9,248.1 460.4,250.3 453.2,252.6 446.1,255.0 439.2,257.5 432.5,260.2 425.9,263.0 419.4,265.9 413.0,268.9 406.6,272.0 400.3,275.2 394.2,278.6 388.3,282.1 382.5,285.9 377.0,289.8 371.7,293.9 366.6,298.3 361.7,302.8 356.8,307.5 352.0,312.4 347.3,317.5 342.9,322.8 338.9,328.5 335.3,334.6 332.0,340.9 328.7,347.4 327.9,349.1 327.0,350.7 326.2,352.4 325.4,354.1 324.6,355.8 324.0,357.4 323.4,359.1 323.0,360.7 322.7,362.3 322.7,363.9 323.0,365.5" fill="#ff5e00" stroke="#ff5e00" stroke-width=".7"/>
<polygon points="323.0,365.5 322.7,363.9 322.7,362.3 323.0,360.7 323.4,359.1 324.0,357.4 324.6,355.8 325.4,354.1 326.2,352.4 327.0,350.7 327.9,349.1 328.7,347.4 332.0,340.9 335.3,334.6 338.9,328.5 342.9,322.8 347.3,317.5 352.0,312.4 356.8,307.5 361.7,302.8 366.6,298.3 371.7,293.9 377.0,289.8 382.5,285.9 388.3,282.1 394.2,278.6 400.3,275.2 406.6,272.0 413.0,268.9 419.4,265.9 425.9,263.0 432.5,260.2 439.2,257.5 446.1,255.0 453.2,252.6 460.4,250.3 467.9,248.1 475.7,246.1 483.7,244.2 492.1,242.5 500.8,240.9 509.8,239.4 519.1,238.1 528.8,236.8 538.8,235.7 549.0,234.8 559.6,233.9 570.4,233.1 581.5,232.4 582.0,231.5 570.9,232.2 560.0,233.0 549.5,233.9 539.2,234.8 529.2,235.9 519.6,237.1 510.2,238.5 501.2,239.9 492.5,241.5 484.1,243.3 476.1,245.2 468.3,247.2 460.8,249.4 453.5,251.6 446.5,254.1 439.6,256.6 432.9,259.3 426.3,262.0 419.8,264.9 413.3,267.9 407.0,271.0 400.7,274.3 394.6,277.6 388.6,281.2 382.9,284.9 377.4,288.8 372.1,292.9 367.0,297.3 362.0,301.8 357.1,306.5 352.3,311.3 347.7,316.4 343.3,321.8 339.2,327.5 335.6,333.5 332.3,339.9 329.1,346.3 328.2,348.0 327.4,349.7 326.5,351.3 325.7,353.0 325.0,354.7 324.3,356.3 323.8,358.0 323.4,359.6 323.1,361.2 323.2,362.8 323.5,364.3" fill="#ff4900" stroke="#ff4900" stroke-width=".7"/>
<polygon points="323.5,364.3 323.2,362.8 323.1,361.2 323.4,359.6 323.8,358.0 324.3,356.3 325.0,354.7 325.7,353.0 326.5,351.3 327.4,349.7 328.2,348.0 329.1,346.3 332.3,339.9 335.6,333.5 339.2,327.5 343.3,321.8 347.7,316.4 352.3,311.3 357.1,306.5 362.0,301.8 367.0,297.3 372.1,292.9 377.4,288.8 382.9,284.9 388.6,281.2 394.6,277.6 400.7,274.3 407.0,271.0 413.3,267.9 419.8,264.9 426.3,262.0 432.9,259.3 439.6,256.6 446.5,254.1 453.5,251.6 460.8,249.4 468.3,247.2 476.1,245.2 484.1,243.3 492.5,241.5 501.2,239.9 510.2,238.5 519.6,237.1 529.2,235.9 539.2,234.8 549.5,233.9 560.0,233.0 570.9,232.2 582.0,231.5 582.5,230.7 571.4,231.3 560.5,232.1 550.0,233.0 539.7,234.0 529.7,235.1 520.0,236.3 510.7,237.6 501.7,239.1 493.0,240.7 484.6,242.4 476.5,244.3 468.7,246.3 461.2,248.4 454.0,250.7 446.9,253.1 440.0,255.7 433.3,258.3 426.7,261.1 420.2,264.0 413.8,267.0 407.4,270.1 401.1,273.3 395.0,276.7 389.0,280.2 383.3,283.9 377.8,287.8 372.5,292.0 367.4,296.3 362.4,300.8 357.5,305.5 352.7,310.3 348.1,315.4 343.7,320.8 339.6,326.5 336.0,332.5 332.7,338.8 329.5,345.2 328.6,346.9 327.8,348.6 327.0,350.3 326.2,351.9 325.4,353.6 324.8,355.2 324.3,356.9 323.9,358.5 323.7,360.1 323.7,361.7 324.1,363.2" fill="#ff3500" stroke="#ff3500" stroke-width=".7"/>
<polygon points="324.1,363.2 323.7,361.7 323.7,360.1 323.9,358.5 324.3,356.9 324.8,355.2 325.4,353.6 326.2,351.9 327.0,350.3 327.8,348.6 328.6,346.9 329.5,345.2 332.7,338.8 336.0,332.5 339.6,326.5 343.7,320.8 348.1,315.4 352.7,310.3 357.5,305.5 362.4,300.8 367.4,296.3 372.5,292.0 377.8,287.8 383.3,283.9 389.0,280.2 395.0,276.7 401.1,273.3 407.4,270.1 413.8,267.0 420.2,264.0 426.7,261.1 433.3,258.3 440.0,255.7 446.9,253.1 454.0,250.7 461.2,248.4 468.7,246.3 476.5,244.3 484.6,242.4 493.0,240.7 501.7,239.1 510.7,237.6 520.0,236.3 529.7,235.1 539.7,234.0 550.0,233.0 560.5,232.1 571.4,231.3 582.5,230.7 583.2,229.8 572.0,230.5 561.2,231.3 550.6,232.1 540.3,233.1 530.3,234.2 520.7,235.4 511.3,236.7 502.3,238.2 493.6,239.8 485.2,241.5 477.1,243.4 469.3,245.4 461.8,247.6 454.6,249.9 447.5,252.3 440.6,254.8 433.9,257.5 427.3,260.2 420.8,263.1 414.3,266.1 408.0,269.2 401.7,272.4 395.5,275.8 389.6,279.3 383.8,283.0 378.3,286.9 373.0,291.0 367.9,295.3 362.9,299.8 358.1,304.5 353.3,309.4 348.6,314.5 344.2,319.8 340.2,325.5 336.6,331.5 333.3,337.8 330.0,344.2 329.2,345.9 328.3,347.6 327.5,349.3 326.8,350.9 326.0,352.6 325.4,354.2 324.9,355.9 324.5,357.5 324.4,359.1 324.5,360.6 324.9,362.2" fill="#ff2400" stroke="#ff2400" stroke-width=".7"/>
<polygon points="324.9,362.2 324.5,360.6 324.4,359.1 324.5,357.5 324.9,355.9 325.4,354.2 326.0,352.6 326.8,350.9 327.5,349.3 328.3,347.6 329.2,345.9 330.0,344.2 333.3,337.8 336.6,331.5 340.2,325.5 344.2,319.8 348.6,314.5 353.3,309.4 358.1,304.5 362.9,299.8 367.9,295.3 373.0,291.0 378.3,286.9 383.8,283.0 389.6,279.3 395.5,275.8 401.7,272.4 408.0,269.2 414.3,266.1 420.8,263.1 427.3,260.2 433.9,257.5 440.6,254.8 447.5,252.3 454.6,249.9 461.8,247.6 469.3,245.4 477.1,243.4 485.2,241.5 493.6,239.8 502.3,238.2 511.3,236.7 520.7,235.4 530.3,234.2 540.3,233.1 550.6,232.1 561.2,231.3 572.0,230.5 583.2,229.8 584.7,229.2 573.5,229.9 562.7,230.7 552.1,231.5 541.8,232.5 531.8,233.6 522.1,234.8 512.7,236.1 503.7,237.6 495.0,239.2 486.6,240.9 478.5,242.8 470.7,244.8 463.2,247.0 455.9,249.2 448.9,251.6 442.0,254.2 435.2,256.8 428.6,259.6 422.1,262.5 415.7,265.5 409.3,268.6 403.0,271.8 396.9,275.2 390.9,278.7 385.2,282.4 379.7,286.3 374.4,290.4 369.3,294.7 364.3,299.2 359.5,303.9 354.7,308.8 350.0,313.9 345.6,319.2 341.6,324.9 338.0,331.0 334.7,337.3 331.5,343.7 330.7,345.3 329.8,347.0 329.0,348.7 328.3,350.4 327.6,352.0 327.0,353.7 326.5,355.3 326.2,356.9 326.1,358.5 326.4,360.2 327.0,361.8" fill="#ff1300" stroke="#ff1300" stroke-width=".7"/>
<polygon points="327.0,361.8 326.4,360.2 326.1,358.5 326.2,356.9 326.5,355.3 327.0,353.7 327.6,352.0 328.3,350.4 329.0,348.7 329.8,347.0 330.7,345.3 331.5,343.7 334.7,337.3 338.0,331.0 341.6,324.9 345.6,319.2 350.0,313.9 354.7,308.8 359.5,303.9 364.3,299.2 369.3,294.7 374.4,290.4 379.7,286.3 385.2,282.4 390.9,278.7 396.9,275.2 403.0,271.8 409.3,268.6 415.7,265.5 422.1,262.5 428.6,259.6 435.2,256.8 442.0,254.2 448.9,251.6 455.9,249.2 463.2,247.0 470.7,244.8 478.5,242.8 486.6,240.9 495.0,239.2 503.7,237.6 512.7,236.1 522.1,234.8 531.8,233.6 541.8,232.5 552.1,231.5 562.7,230.7 573.5,229.9 584.7,229.2 586.0,230.6 574.9,231.3 564.0,232.1 553.4,232.9 543.1,233.9 533.1,235.0 523.4,236.2 514.1,237.6 505.0,239.0 496.3,240.6 487.9,242.4 479.9,244.2 472.1,246.3 464.6,248.4 457.3,250.7 450.2,253.2 443.4,255.7 436.6,258.4 430.0,261.2 423.5,264.1 417.1,267.1 410.7,270.2 404.5,273.4 398.3,276.8 392.4,280.3 386.6,284.0 381.2,288.0 375.9,292.1 370.8,296.4 365.8,301.0 361.0,305.7 356.2,310.6 351.6,315.7 347.2,321.1 343.2,326.8 339.6,332.8 336.4,339.2 333.2,345.6 332.4,347.3 331.5,349.0 330.8,350.7 330.0,352.4 329.4,354.1 328.8,355.8 328.4,357.5 328.1,359.1 328.2,360.8 328.5,362.5 329.3,364.2" fill="#ff1300" stroke="#ff1300" stroke-width=".7"/>
<polygon points="329.3,364.2 328.5,362.5 328.2,360.8 328.1,359.1 328.4,357.5 328.8,355.8 329.4,354.1 330.0,352.4 330.8,350.7 331.5,349.0 332.4,347.3 333.2,345.6 336.4,339.2 339.6,332.8 343.2,326.8 347.2,321.1 351.6,315.7 356.2,310.6 361.0,305.7 365.8,301.0 370.8,296.4 375.9,292.1 381.2,288.0 386.6,284.0 392.4,280.3 398.3,276.8 404.5,273.4 410.7,270.2 417.1,267.1 423.5,264.1 430.0,261.2 436.6,258.4 443.4,255.7 450.2,253.2 457.3,250.7 464.6,248.4 472.1,246.3 479.9,244.2 487.9,242.4 496.3,240.6 505.0,239.0 514.1,237.6 523.4,236.2 533.1,235.0 543.1,233.9 553.4,232.9 564.0,232.1 574.9,231.3 586.0,230.6 586.6,231.8 575.4,232.5 564.6,233.2 554.0,234.1 543.7,235.1 533.7,236.2 524.0,237.4 514.6,238.8 505.6,240.2 496.9,241.8 488.5,243.6 480.4,245.5 472.7,247.5 465.2,249.7 457.9,252.0 450.8,254.4 443.9,257.0 437.2,259.6 430.6,262.4 424.1,265.3 417.7,268.4 411.4,271.5 405.1,274.7 399.0,278.1 393.0,281.7 387.3,285.4 381.8,289.3 376.5,293.5 371.5,297.8 366.5,302.4 361.7,307.1 356.9,312.0 352.3,317.1 347.9,322.5 343.9,328.3 340.4,334.4 337.1,340.7 333.9,347.2 333.1,348.9 332.3,350.6 331.5,352.3 330.8,354.0 330.2,355.7 329.6,357.4 329.2,359.1 329.0,360.8 329.1,362.6 329.5,364.3 330.4,366.1" fill="#ff2400" stroke="#ff2400" stroke-width=".7"/>
<polygon points="330.4,366.1 329.5,364.3 329.1,362.6 329.0,360.8 329.2,359.1 329.6,357.4 330.2,355.7 330.8,354.0 331.5,352.3 332.3,350.6 333.1,348.9 333.9,347.2 337.1,340.7 340.4,334.4 343.9,328.3 347.9,322.5 352.3,317.1 356.9,312.0 361.7,307.1 366.5,302.4 371.5,297.8 376.5,293.5 381.8,289.3 387.3,285.4 393.0,281.7 399.0,278.1 405.1,274.7 411.4,271.5 417.7,268.4 424.1,265.3 430.6,262.4 437.2,259.6 443.9,257.0 450.8,254.4 457.9,252.0 465.2,249.7 472.7,247.5 480.4,245.5 488.5,243.6 496.9,241.8 505.6,240.2 514.6,238.8 524.0,237.4 533.7,236.2 543.7,235.1 554.0,234.1 564.6,233.2 575.4,232.5 586.6,231.8 587.0,232.9 575.8,233.6 565.0,234.4 554.4,235.3 544.1,236.2 534.1,237.3 524.4,238.6 515.1,239.9 506.0,241.4 497.3,243.0 488.9,244.8 480.9,246.7 473.1,248.7 465.6,250.9 458.3,253.2 451.3,255.6 444.4,258.2 437.7,260.9 431.1,263.7 424.6,266.6 418.2,269.6 411.8,272.7 405.6,276.0 399.5,279.4 393.5,283.0 387.8,286.7 382.3,290.7 377.1,294.8 372.0,299.2 367.1,303.7 362.2,308.5 357.4,313.4 352.8,318.5 348.5,324.0 344.5,329.7 341.0,335.8 337.7,342.2 334.6,348.7 333.7,350.4 332.9,352.2 332.2,353.9 331.5,355.6 330.8,357.3 330.3,359.0 329.9,360.8 329.7,362.5 329.8,364.3 330.3,366.1 331.2,367.9" fill="#ff3500" stroke="#ff3500" stroke-width=".7"/>
<polygon points="331.2,367.9 330.3,366.1 329.8,364.3 329.7,362.5 329.9,360.8 330.3,359.0 330.8,357.3 331.5,355.6 332.2,353.9 332.9,352.2 333.7,350.4 334.6,348.7 337.7,342.2 341.0,335.8 344.5,329.7 348.5,324.0 352.8,318.5 357.4,313.4 362.2,308.5 367.1,303.7 372.0,299.2 377.1,294.8 382.3,290.7 387.8,286.7 393.5,283.0 399.5,279.4 405.6,276.0 411.8,272.7 418.2,269.6 424.6,266.6 431.1,263.7 437.7,260.9 444.4,258.2 451.3,255.6 458.3,253.2 465.6,250.9 473.1,248.7 480.9,246.7 488.9,244.8 497.3,243.0 506.0,241.4 515.1,239.9 524.4,238.6 534.1,237.3 544.1,236.2 554.4,235.3 565.0,234.4 575.8,233.6 587.0,232.9 587.3,234.0 576.2,234.7 565.3,235.5 554.7,236.4 544.4,237.4 534.4,238.5 524.8,239.7 515.4,241.1 506.4,242.5 497.7,244.2 489.3,245.9 481.2,247.8 473.5,249.9 466.0,252.0 458.7,254.4 451.7,256.8 444.8,259.4 438.1,262.1 431.5,264.9 425.0,267.8 418.6,270.8 412.3,274.0 406.0,277.2 399.9,280.7 394.0,284.2 388.2,288.0 382.8,292.0 377.5,296.1 372.5,300.5 367.5,305.1 362.7,309.8 357.9,314.8 353.3,319.9 349.0,325.4 345.0,331.1 341.5,337.3 338.2,343.7 335.1,350.2 334.3,351.9 333.5,353.7 332.7,355.4 332.0,357.1 331.4,358.8 330.9,360.6 330.5,362.3 330.3,364.1 330.5,365.9 331.0,367.7 332.0,369.6" fill="#ff4900" stroke="#ff4900" stroke-width=".7"/>
<polygon points="332.0,369.6 331.0,367.7 330.5,365.9 330.3,364.1 330.5,362.3 330.9,360.6 331.4,358.8 332.0,357.1 332.7,355.4 333.5,353.7 334.3,351.9 335.1,350.2 338.2,343.7 341.5,337.3 345.0,331.1 349.0,325.4 353.3,319.9 357.9,314.8 362.7,309.8 367.5,305.1 372.5,300.5 377.5,296.1 382.8,292.0 388.2,288.0 394.0,284.2 399.9,280.7 406.0,277.2 412.3,274.0 418.6,270.8 425.0,267.8 431.5,264.9 438.1,262.1 444.8,259.4 451.7,256.8 458.7,254.4 466.0,252.0 473.5,249.9 481.2,247.8 489.3,245.9 497.7,244.2 506.4,242.5 515.4,241.1 524.8,239.7 534.4,238.5 544.4,237.4 554.7,236.4 565.3,235.5 576.2,234.7 587.3,234.0 587.6,235.1 576.5,235.8 565.6,236.6 555.0,237.5 544.7,238.5 534.8,239.6 525.1,240.8 515.7,242.2 506.7,243.7 498.0,245.3 489.6,247.1 481.6,249.0 473.8,251.0 466.3,253.2 459.1,255.5 452.0,258.0 445.2,260.6 438.5,263.3 431.9,266.1 425.4,269.0 419.0,272.1 412.7,275.2 406.4,278.5 400.3,281.9 394.4,285.5 388.7,289.3 383.2,293.2 377.9,297.4 372.9,301.8 368.0,306.4 363.1,311.2 358.4,316.1 353.8,321.3 349.4,326.7 345.5,332.5 342.0,338.7 338.7,345.1 335.6,351.7 334.8,353.4 334.0,355.1 333.2,356.9 332.5,358.6 331.9,360.4 331.4,362.1 331.1,363.9 330.9,365.7 331.1,367.5 331.6,369.4 332.6,371.3" fill="#ff5e00" stroke="#ff5e00" stroke-width=".7"/>
<polygon points="332.6,371.3 331.6,369.4 331.1,367.5 330.9,365.7 331.1,363.9 331.4,362.1 331.9,360.4 332.5,358.6 333.2,356.9 334.0,355.1 334.8,353.4 335.6,351.7 338.7,345.1 342.0,338.7 345.5,332.5 349.4,326.7 353.8,321.3 358.4,316.1 363.1,311.2 368.0,306.4 372.9,301.8 377.9,297.4 383.2,293.2 388.7,289.3 394.4,285.5 400.3,281.9 406.4,278.5 412.7,275.2 419.0,272.1 425.4,269.0 431.9,266.1 438.5,263.3 445.2,260.6 452.0,258.0 459.1,255.5 466.3,253.2 473.8,251.0 481.6,249.0 489.6,247.1 498.0,245.3 506.7,243.7 515.7,242.2 525.1,240.8 534.8,239.6 544.7,238.5 555.0,237.5 565.6,236.6 576.5,235.8 587.6,235.1 587.9,236.2 576.7,236.9 565.9,237.7 555.3,238.6 545.0,239.6 535.0,240.7 525.4,241.9 516.0,243.3 507.0,244.8 498.3,246.4 489.9,248.2 481.9,250.1 474.1,252.2 466.6,254.4 459.4,256.7 452.4,259.2 445.5,261.7 438.8,264.4 432.2,267.3 425.7,270.2 419.3,273.3 413.0,276.4 406.8,279.7 400.7,283.1 394.7,286.7 389.0,290.5 383.6,294.5 378.3,298.7 373.3,303.1 368.4,307.7 363.5,312.5 358.8,317.4 354.2,322.6 349.9,328.1 345.9,333.9 342.4,340.1 339.2,346.5 336.0,353.1 335.2,354.8 334.5,356.6 333.7,358.3 333.0,360.1 332.4,361.8 331.9,363.6 331.6,365.4 331.4,367.2 331.6,369.1 332.2,371.0 333.2,373.0" fill="#ff7300" stroke="#ff7300" stroke-width=".7"/>
<polygon points="333.2,373.0 332.2,371.0 331.6,369.1 331.4,367.2 331.6,365.4 331.9,363.6 332.4,361.8 333.0,360.1 333.7,358.3 334.5,356.6 335.2,354.8 336.0,353.1 339.2,346.5 342.4,340.1 345.9,333.9 349.9,328.1 354.2,322.6 358.8,317.4 363.5,312.5 368.4,307.7 373.3,303.1 378.3,298.7 383.6,294.5 389.0,290.5 394.7,286.7 400.7,283.1 406.8,279.7 413.0,276.4 419.3,273.3 425.7,270.2 432.2,267.3 438.8,264.4 445.5,261.7 452.4,259.2 459.4,256.7 466.6,254.4 474.1,252.2 481.9,250.1 489.9,248.2 498.3,246.4 507.0,244.8 516.0,243.3 525.4,241.9 535.0,240.7 545.0,239.6 555.3,238.6 565.9,237.7 576.7,236.9 587.9,236.2 588.1,237.3 577.0,238.0 566.1,238.8 555.6,239.7 545.3,240.7 535.3,241.8 525.6,243.0 516.3,244.4 507.3,245.9 498.6,247.5 490.2,249.3 482.2,251.2 474.4,253.3 466.9,255.5 459.7,257.8 452.7,260.3 445.8,262.9 439.1,265.6 432.5,268.5 426.1,271.4 419.7,274.5 413.3,277.6 407.1,280.9 401.0,284.4 395.1,288.0 389.4,291.8 383.9,295.8 378.7,300.0 373.6,304.4 368.7,309.0 363.9,313.8 359.2,318.8 354.6,324.0 350.3,329.4 346.3,335.3 342.8,341.4 339.6,347.9 336.5,354.5 335.7,356.3 334.9,358.0 334.1,359.8 333.5,361.6 332.9,363.3 332.4,365.1 332.0,366.9 331.9,368.8 332.1,370.7 332.7,372.6 333.8,374.7" fill="#ff8700" stroke="#ff8700" stroke-width=".7"/>
<polygon points="333.8,374.7 332.7,372.6 332.1,370.7 331.9,368.8 332.0,366.9 332.4,365.1 332.9,363.3 333.5,361.6 334.1,359.8 334.9,358.0 335.7,356.3 336.5,354.5 339.6,347.9 342.8,341.4 346.3,335.3 350.3,329.4 354.6,324.0 359.2,318.8 363.9,313.8 368.7,309.0 373.6,304.4 378.7,300.0 383.9,295.8 389.4,291.8 395.1,288.0 401.0,284.4 407.1,280.9 413.3,277.6 419.7,274.5 426.1,271.4 432.5,268.5 439.1,265.6 445.8,262.9 452.7,260.3 459.7,257.8 466.9,255.5 474.4,253.3 482.2,251.2 490.2,249.3 498.6,247.5 507.3,245.9 516.3,244.4 525.6,243.0 535.3,241.8 545.3,240.7 555.6,239.7 566.1,238.8 577.0,238.0 588.1,237.3 588.3,238.4 577.2,239.1 566.4,239.9 555.8,240.8 545.5,241.8 535.6,242.9 525.9,244.2 516.6,245.5 507.5,247.0 498.9,248.7 490.5,250.4 482.4,252.4 474.7,254.4 467.2,256.6 460.0,259.0 453.0,261.5 446.1,264.1 439.4,266.8 432.8,269.6 426.4,272.6 420.0,275.7 413.7,278.8 407.4,282.1 401.3,285.6 395.4,289.2 389.7,293.0 384.3,297.0 379.0,301.2 374.0,305.7 369.1,310.3 364.3,315.1 359.5,320.1 355.0,325.3 350.6,330.8 346.7,336.6 343.2,342.8 340.0,349.3 336.9,355.9 336.1,357.7 335.3,359.5 334.6,361.2 333.9,363.0 333.3,364.8 332.8,366.6 332.5,368.4 332.4,370.3 332.6,372.2 333.2,374.2 334.4,376.3" fill="#ff9c00" stroke="#ff9c00" stroke-width=".7"/>
<polygon points="334.4,376.3 333.2,374.2 332.6,372.2 332.4,370.3 332.5,368.4 332.8,366.6 333.3,364.8 333.9,363.0 334.6,361.2 335.3,359.5 336.1,357.7 336.9,355.9 340.0,349.3 343.2,342.8 346.7,336.6 350.6,330.8 355.0,325.3 359.5,320.1 364.3,315.1 369.1,310.3 374.0,305.7 379.0,301.2 384.3,297.0 389.7,293.0 395.4,289.2 401.3,285.6 407.4,282.1 413.7,278.8 420.0,275.7 426.4,272.6 432.8,269.6 439.4,266.8 446.1,264.1 453.0,261.5 460.0,259.0 467.2,256.6 474.7,254.4 482.4,252.4 490.5,250.4 498.9,248.7 507.5,247.0 516.6,245.5 525.9,244.2 535.6,242.9 545.5,241.8 555.8,240.8 566.4,239.9 577.2,239.1 588.3,238.4 588.5,239.5 577.4,240.2 566.6,241.0 556.0,241.9 545.8,242.9 535.8,244.0 526.1,245.3 516.8,246.6 507.8,248.1 499.1,249.8 490.7,251.6 482.7,253.5 475.0,255.6 467.5,257.8 460.3,260.1 453.2,262.6 446.4,265.2 439.7,268.0 433.1,270.8 426.7,273.8 420.3,276.8 414.0,280.0 407.7,283.3 401.6,286.8 395.7,290.4 390.0,294.2 384.6,298.3 379.4,302.5 374.3,306.9 369.4,311.6 364.6,316.4 359.9,321.4 355.3,326.6 351.0,332.1 347.1,338.0 343.6,344.2 340.4,350.7 337.3,357.4 336.5,359.1 335.7,360.9 335.0,362.7 334.3,364.5 333.7,366.3 333.3,368.1 333.0,369.9 332.9,371.8 333.1,373.8 333.8,375.8 335.0,378.0" fill="#ffb000" stroke="#ffb000" stroke-width=".7"/>
<polygon points="335.0,378.0 333.8,375.8 333.1,373.8 332.9,371.8 333.0,369.9 333.3,368.1 333.7,366.3 334.3,364.5 335.0,362.7 335.7,360.9 336.5,359.1 337.3,357.4 340.4,350.7 343.6,344.2 347.1,338.0 351.0,332.1 355.3,326.6 359.9,321.4 364.6,316.4 369.4,311.6 374.3,306.9 379.4,302.5 384.6,298.3 390.0,294.2 395.7,290.4 401.6,286.8 407.7,283.3 414.0,280.0 420.3,276.8 426.7,273.8 433.1,270.8 439.7,268.0 446.4,265.2 453.2,262.6 460.3,260.1 467.5,257.8 475.0,255.6 482.7,253.5 490.7,251.6 499.1,249.8 507.8,248.1 516.8,246.6 526.1,245.3 535.8,244.0 545.8,242.9 556.0,241.9 566.6,241.0 577.4,240.2 588.5,239.5 588.8,240.6 577.6,241.3 566.8,242.1 556.2,243.0 546.0,244.0 536.0,245.1 526.4,246.3 517.0,247.7 508.0,249.2 499.3,250.9 491.0,252.7 483.0,254.6 475.2,256.7 467.8,258.9 460.5,261.3 453.5,263.8 446.7,266.4 440.0,269.1 433.4,272.0 427.0,274.9 420.6,278.0 414.3,281.2 408.0,284.5 402.0,288.0 396.0,291.6 390.4,295.5 384.9,299.5 379.7,303.7 374.7,308.2 369.8,312.8 365.0,317.7 360.3,322.7 355.7,327.9 351.4,333.4 347.4,339.3 344.0,345.5 340.8,352.1 337.7,358.8 336.9,360.5 336.1,362.3 335.4,364.1 334.7,365.9 334.1,367.7 333.7,369.6 333.4,371.4 333.3,373.3 333.6,375.3 334.2,377.4 335.5,379.6" fill="#ffc400" stroke="#ffc400" stroke-width=".7"/>
<polygon points="335.5,379.6 334.2,377.4 333.6,375.3 333.3,373.3 333.4,371.4 333.7,369.6 334.1,367.7 334.7,365.9 335.4,364.1 336.1,362.3 336.9,360.5 337.7,358.8 340.8,352.1 344.0,345.5 347.4,339.3 351.4,333.4 355.7,327.9 360.3,322.7 365.0,317.7 369.8,312.8 374.7,308.2 379.7,303.7 384.9,299.5 390.4,295.5 396.0,291.6 402.0,288.0 408.0,284.5 414.3,281.2 420.6,278.0 427.0,274.9 433.4,272.0 440.0,269.1 446.7,266.4 453.5,263.8 460.5,261.3 467.8,258.9 475.2,256.7 483.0,254.6 491.0,252.7 499.3,250.9 508.0,249.2 517.0,247.7 526.4,246.3 536.0,245.1 546.0,244.0 556.2,243.0 566.8,242.1 577.6,241.3 588.8,240.6 588.9,241.6 577.8,242.3 567.0,243.1 556.5,244.0 546.2,245.1 536.2,246.2 526.6,247.4 517.3,248.8 508.3,250.3 499.6,252.0 491.2,253.8 483.2,255.7 475.5,257.8 468.0,260.0 460.8,262.4 453.8,264.9 446.9,267.5 440.2,270.3 433.7,273.1 427.2,276.1 420.9,279.2 414.5,282.4 408.3,285.7 402.2,289.2 396.3,292.9 390.7,296.7 385.2,300.7 380.0,305.0 375.0,309.4 370.1,314.1 365.3,318.9 360.6,324.0 356.0,329.2 351.7,334.8 347.8,340.6 344.3,346.9 341.1,353.4 338.1,360.2 337.3,361.9 336.5,363.7 335.8,365.5 335.1,367.3 334.5,369.2 334.1,371.0 333.8,372.9 333.8,374.9 334.0,376.9 334.7,379.0 336.0,381.2" fill="#ffd800" stroke="#ffd800" stroke-width=".7"/>
<polygon points="336.0,381.2 334.7,379.0 334.0,376.9 333.8,374.9 333.8,372.9 334.1,371.0 334.5,369.2 335.1,367.3 335.8,365.5 336.5,363.7 337.3,361.9 338.1,360.2 341.1,353.4 344.3,346.9 347.8,340.6 351.7,334.8 356.0,329.2 360.6,324.0 365.3,318.9 370.1,314.1 375.0,309.4 380.0,305.0 385.2,300.7 390.7,296.7 396.3,292.9 402.2,289.2 408.3,285.7 414.5,282.4 420.9,279.2 427.2,276.1 433.7,273.1 440.2,270.3 446.9,267.5 453.8,264.9 460.8,262.4 468.0,260.0 475.5,257.8 483.2,255.7 491.2,253.8 499.6,252.0 508.3,250.3 517.3,248.8 526.6,247.4 536.2,246.2 546.2,245.1 556.5,244.0 567.0,243.1 577.8,242.3 588.9,241.6 589.1,242.7 578.0,243.4 567.2,244.2 556.7,245.1 546.4,246.1 536.4,247.3 526.8,248.5 517.5,249.9 508.5,251.4 499.8,253.1 491.5,254.9 483.4,256.8 475.7,258.9 468.2,261.2 461.0,263.5 454.0,266.0 447.2,268.7 440.5,271.4 433.9,274.3 427.5,277.3 421.1,280.4 414.8,283.6 408.6,286.9 402.5,290.4 396.6,294.1 391.0,297.9 385.5,302.0 380.3,306.2 375.3,310.7 370.4,315.4 365.6,320.2 360.9,325.3 356.4,330.5 352.1,336.1 348.2,342.0 344.7,348.3 341.5,354.8 338.4,361.6 337.7,363.4 336.9,365.2 336.2,367.0 335.5,368.8 334.9,370.6 334.5,372.5 334.2,374.4 334.2,376.4 334.5,378.4 335.2,380.5 336.5,382.8" fill="#ffec00" stroke="#ffec00" stroke-width=".7"/>
<polygon points="336.5,382.8 335.2,380.5 334.5,378.4 334.2,376.4 334.2,374.4 334.5,372.5 334.9,370.6 335.5,368.8 336.2,367.0 336.9,365.2 337.7,363.4 338.4,361.6 341.5,354.8 344.7,348.3 348.2,342.0 352.1,336.1 356.4,330.5 360.9,325.3 365.6,320.2 370.4,315.4 375.3,310.7 380.3,306.2 385.5,302.0 391.0,297.9 396.6,294.1 402.5,290.4 408.6,286.9 414.8,283.6 421.1,280.4 427.5,277.3 433.9,274.3 440.5,271.4 447.2,268.7 454.0,266.0 461.0,263.5 468.2,261.2 475.7,258.9 483.4,256.8 491.5,254.9 499.8,253.1 508.5,251.4 517.5,249.9 526.8,248.5 536.4,247.3 546.4,246.1 556.7,245.1 567.2,244.2 578.0,243.4 589.1,242.7 589.3,243.8 578.2,244.5 567.4,245.3 556.9,246.2 546.6,247.2 536.6,248.4 527.0,249.6 517.7,251.0 508.7,252.5 500.0,254.2 491.7,256.0 483.7,257.9 475.9,260.0 468.5,262.3 461.3,264.7 454.3,267.2 447.4,269.8 440.8,272.6 434.2,275.4 427.8,278.4 421.4,281.6 415.1,284.8 408.9,288.1 402.8,291.6 396.9,295.3 391.3,299.1 385.8,303.2 380.6,307.5 375.6,312.0 370.7,316.6 366.0,321.5 361.3,326.6 356.7,331.8 352.4,337.4 348.5,343.3 345.0,349.6 341.9,356.2 338.8,363.0 338.0,364.8 337.3,366.6 336.6,368.4 335.9,370.2 335.3,372.1 334.9,373.9 334.6,375.9 334.6,377.9 334.9,379.9 335.7,382.1 337.0,384.4" fill="#ffff00" stroke="#ffff00" stroke-width=".7"/>
<polygon points="337.0,384.4 335.7,382.1 334.9,379.9 334.6,377.9 334.6,375.9 334.9,373.9 335.3,372.1 335.9,370.2 336.6,368.4 337.3,366.6 338.0,364.8 338.8,363.0 341.9,356.2 345.0,349.6 348.5,343.3 352.4,337.4 356.7,331.8 361.3,326.6 366.0,321.5 370.7,316.6 375.6,312.0 380.6,307.5 385.8,303.2 391.3,299.1 396.9,295.3 402.8,291.6 408.9,288.1 415.1,284.8 421.4,281.6 427.8,278.4 434.2,275.4 440.8,272.6 447.4,269.8 454.3,267.2 461.3,264.7 468.5,262.3 475.9,260.0 483.7,257.9 491.7,256.0 500.0,254.2 508.7,252.5 517.7,251.0 527.0,249.6 536.6,248.4 546.6,247.2 556.9,246.2 567.4,245.3 578.2,244.5 589.3,243.8 589.5,244.8 578.4,245.6 567.6,246.4 557.0,247.3 546.8,248.3 536.8,249.4 527.2,250.7 517.9,252.1 508.9,253.6 500.2,255.3 491.9,257.1 483.9,259.0 476.2,261.2 468.7,263.4 461.5,265.8 454.5,268.3 447.7,270.9 441.0,273.7 434.5,276.6 428.0,279.6 421.7,282.7 415.4,286.0 409.2,289.3 403.1,292.8 397.2,296.5 391.5,300.3 386.1,304.4 380.9,308.7 375.9,313.2 371.1,317.9 366.3,322.8 361.6,327.8 357.0,333.1 352.7,338.7 348.8,344.6 345.4,350.9 342.2,357.5 339.2,364.3 338.4,366.1 337.6,368.0 336.9,369.8 336.3,371.6 335.7,373.5 335.3,375.4 335.0,377.3 335.0,379.4 335.4,381.5 336.1,383.7 337.5,386.1" fill="#e6ff00" stroke="#e6ff00" stroke-width=".7"/>
<polygon points="337.5,386.1 336.1,383.7 335.4,381.5 335.0,379.4 335.0,377.3 335.3,375.4 335.7,373.5 336.3,371.6 336.9,369.8 337.6,368.0 338.4,366.1 339.2,364.3 342.2,357.5 345.4,350.9 348.8,344.6 352.7,338.7 357.0,333.1 361.6,327.8 366.3,322.8 371.1,317.9 375.9,313.2 380.9,308.7 386.1,304.4 391.5,300.3 397.2,296.5 403.1,292.8 409.2,289.3 415.4,286.0 421.7,282.7 428.0,279.6 434.5,276.6 441.0,273.7 447.7,270.9 454.5,268.3 461.5,265.8 468.7,263.4 476.2,261.2 483.9,259.0 491.9,257.1 500.2,255.3 508.9,253.6 517.9,252.1 527.2,250.7 536.8,249.4 546.8,248.3 557.0,247.3 567.6,246.4 578.4,245.6 589.5,244.8 589.7,245.9 578.6,246.6 567.8,247.4 557.2,248.3 547.0,249.4 537.0,250.5 527.4,251.8 518.1,253.2 509.1,254.7 500.5,256.4 492.1,258.2 484.1,260.2 476.4,262.3 469.0,264.5 461.7,266.9 454.7,269.4 447.9,272.1 441.3,274.9 434.7,277.8 428.3,280.8 421.9,283.9 415.6,287.1 409.4,290.5 403.4,294.0 397.5,297.7 391.8,301.6 386.4,305.6 381.2,309.9 376.2,314.5 371.4,319.2 366.6,324.0 361.9,329.1 357.4,334.4 353.1,340.0 349.2,346.0 345.7,352.3 342.6,358.9 339.5,365.7 338.8,367.5 338.0,369.4 337.3,371.2 336.7,373.1 336.1,374.9 335.7,376.9 335.4,378.8 335.4,380.8 335.8,383.0 336.6,385.2 338.0,387.7" fill="#ceff00" stroke="#ceff00" stroke-width=".7"/>
<polygon points="338.0,387.7 336.6,385.2 335.8,383.0 335.4,380.8 335.4,378.8 335.7,376.9 336.1,374.9 336.7,373.1 337.3,371.2 338.0,369.4 338.8,367.5 339.5,365.7 342.6,358.9 345.7,352.3 349.2,346.0 353.1,340.0 357.4,334.4 361.9,329.1 366.6,324.0 371.4,319.2 376.2,314.5 381.2,309.9 386.4,305.6 391.8,301.6 397.5,297.7 403.4,294.0 409.4,290.5 415.6,287.1 421.9,283.9 428.3,280.8 434.7,277.8 441.3,274.9 447.9,272.1 454.7,269.4 461.7,266.9 469.0,264.5 476.4,262.3 484.1,260.2 492.1,258.2 500.5,256.4 509.1,254.7 518.1,253.2 527.4,251.8 537.0,250.5 547.0,249.4 557.2,248.3 567.8,247.4 578.6,246.6 589.7,245.9 589.8,247.0 578.8,247.7 568.0,248.5 557.4,249.4 547.2,250.4 537.2,251.6 527.6,252.9 518.3,254.3 509.3,255.8 500.7,257.5 492.3,259.3 484.3,261.3 476.6,263.4 469.2,265.6 462.0,268.0 455.0,270.6 448.2,273.2 441.5,276.0 435.0,278.9 428.5,281.9 422.2,285.1 415.9,288.3 409.7,291.7 403.7,295.2 397.8,298.9 392.1,302.8 386.7,306.9 381.5,311.2 376.5,315.7 371.7,320.4 366.9,325.3 362.2,330.4 357.7,335.7 353.4,341.3 349.5,347.3 346.1,353.6 342.9,360.3 339.9,367.1 339.1,368.9 338.4,370.8 337.7,372.6 337.0,374.5 336.5,376.4 336.1,378.3 335.8,380.3 335.9,382.3 336.2,384.5 337.0,386.8 338.5,389.3" fill="#b5ff00" stroke="#b5ff00" stroke-width=".7"/>
<polygon points="338.5,389.3 337.0,386.8 336.2,384.5 335.9,382.3 335.8,380.3 336.1,378.3 336.5,376.4 337.0,374.5 337.7,372.6 338.4,370.8 339.1,368.9 339.9,367.1 342.9,360.3 346.1,353.6 349.5,347.3 353.4,341.3 357.7,335.7 362.2,330.4 366.9,325.3 371.7,320.4 376.5,315.7 381.5,311.2 386.7,306.9 392.1,302.8 397.8,298.9 403.7,295.2 409.7,291.7 415.9,288.3 422.2,285.1 428.5,281.9 435.0,278.9 441.5,276.0 448.2,273.2 455.0,270.6 462.0,268.0 469.2,265.6 476.6,263.4 484.3,261.3 492.3,259.3 500.7,257.5 509.3,255.8 518.3,254.3 527.6,252.9 537.2,251.6 547.2,250.4 557.4,249.4 568.0,248.5 578.8,247.7 589.8,247.0 590.0,248.0 578.9,248.8 568.1,249.6 557.6,250.5 547.4,251.5 537.4,252.7 527.8,253.9 518.5,255.3 509.5,256.9 500.9,258.6 492.6,260.4 484.6,262.4 476.8,264.5 469.4,266.7 462.2,269.2 455.2,271.7 448.4,274.4 441.7,277.1 435.2,280.1 428.8,283.1 422.4,286.2 416.2,289.5 410.0,292.9 403.9,296.4 398.1,300.1 392.4,304.0 387.0,308.1 381.8,312.4 376.8,316.9 372.0,321.7 367.2,326.6 362.5,331.7 358.0,337.0 353.7,342.6 349.8,348.6 346.4,355.0 343.3,361.6 340.3,368.5 339.5,370.3 338.7,372.2 338.0,374.0 337.4,375.9 336.9,377.8 336.4,379.7 336.2,381.8 336.3,383.8 336.6,386.0 337.5,388.3 338.9,390.8" fill="#9dff00" stroke="#9dff00" stroke-width=".7"/>
<polygon points="338.9,390.8 337.5,388.3 336.6,386.0 336.3,383.8 336.2,381.8 336.4,379.7 336.9,377.8 337.4,375.9 338.0,374.0 338.7,372.2 339.5,370.3 340.3,368.5 343.3,361.6 346.4,355.0 349.8,348.6 353.7,342.6 358.0,337.0 362.5,331.7 367.2,326.6 372.0,321.7 376.8,316.9 381.8,312.4 387.0,308.1 392.4,304.0 398.1,300.1 403.9,296.4 410.0,292.9 416.2,289.5 422.4,286.2 428.8,283.1 435.2,280.1 441.7,277.1 448.4,274.4 455.2,271.7 462.2,269.2 469.4,266.7 476.8,264.5 484.6,262.4 492.6,260.4 500.9,258.6 509.5,256.9 518.5,255.3 527.8,253.9 537.4,252.7 547.4,251.5 557.6,250.5 568.1,249.6 578.9,248.8 590.0,248.0 590.2,249.1 579.1,249.8 568.3,250.6 557.8,251.6 547.6,252.6 537.6,253.7 528.0,255.0 518.7,256.4 509.7,258.0 501.1,259.7 492.8,261.5 484.8,263.5 477.1,265.6 469.6,267.9 462.4,270.3 455.4,272.8 448.6,275.5 442.0,278.3 435.5,281.2 429.0,284.2 422.7,287.4 416.4,290.7 410.2,294.0 404.2,297.6 398.3,301.3 392.7,305.2 387.3,309.3 382.1,313.6 377.1,318.2 372.3,322.9 367.5,327.8 362.8,333.0 358.3,338.3 354.1,343.9 350.2,349.9 346.7,356.3 343.6,363.0 340.6,369.9 339.8,371.7 339.1,373.6 338.4,375.4 337.8,377.3 337.2,379.2 336.8,381.2 336.6,383.2 336.7,385.3 337.1,387.5 337.9,389.9 339.4,392.4" fill="#84ff00" stroke="#84ff00" stroke-width=".7"/>
<polygon points="339.4,392.4 337.9,389.9 337.1,387.5 336.7,385.3 336.6,383.2 336.8,381.2 337.2,379.2 337.8,377.3 338.4,375.4 339.1,373.6 339.8,371.7 340.6,369.9 343.6,363.0 346.7,356.3 350.2,349.9 354.1,343.9 358.3,338.3 362.8,333.0 367.5,327.8 372.3,322.9 377.1,318.2 382.1,313.6 387.3,309.3 392.7,305.2 398.3,301.3 404.2,297.6 410.2,294.0 416.4,290.7 422.7,287.4 429.0,284.2 435.5,281.2 442.0,278.3 448.6,275.5 455.4,272.8 462.4,270.3 469.6,267.9 477.1,265.6 484.8,263.5 492.8,261.5 501.1,259.7 509.7,258.0 518.7,256.4 528.0,255.0 537.6,253.7 547.6,252.6 557.8,251.6 568.3,250.6 579.1,249.8 590.2,249.1 590.4,250.2 579.3,250.9 568.5,251.7 558.0,252.6 547.7,253.7 537.8,254.8 528.2,256.1 518.9,257.5 509.9,259.1 501.3,260.7 493.0,262.6 485.0,264.6 477.3,266.7 469.9,269.0 462.7,271.4 455.7,273.9 448.9,276.6 442.2,279.4 435.7,282.4 429.3,285.4 423.0,288.6 416.7,291.8 410.5,295.2 404.5,298.8 398.6,302.5 393.0,306.4 387.6,310.5 382.4,314.9 377.4,319.4 372.6,324.2 367.8,329.1 363.1,334.2 358.6,339.6 354.4,345.2 350.5,351.2 347.1,357.6 344.0,364.3 341.0,371.2 340.2,373.1 339.5,374.9 338.8,376.8 338.1,378.7 337.6,380.7 337.2,382.6 337.0,384.7 337.1,386.8 337.5,389.0 338.4,391.4 339.9,394.0" fill="#6efd00" stroke="#6efd00" stroke-width=".7"/>
<polygon points="339.9,394.0 338.4,391.4 337.5,389.0 337.1,386.8 337.0,384.7 337.2,382.6 337.6,380.7 338.1,378.7 338.8,376.8 339.5,374.9 340.2,373.1 341.0,371.2 344.0,364.3 347.1,357.6 350.5,351.2 354.4,345.2 358.6,339.6 363.1,334.2 367.8,329.1 372.6,324.2 377.4,319.4 382.4,314.9 387.6,310.5 393.0,306.4 398.6,302.5 404.5,298.8 410.5,295.2 416.7,291.8 423.0,288.6 429.3,285.4 435.7,282.4 442.2,279.4 448.9,276.6 455.7,273.9 462.7,271.4 469.9,269.0 477.3,266.7 485.0,264.6 493.0,262.6 501.3,260.7 509.9,259.1 518.9,257.5 528.2,256.1 537.8,254.8 547.7,253.7 558.0,252.6 568.5,251.7 579.3,250.9 590.4,250.2 590.5,251.2 579.5,251.9 568.7,252.8 558.2,253.7 547.9,254.7 538.0,255.9 528.4,257.2 519.1,258.6 510.1,260.1 501.5,261.8 493.2,263.7 485.2,265.7 477.5,267.8 470.1,270.1 462.9,272.5 455.9,275.1 449.1,277.8 442.5,280.6 436.0,283.5 429.5,286.6 423.2,289.7 416.9,293.0 410.8,296.4 404.7,300.0 398.9,303.7 393.2,307.6 387.9,311.7 382.7,316.1 377.7,320.7 372.9,325.4 368.1,330.4 363.5,335.5 358.9,340.9 354.7,346.5 350.8,352.6 347.4,359.0 344.3,365.7 341.3,372.6 340.5,374.5 339.8,376.3 339.1,378.2 338.5,380.1 338.0,382.1 337.6,384.1 337.4,386.1 337.5,388.3 337.9,390.5 338.8,393.0 340.4,395.6" fill="#5afa00" stroke="#5afa00" stroke-width=".7"/>
<polygon points="340.4,395.6 338.8,393.0 337.9,390.5 337.5,388.3 337.4,386.1 337.6,384.1 338.0,382.1 338.5,380.1 339.1,378.2 339.8,376.3 340.5,374.5 341.3,372.6 344.3,365.7 347.4,359.0 350.8,352.6 354.7,346.5 358.9,340.9 363.5,335.5 368.1,330.4 372.9,325.4 377.7,320.7 382.7,316.1 387.9,311.7 393.2,307.6 398.9,303.7 404.7,300.0 410.8,296.4 416.9,293.0 423.2,289.7 429.5,286.6 436.0,283.5 442.5,280.6 449.1,277.8 455.9,275.1 462.9,272.5 470.1,270.1 477.5,267.8 485.2,265.7 493.2,263.7 501.5,261.8 510.1,260.1 519.1,258.6 528.4,257.2 538.0,255.9 547.9,254.7 558.2,253.7 568.7,252.8 579.5,251.9 590.5,251.2 590.7,252.3 579.6,253.0 568.8,253.8 558.3,254.8 548.1,255.8 538.2,257.0 528.6,258.3 519.3,259.7 510.4,261.2 501.7,262.9 493.4,264.8 485.4,266.8 477.7,268.9 470.3,271.2 463.1,273.6 456.1,276.2 449.4,278.9 442.7,281.7 436.2,284.6 429.8,287.7 423.5,290.9 417.2,294.2 411.0,297.6 405.0,301.1 399.2,304.9 393.5,308.8 388.1,313.0 383.0,317.3 378.0,321.9 373.2,326.7 368.4,331.6 363.8,336.8 359.3,342.2 355.0,347.8 351.2,353.9 347.8,360.3 344.6,367.0 341.7,374.0 340.9,375.9 340.2,377.7 339.5,379.6 338.9,381.5 338.3,383.5 338.0,385.5 337.8,387.6 337.9,389.8 338.3,392.0 339.2,394.5 340.8,397.2" fill="#46f700" stroke="#46f700" stroke-width=".7"/>
<polygon points="340.8,397.2 339.2,394.5 338.3,392.0 337.9,389.8 337.8,387.6 338.0,385.5 338.3,383.5 338.9,381.5 339.5,379.6 340.2,377.7 340.9,375.9 341.7,374.0 344.6,367.0 347.8,360.3 351.2,353.9 355.0,347.8 359.3,342.2 363.8,336.8 368.4,331.6 373.2,326.7 378.0,321.9 383.0,317.3 388.1,313.0 393.5,308.8 399.2,304.9 405.0,301.1 411.0,297.6 417.2,294.2 423.5,290.9 429.8,287.7 436.2,284.6 442.7,281.7 449.4,278.9 456.1,276.2 463.1,273.6 470.3,271.2 477.7,268.9 485.4,266.8 493.4,264.8 501.7,262.9 510.4,261.2 519.3,259.7 528.6,258.3 538.2,257.0 548.1,255.8 558.3,254.8 568.8,253.8 579.6,253.0 590.7,252.3 590.9,253.3 579.8,254.1 569.0,254.9 558.5,255.8 548.3,256.9 538.4,258.0 528.8,259.3 519.5,260.7 510.6,262.3 501.9,264.0 493.6,265.9 485.6,267.9 478.0,270.0 470.5,272.3 463.4,274.7 456.4,277.3 449.6,280.0 443.0,282.8 436.4,285.8 430.0,288.9 423.7,292.0 417.5,295.3 411.3,298.8 405.3,302.3 399.4,306.1 393.8,310.0 388.4,314.2 383.3,318.6 378.3,323.1 373.5,327.9 368.7,332.9 364.1,338.1 359.6,343.5 355.4,349.1 351.5,355.2 348.1,361.6 345.0,368.4 342.0,375.4 341.3,377.2 340.5,379.1 339.8,381.0 339.2,383.0 338.7,384.9 338.4,387.0 338.2,389.0 338.3,391.2 338.7,393.6 339.7,396.1 341.3,398.8" fill="#32f300" stroke="#32f300" stroke-width=".7"/>
<polygon points="341.3,398.8 339.7,396.1 338.7,393.6 338.3,391.2 338.2,389.0 338.4,387.0 338.7,384.9 339.2,383.0 339.8,381.0 340.5,379.1 341.3,377.2 342.0,375.4 345.0,368.4 348.1,361.6 351.5,355.2 355.4,349.1 359.6,343.5 364.1,338.1 368.7,332.9 373.5,327.9 378.3,323.1 383.3,318.6 388.4,314.2 393.8,310.0 399.4,306.1 405.3,302.3 411.3,298.8 417.5,295.3 423.7,292.0 430.0,288.9 436.4,285.8 443.0,282.8 449.6,280.0 456.4,277.3 463.4,274.7 470.5,272.3 478.0,270.0 485.6,267.9 493.6,265.9 501.9,264.0 510.6,262.3 519.5,260.7 528.8,259.3 538.4,258.0 548.3,256.9 558.5,255.8 569.0,254.9 579.8,254.1 590.9,253.3 591.0,254.4 580.0,255.1 569.2,256.0 558.7,256.9 548.5,257.9 538.6,259.1 529.0,260.4 519.7,261.8 510.8,263.4 502.1,265.1 493.8,267.0 485.9,269.0 478.2,271.1 470.8,273.4 463.6,275.9 456.6,278.4 449.8,281.1 443.2,284.0 436.7,286.9 430.3,290.0 424.0,293.2 417.7,296.5 411.6,299.9 405.5,303.5 399.7,307.3 394.1,311.2 388.7,315.4 383.6,319.8 378.6,324.4 373.8,329.2 369.0,334.2 364.4,339.3 359.9,344.7 355.7,350.4 351.8,356.5 348.4,363.0 345.3,369.7 342.4,376.7 341.6,378.6 340.9,380.5 340.2,382.4 339.6,384.4 339.1,386.4 338.7,388.4 338.6,390.5 338.7,392.7 339.2,395.1 340.1,397.6 341.8,400.4" fill="#1ef000" stroke="#1ef000" stroke-width=".7"/>
<polygon points="341.8,400.4 340.1,397.6 339.2,395.1 338.7,392.7 338.6,390.5 338.7,388.4 339.1,386.4 339.6,384.4 340.2,382.4 340.9,380.5 341.6,378.6 342.4,376.7 345.3,369.7 348.4,363.0 351.8,356.5 355.7,350.4 359.9,344.7 364.4,339.3 369.0,334.2 373.8,329.2 378.6,324.4 383.6,319.8 388.7,315.4 394.1,311.2 399.7,307.3 405.5,303.5 411.6,299.9 417.7,296.5 424.0,293.2 430.3,290.0 436.7,286.9 443.2,284.0 449.8,281.1 456.6,278.4 463.6,275.9 470.8,273.4 478.2,271.1 485.9,269.0 493.8,267.0 502.1,265.1 510.8,263.4 519.7,261.8 529.0,260.4 538.6,259.1 548.5,257.9 558.7,256.9 569.2,256.0 580.0,255.1 591.0,254.4 591.2,255.4 580.2,256.2 569.4,257.0 558.9,258.0 548.7,259.0 538.8,260.2 529.2,261.5 519.9,262.9 511.0,264.5 502.3,266.2 494.1,268.0 486.1,270.1 478.4,272.2 471.0,274.5 463.8,277.0 456.9,279.6 450.1,282.3 443.4,285.1 436.9,288.1 430.6,291.2 424.2,294.4 418.0,297.7 411.8,301.1 405.8,304.7 400.0,308.5 394.4,312.4 389.0,316.6 383.9,321.0 378.9,325.6 374.1,330.4 369.4,335.4 364.7,340.6 360.2,346.0 356.0,351.7 352.2,357.8 348.8,364.3 345.7,371.1 342.7,378.1 342.0,380.0 341.2,381.9 340.6,383.8 340.0,385.8 339.5,387.8 339.1,389.8 339.0,392.0 339.1,394.2 339.6,396.6 340.6,399.1 342.3,402.0" fill="#0aed00" stroke="#0aed00" stroke-width=".7"/>
<polygon points="342.3,402.0 340.6,399.1 339.6,396.6 339.1,394.2 339.0,392.0 339.1,389.8 339.5,387.8 340.0,385.8 340.6,383.8 341.2,381.9 342.0,380.0 342.7,378.1 345.7,371.1 348.8,364.3 352.2,357.8 356.0,351.7 360.2,346.0 364.7,340.6 369.4,335.4 374.1,330.4 378.9,325.6 383.9,321.0 389.0,316.6 394.4,312.4 400.0,308.5 405.8,304.7 411.8,301.1 418.0,297.7 424.2,294.4 430.6,291.2 436.9,288.1 443.4,285.1 450.1,282.3 456.9,279.6 463.8,277.0 471.0,274.5 478.4,272.2 486.1,270.1 494.1,268.0 502.3,266.2 511.0,264.5 519.9,262.9 529.2,261.5 538.8,260.2 548.7,259.0 558.9,258.0 569.4,257.0 580.2,256.2 591.2,255.4 591.4,256.5 580.4,257.2 569.6,258.1 559.1,259.0 548.9,260.1 539.0,261.3 529.4,262.6 520.1,264.0 511.2,265.6 502.6,267.3 494.3,269.1 486.3,271.2 478.6,273.3 471.2,275.6 464.1,278.1 457.1,280.7 450.3,283.4 443.7,286.3 437.2,289.2 430.8,292.3 424.5,295.5 418.3,298.8 412.1,302.3 406.1,305.9 400.3,309.7 394.7,313.6 389.3,317.8 384.2,322.2 379.2,326.8 374.4,331.7 369.7,336.7 365.0,341.9 360.6,347.3 356.3,353.0 352.5,359.1 349.1,365.6 346.0,372.4 343.1,379.5 342.3,381.4 341.6,383.3 340.9,385.2 340.3,387.2 339.9,389.2 339.5,391.3 339.4,393.4 339.5,395.7 340.0,398.1 341.0,400.7 342.8,403.6" fill="#00e403" stroke="#00e403" stroke-width=".7"/>
<polygon points="342.8,403.6 341.0,400.7 340.0,398.1 339.5,395.7 339.4,393.4 339.5,391.3 339.9,389.2 340.3,387.2 340.9,385.2 341.6,383.3 342.3,381.4 343.1,379.5 346.0,372.4 349.1,365.6 352.5,359.1 356.3,353.0 360.6,347.3 365.0,341.9 369.7,336.7 374.4,331.7 379.2,326.8 384.2,322.2 389.3,317.8 394.7,313.6 400.3,309.7 406.1,305.9 412.1,302.3 418.3,298.8 424.5,295.5 430.8,292.3 437.2,289.2 443.7,286.3 450.3,283.4 457.1,280.7 464.1,278.1 471.2,275.6 478.6,273.3 486.3,271.2 494.3,269.1 502.6,267.3 511.2,265.6 520.1,264.0 529.4,262.6 539.0,261.3 548.9,260.1 559.1,259.0 569.6,258.1 580.4,257.2 591.4,256.5 591.6,257.6 580.5,258.3 569.8,259.1 559.3,260.1 549.1,261.1 539.2,262.3 529.6,263.6 520.3,265.1 511.4,266.6 502.8,268.4 494.5,270.2 486.5,272.3 478.9,274.4 471.5,276.7 464.3,279.2 457.3,281.8 450.6,284.5 444.0,287.4 437.5,290.4 431.1,293.5 424.8,296.7 418.5,300.0 412.4,303.5 406.4,307.1 400.6,310.9 394.9,314.8 389.6,319.0 384.5,323.5 379.5,328.1 374.7,332.9 370.0,337.9 365.4,343.1 360.9,348.6 356.7,354.3 352.8,360.4 349.5,367.0 346.4,373.8 343.4,380.9 342.7,382.8 342.0,384.7 341.3,386.6 340.7,388.6 340.2,390.6 339.9,392.7 339.8,394.9 339.9,397.2 340.5,399.6 341.5,402.2 343.2,405.1" fill="#00d509" stroke="#00d509" stroke-width=".7"/>
<polygon points="343.2,405.1 341.5,402.2 340.5,399.6 339.9,397.2 339.8,394.9 339.9,392.7 340.2,390.6 340.7,388.6 341.3,386.6 342.0,384.7 342.7,382.8 343.4,380.9 346.4,373.8 349.5,367.0 352.8,360.4 356.7,354.3 360.9,348.6 365.4,343.1 370.0,337.9 374.7,332.9 379.5,328.1 384.5,323.5 389.6,319.0 394.9,314.8 400.6,310.9 406.4,307.1 412.4,303.5 418.5,300.0 424.8,296.7 431.1,293.5 437.5,290.4 444.0,287.4 450.6,284.5 457.3,281.8 464.3,279.2 471.5,276.7 478.9,274.4 486.5,272.3 494.5,270.2 502.8,268.4 511.4,266.6 520.3,265.1 529.6,263.6 539.2,262.3 549.1,261.1 559.3,260.1 569.8,259.1 580.5,258.3 591.6,257.6 591.8,258.6 580.7,259.4 570.0,260.2 559.5,261.2 549.3,262.2 539.4,263.4 529.8,264.7 520.6,266.1 511.6,267.7 503.0,269.5 494.7,271.3 486.8,273.4 479.1,275.5 471.7,277.9 464.5,280.3 457.6,282.9 450.8,285.7 444.2,288.5 437.7,291.5 431.3,294.6 425.0,297.8 418.8,301.2 412.7,304.6 406.7,308.3 400.8,312.1 395.2,316.0 389.9,320.3 384.8,324.7 379.8,329.3 375.0,334.2 370.3,339.2 365.7,344.4 361.2,349.9 357.0,355.6 353.2,361.8 349.8,368.3 346.7,375.1 343.8,382.2 343.1,384.1 342.4,386.1 341.7,388.0 341.1,390.0 340.6,392.0 340.3,394.1 340.2,396.3 340.3,398.6 340.9,401.1 342.0,403.8 343.7,406.7" fill="#00c60f" stroke="#00c60f" stroke-width=".7"/>
<polygon points="343.7,406.7 342.0,403.8 340.9,401.1 340.3,398.6 340.2,396.3 340.3,394.1 340.6,392.0 341.1,390.0 341.7,388.0 342.4,386.1 343.1,384.1 343.8,382.2 346.7,375.1 349.8,368.3 353.2,361.8 357.0,355.6 361.2,349.9 365.7,344.4 370.3,339.2 375.0,334.2 379.8,329.3 384.8,324.7 389.9,320.3 395.2,316.0 400.8,312.1 406.7,308.3 412.7,304.6 418.8,301.2 425.0,297.8 431.3,294.6 437.7,291.5 444.2,288.5 450.8,285.7 457.6,282.9 464.5,280.3 471.7,277.9 479.1,275.5 486.8,273.4 494.7,271.3 503.0,269.5 511.6,267.7 520.6,266.1 529.8,264.7 539.4,263.4 549.3,262.2 559.5,261.2 570.0,260.2 580.7,259.4 591.8,258.6 591.9,259.7 580.9,260.4 570.2,261.3 559.7,262.2 549.5,263.3 539.6,264.5 530.0,265.8 520.8,267.2 511.8,268.8 503.2,270.5 495.0,272.4 487.0,274.5 479.3,276.6 471.9,279.0 464.8,281.4 457.8,284.1 451.1,286.8 444.5,289.7 438.0,292.7 431.6,295.8 425.3,299.0 419.1,302.3 412.9,305.8 407.0,309.4 401.1,313.3 395.5,317.3 390.2,321.5 385.1,325.9 380.1,330.6 375.3,335.4 370.6,340.5 366.0,345.7 361.6,351.2 357.4,356.9 353.5,363.1 350.2,369.6 347.1,376.5 344.2,383.6 343.4,385.5 342.7,387.5 342.1,389.4 341.5,391.4 341.0,393.5 340.7,395.6 340.6,397.8 340.8,400.1 341.3,402.6 342.4,405.3 344.2,408.3" fill="#00b715" stroke="#00b715" stroke-width=".7"/>
<polygon points="344.2,408.3 342.4,405.3 341.3,402.6 340.8,400.1 340.6,397.8 340.7,395.6 341.0,393.5 341.5,391.4 342.1,389.4 342.7,387.5 343.4,385.5 344.2,383.6 347.1,376.5 350.2,369.6 353.5,363.1 357.4,356.9 361.6,351.2 366.0,345.7 370.6,340.5 375.3,335.4 380.1,330.6 385.1,325.9 390.2,321.5 395.5,317.3 401.1,313.3 407.0,309.4 412.9,305.8 419.1,302.3 425.3,299.0 431.6,295.8 438.0,292.7 444.5,289.7 451.1,286.8 457.8,284.1 464.8,281.4 471.9,279.0 479.3,276.6 487.0,274.5 495.0,272.4 503.2,270.5 511.8,268.8 520.8,267.2 530.0,265.8 539.6,264.5 549.5,263.3 559.7,262.2 570.2,261.3 580.9,260.4 591.9,259.7 592.1,260.7 581.1,261.5 570.4,262.3 559.9,263.3 549.7,264.4 539.8,265.5 530.2,266.9 521.0,268.3 512.1,269.9 503.5,271.6 495.2,273.5 487.2,275.6 479.6,277.7 472.2,280.1 465.0,282.6 458.1,285.2 451.3,287.9 444.7,290.8 438.3,293.8 431.9,296.9 425.6,300.2 419.4,303.5 413.2,307.0 407.2,310.6 401.4,314.4 395.8,318.5 390.5,322.7 385.4,327.1 380.5,331.8 375.7,336.7 371.0,341.7 366.4,347.0 361.9,352.5 357.7,358.3 353.9,364.4 350.5,371.0 347.5,377.8 344.6,385.0 343.8,386.9 343.1,388.8 342.5,390.8 341.9,392.8 341.4,394.9 341.1,397.0 341.0,399.3 341.2,401.6 341.8,404.1 342.9,406.9 344.8,409.9" fill="#00a81b" stroke="#00a81b" stroke-width=".7"/>
<polygon points="344.8,409.9 342.9,406.9 341.8,404.1 341.2,401.6 341.0,399.3 341.1,397.0 341.4,394.9 341.9,392.8 342.5,390.8 343.1,388.8 343.8,386.9 344.6,385.0 347.5,377.8 350.5,371.0 353.9,364.4 357.7,358.3 361.9,352.5 366.4,347.0 371.0,341.7 375.7,336.7 380.5,331.8 385.4,327.1 390.5,322.7 395.8,318.5 401.4,314.4 407.2,310.6 413.2,307.0 419.4,303.5 425.6,300.2 431.9,296.9 438.3,293.8 444.7,290.8 451.3,287.9 458.1,285.2 465.0,282.6 472.2,280.1 479.6,277.7 487.2,275.6 495.2,273.5 503.5,271.6 512.1,269.9 521.0,268.3 530.2,266.9 539.8,265.5 549.7,264.4 559.9,263.3 570.4,262.3 581.1,261.5 592.1,260.7 592.3,261.8 581.3,262.6 570.6,263.4 560.1,264.4 549.9,265.4 540.0,266.6 530.5,267.9 521.2,269.4 512.3,271.0 503.7,272.7 495.4,274.6 487.5,276.7 479.8,278.9 472.4,281.2 465.3,283.7 458.4,286.3 451.6,289.1 445.0,291.9 438.5,295.0 432.2,298.1 425.9,301.3 419.7,304.7 413.5,308.2 407.5,311.8 401.7,315.6 396.2,319.7 390.8,323.9 385.7,328.4 380.8,333.0 376.0,337.9 371.3,343.0 366.7,348.3 362.2,353.8 358.1,359.6 354.3,365.7 350.9,372.3 347.8,379.2 344.9,386.4 344.2,388.3 343.5,390.2 342.9,392.2 342.3,394.3 341.8,396.3 341.5,398.5 341.4,400.7 341.6,403.1 342.2,405.6 343.4,408.4 345.3,411.5" fill="#009921" stroke="#009921" stroke-width=".7"/>
<polygon points="345.3,411.5 343.4,408.4 342.2,405.6 341.6,403.1 341.4,400.7 341.5,398.5 341.8,396.3 342.3,394.3 342.9,392.2 343.5,390.2 344.2,388.3 344.9,386.4 347.8,379.2 350.9,372.3 354.3,365.7 358.1,359.6 362.2,353.8 366.7,348.3 371.3,343.0 376.0,337.9 380.8,333.0 385.7,328.4 390.8,323.9 396.2,319.7 401.7,315.6 407.5,311.8 413.5,308.2 419.7,304.7 425.9,301.3 432.2,298.1 438.5,295.0 445.0,291.9 451.6,289.1 458.4,286.3 465.3,283.7 472.4,281.2 479.8,278.9 487.5,276.7 495.4,274.6 503.7,272.7 512.3,271.0 521.2,269.4 530.5,267.9 540.0,266.6 549.9,265.4 560.1,264.4 570.6,263.4 581.3,262.6 592.3,261.8 592.6,262.9 581.5,263.6 570.8,264.5 560.3,265.4 550.1,266.5 540.3,267.7 530.7,269.0 521.5,270.5 512.5,272.1 503.9,273.8 495.7,275.7 487.7,277.8 480.1,280.0 472.7,282.3 465.6,284.8 458.6,287.4 451.9,290.2 445.3,293.1 438.8,296.1 432.5,299.2 426.2,302.5 420.0,305.9 413.8,309.4 407.9,313.0 402.0,316.9 396.5,320.9 391.1,325.1 386.0,329.6 381.1,334.3 376.3,339.2 371.6,344.3 367.0,349.5 362.6,355.1 358.4,360.9 354.6,367.0 351.3,373.6 348.2,380.6 345.3,387.7 344.6,389.7 343.9,391.6 343.3,393.6 342.7,395.7 342.2,397.8 342.0,399.9 341.9,402.2 342.1,404.6 342.7,407.2 343.9,410.0 345.8,413.1" fill="#008a27" stroke="#008a27" stroke-width=".7"/>
<polygon points="345.8,413.1 343.9,410.0 342.7,407.2 342.1,404.6 341.9,402.2 342.0,399.9 342.2,397.8 342.7,395.7 343.3,393.6 343.9,391.6 344.6,389.7 345.3,387.7 348.2,380.6 351.3,373.6 354.6,367.0 358.4,360.9 362.6,355.1 367.0,349.5 371.6,344.3 376.3,339.2 381.1,334.3 386.0,329.6 391.1,325.1 396.5,320.9 402.0,316.9 407.9,313.0 413.8,309.4 420.0,305.9 426.2,302.5 432.5,299.2 438.8,296.1 445.3,293.1 451.9,290.2 458.6,287.4 465.6,284.8 472.7,282.3 480.1,280.0 487.7,277.8 495.7,275.7 503.9,273.8 512.5,272.1 521.5,270.5 530.7,269.0 540.3,267.7 550.1,266.5 560.3,265.4 570.8,264.5 581.5,263.6 592.6,262.9 592.8,263.9 581.8,264.7 571.0,265.5 560.5,266.5 550.4,267.6 540.5,268.8 530.9,270.1 521.7,271.6 512.8,273.2 504.2,274.9 495.9,276.8 488.0,278.9 480.4,281.1 473.0,283.4 465.8,285.9 458.9,288.6 452.2,291.3 445.6,294.2 439.1,297.3 432.8,300.4 426.5,303.7 420.3,307.0 414.1,310.6 408.2,314.2 402.4,318.1 396.8,322.1 391.5,326.4 386.4,330.8 381.5,335.5 376.7,340.4 372.0,345.5 367.4,350.8 363.0,356.3 358.8,362.2 355.0,368.4 351.7,375.0 348.6,381.9 345.7,389.1 345.0,391.1 344.3,393.0 343.7,395.0 343.1,397.1 342.7,399.2 342.4,401.4 342.3,403.7 342.6,406.1 343.2,408.7 344.4,411.5 346.3,414.7" fill="#007936" stroke="#007936" stroke-width=".7"/>
<polygon points="346.3,414.7 344.4,411.5 343.2,408.7 342.6,406.1 342.3,403.7 342.4,401.4 342.7,399.2 343.1,397.1 343.7,395.0 344.3,393.0 345.0,391.1 345.7,389.1 348.6,381.9 351.7,375.0 355.0,368.4 358.8,362.2 363.0,356.3 367.4,350.8 372.0,345.5 376.7,340.4 381.5,335.5 386.4,330.8 391.5,326.4 396.8,322.1 402.4,318.1 408.2,314.2 414.1,310.6 420.3,307.0 426.5,303.7 432.8,300.4 439.1,297.3 445.6,294.2 452.2,291.3 458.9,288.6 465.8,285.9 473.0,283.4 480.4,281.1 488.0,278.9 495.9,276.8 504.2,274.9 512.8,273.2 521.7,271.6 530.9,270.1 540.5,268.8 550.4,267.6 560.5,266.5 571.0,265.5 581.8,264.7 592.8,263.9 593.0,265.0 582.0,265.8 571.3,266.6 560.8,267.6 550.6,268.7 540.7,269.9 531.2,271.2 522.0,272.7 513.1,274.3 504.5,276.0 496.2,277.9 488.3,280.0 480.6,282.2 473.3,284.6 466.1,287.1 459.2,289.7 452.5,292.5 445.9,295.4 439.4,298.4 433.1,301.6 426.8,304.8 420.6,308.2 414.5,311.7 408.5,315.4 402.7,319.3 397.1,323.3 391.8,327.6 386.7,332.1 381.8,336.8 377.0,341.7 372.4,346.8 367.8,352.1 363.3,357.6 359.2,363.5 355.4,369.7 352.1,376.3 349.0,383.3 346.2,390.5 345.4,392.5 344.7,394.5 344.1,396.5 343.5,398.5 343.1,400.6 342.8,402.8 342.8,405.1 343.0,407.6 343.7,410.2 344.9,413.1 346.9,416.4" fill="#006849" stroke="#006849" stroke-width=".7"/>
<polygon points="346.9,416.4 344.9,413.1 343.7,410.2 343.0,407.6 342.8,405.1 342.8,402.8 343.1,400.6 343.5,398.5 344.1,396.5 344.7,394.5 345.4,392.5 346.2,390.5 349.0,383.3 352.1,376.3 355.4,369.7 359.2,363.5 363.3,357.6 367.8,352.1 372.4,346.8 377.0,341.7 381.8,336.8 386.7,332.1 391.8,327.6 397.1,323.3 402.7,319.3 408.5,315.4 414.5,311.7 420.6,308.2 426.8,304.8 433.1,301.6 439.4,298.4 445.9,295.4 452.5,292.5 459.2,289.7 466.1,287.1 473.3,284.6 480.6,282.2 488.3,280.0 496.2,277.9 504.5,276.0 513.1,274.3 522.0,272.7 531.2,271.2 540.7,269.9 550.6,268.7 560.8,267.6 571.3,266.6 582.0,265.8 593.0,265.0 593.2,266.1 582.2,266.8 571.5,267.7 561.0,268.7 550.9,269.7 541.0,270.9 531.5,272.3 522.2,273.7 513.3,275.4 504.7,277.1 496.5,279.0 488.5,281.1 480.9,283.3 473.5,285.7 466.4,288.2 459.5,290.8 452.8,293.6 446.2,296.5 439.7,299.6 433.4,302.7 427.1,306.0 420.9,309.4 414.8,312.9 408.8,316.6 403.0,320.5 397.5,324.5 392.2,328.8 387.1,333.3 382.2,338.0 377.4,343.0 372.7,348.1 368.2,353.4 363.7,359.0 359.6,364.8 355.8,371.0 352.5,377.7 349.4,384.7 346.6,391.9 345.9,393.9 345.2,395.9 344.5,397.9 344.0,400.0 343.6,402.1 343.3,404.3 343.2,406.6 343.5,409.1 344.2,411.8 345.5,414.7 347.5,418.0" fill="#00575b" stroke="#00575b" stroke-width=".7"/>
<polygon points="347.5,418.0 345.5,414.7 344.2,411.8 343.5,409.1 343.2,406.6 343.3,404.3 343.6,402.1 344.0,400.0 344.5,397.9 345.2,395.9 345.9,393.9 346.6,391.9 349.4,384.7 352.5,377.7 355.8,371.0 359.6,364.8 363.7,359.0 368.2,353.4 372.7,348.1 377.4,343.0 382.2,338.0 387.1,333.3 392.2,328.8 397.5,324.5 403.0,320.5 408.8,316.6 414.8,312.9 420.9,309.4 427.1,306.0 433.4,302.7 439.7,299.6 446.2,296.5 452.8,293.6 459.5,290.8 466.4,288.2 473.5,285.7 480.9,283.3 488.5,281.1 496.5,279.0 504.7,277.1 513.3,275.4 522.2,273.7 531.5,272.3 541.0,270.9 550.9,269.7 561.0,268.7 571.5,267.7 582.2,266.8 593.2,266.1 593.5,267.1 582.5,267.9 571.8,268.8 561.3,269.7 551.1,270.8 541.3,272.0 531.7,273.4 522.5,274.8 513.6,276.5 505.0,278.2 496.8,280.1 488.8,282.2 481.2,284.4 473.9,286.8 466.7,289.3 459.8,292.0 453.1,294.8 446.5,297.7 440.0,300.7 433.7,303.9 427.4,307.2 421.2,310.6 415.1,314.1 409.2,317.8 403.4,321.7 397.8,325.8 392.5,330.1 387.4,334.6 382.5,339.3 377.8,344.2 373.1,349.4 368.5,354.7 364.1,360.3 360.0,366.1 356.2,372.4 352.9,379.0 349.9,386.0 347.0,393.3 346.3,395.3 345.6,397.3 345.0,399.3 344.4,401.4 344.0,403.5 343.8,405.8 343.7,408.1 344.0,410.6 344.7,413.3 346.0,416.3 348.1,419.6" fill="#00456e" stroke="#00456e" stroke-width=".7"/>
<polygon points="348.1,419.6 346.0,416.3 344.7,413.3 344.0,410.6 343.7,408.1 343.8,405.8 344.0,403.5 344.4,401.4 345.0,399.3 345.6,397.3 346.3,395.3 347.0,393.3 349.9,386.0 352.9,379.0 356.2,372.4 360.0,366.1 364.1,360.3 368.5,354.7 373.1,349.4 377.8,344.2 382.5,339.3 387.4,334.6 392.5,330.1 397.8,325.8 403.4,321.7 409.2,317.8 415.1,314.1 421.2,310.6 427.4,307.2 433.7,303.9 440.0,300.7 446.5,297.7 453.1,294.8 459.8,292.0 466.7,289.3 473.9,286.8 481.2,284.4 488.8,282.2 496.8,280.1 505.0,278.2 513.6,276.5 522.5,274.8 531.7,273.4 541.3,272.0 551.1,270.8 561.3,269.7 571.8,268.8 582.5,267.9 593.5,267.1 593.8,268.2 582.8,269.0 572.0,269.9 561.6,270.8 551.4,271.9 541.6,273.1 532.0,274.5 522.8,275.9 513.9,277.6 505.3,279.3 497.1,281.2 489.2,283.3 481.5,285.6 474.2,287.9 467.1,290.5 460.1,293.1 453.4,295.9 446.8,298.9 440.4,301.9 434.0,305.1 427.8,308.4 421.6,311.8 415.5,315.3 409.5,319.0 403.8,322.9 398.2,327.0 392.9,331.3 387.8,335.8 382.9,340.6 378.2,345.5 373.5,350.7 369.0,356.0 364.5,361.6 360.4,367.5 356.6,373.7 353.3,380.4 350.3,387.4 347.5,394.7 346.8,396.7 346.1,398.7 345.5,400.7 344.9,402.8 344.5,405.0 344.3,407.2 344.2,409.6 344.5,412.1 345.3,414.9 346.6,417.9 348.7,421.3" fill="#003682" stroke="#003682" stroke-width=".7"/>
<polygon points="348.7,421.3 346.6,417.9 345.3,414.9 344.5,412.1 344.2,409.6 344.3,407.2 344.5,405.0 344.9,402.8 345.5,400.7 346.1,398.7 346.8,396.7 347.5,394.7 350.3,387.4 353.3,380.4 356.6,373.7 360.4,367.5 364.5,361.6 369.0,356.0 373.5,350.7 378.2,345.5 382.9,340.6 387.8,335.8 392.9,331.3 398.2,327.0 403.8,322.9 409.5,319.0 415.5,315.3 421.6,311.8 427.8,308.4 434.0,305.1 440.4,301.9 446.8,298.9 453.4,295.9 460.1,293.1 467.1,290.5 474.2,287.9 481.5,285.6 489.2,283.3 497.1,281.2 505.3,279.3 513.9,277.6 522.8,275.9 532.0,274.5 541.6,273.1 551.4,271.9 561.6,270.8 572.0,269.9 582.8,269.0 593.8,268.2 594.0,269.3 583.1,270.1 572.3,270.9 561.9,271.9 551.7,273.0 541.9,274.2 532.3,275.6 523.1,277.0 514.2,278.7 505.6,280.4 497.4,282.4 489.5,284.5 481.9,286.7 474.5,289.1 467.4,291.6 460.5,294.3 453.8,297.1 447.2,300.0 440.7,303.1 434.4,306.3 428.2,309.6 422.0,313.0 415.9,316.5 409.9,320.3 404.2,324.1 398.6,328.2 393.3,332.5 388.2,337.1 383.3,341.8 378.6,346.8 374.0,351.9 369.4,357.3 365.0,362.9 360.8,368.8 357.1,375.1 353.8,381.8 350.8,388.8 348.0,396.1 347.2,398.1 346.6,400.1 346.0,402.2 345.4,404.3 345.0,406.5 344.8,408.7 344.8,411.1 345.1,413.7 345.8,416.4 347.2,419.5 349.4,422.9" fill="#002896" stroke="#002896" stroke-width=".7"/>
<polygon points="349.4,422.9 347.2,419.5 345.8,416.4 345.1,413.7 344.8,411.1 344.8,408.7 345.0,406.5 345.4,404.3 346.0,402.2 346.6,400.1 347.2,398.1 348.0,396.1 350.8,388.8 353.8,381.8 357.1,375.1 360.8,368.8 365.0,362.9 369.4,357.3 374.0,351.9 378.6,346.8 383.3,341.8 388.2,337.1 393.3,332.5 398.6,328.2 404.2,324.1 409.9,320.3 415.9,316.5 422.0,313.0 428.2,309.6 434.4,306.3 440.7,303.1 447.2,300.0 453.8,297.1 460.5,294.3 467.4,291.6 474.5,289.1 481.9,286.7 489.5,284.5 497.4,282.4 505.6,280.4 514.2,278.7 523.1,277.0 532.3,275.6 541.9,274.2 551.7,273.0 561.9,271.9 572.3,270.9 583.1,270.1 594.0,269.3 594.3,270.4 583.4,271.2 572.6,272.0 562.2,273.0 552.0,274.1 542.2,275.3 532.7,276.7 523.4,278.2 514.6,279.8 506.0,281.6 497.7,283.5 489.8,285.6 482.2,287.8 474.9,290.2 467.8,292.8 460.8,295.4 454.1,298.2 447.6,301.2 441.1,304.3 434.8,307.5 428.5,310.8 422.4,314.2 416.3,317.8 410.3,321.5 404.6,325.4 399.0,329.5 393.7,333.8 388.7,338.3 383.8,343.1 379.0,348.1 374.4,353.3 369.8,358.6 365.4,364.2 361.3,370.1 357.6,376.4 354.3,383.1 351.3,390.2 348.5,397.6 347.7,399.6 347.1,401.6 346.5,403.6 345.9,405.8 345.5,408.0 345.3,410.2 345.3,412.6 345.7,415.2 346.4,418.0 347.8,421.1 350.0,424.6" fill="#001bab" stroke="#001bab" stroke-width=".7"/>
<polygon points="350.0,424.6 347.8,421.1 346.4,418.0 345.7,415.2 345.3,412.6 345.3,410.2 345.5,408.0 345.9,405.8 346.5,403.6 347.1,401.6 347.7,399.6 348.5,397.6 351.3,390.2 354.3,383.1 357.6,376.4 361.3,370.1 365.4,364.2 369.8,358.6 374.4,353.3 379.0,348.1 383.8,343.1 388.7,338.3 393.7,333.8 399.0,329.5 404.6,325.4 410.3,321.5 416.3,317.8 422.4,314.2 428.5,310.8 434.8,307.5 441.1,304.3 447.6,301.2 454.1,298.2 460.8,295.4 467.8,292.8 474.9,290.2 482.2,287.8 489.8,285.6 497.7,283.5 506.0,281.6 514.6,279.8 523.4,278.2 532.7,276.7 542.2,275.3 552.0,274.1 562.2,273.0 572.6,272.0 583.4,271.2 594.3,270.4 594.7,271.5 583.7,272.3 573.0,273.1 562.5,274.1 552.4,275.2 542.5,276.4 533.0,277.8 523.8,279.3 514.9,280.9 506.4,282.7 498.1,284.6 490.2,286.7 482.6,289.0 475.2,291.4 468.1,293.9 461.2,296.6 454.5,299.4 448.0,302.4 441.5,305.5 435.2,308.7 429.0,312.0 422.8,315.4 416.7,319.0 410.8,322.7 405.0,326.6 399.5,330.7 394.2,335.1 389.1,339.6 384.2,344.4 379.5,349.4 374.9,354.6 370.3,360.0 365.9,365.6 361.8,371.5 358.1,377.8 354.8,384.5 351.8,391.6 349.0,399.0 348.3,401.0 347.6,403.0 347.0,405.1 346.5,407.2 346.1,409.4 345.9,411.7 345.9,414.2 346.3,416.8 347.1,419.6 348.5,422.7 350.8,426.3" fill="#000dc0" stroke="#000dc0" stroke-width=".7"/>
<polygon points="350.8,426.3 348.5,422.7 347.1,419.6 346.3,416.8 345.9,414.2 345.9,411.7 346.1,409.4 346.5,407.2 347.0,405.1 347.6,403.0 348.3,401.0 349.0,399.0 351.8,391.6 354.8,384.5 358.1,377.8 361.8,371.5 365.9,365.6 370.3,360.0 374.9,354.6 379.5,349.4 384.2,344.4 389.1,339.6 394.2,335.1 399.5,330.7 405.0,326.6 410.8,322.7 416.7,319.0 422.8,315.4 429.0,312.0 435.2,308.7 441.5,305.5 448.0,302.4 454.5,299.4 461.2,296.6 468.1,293.9 475.2,291.4 482.6,289.0 490.2,286.7 498.1,284.6 506.4,282.7 514.9,280.9 523.8,279.3 533.0,277.8 542.5,276.4 552.4,275.2 562.5,274.1 573.0,273.1 583.7,272.3 594.7,271.5 595.1,272.6 584.1,273.4 573.4,274.2 562.9,275.2 552.8,276.3 542.9,277.6 533.4,278.9 524.2,280.4 515.3,282.0 506.8,283.8 498.5,285.8 490.6,287.9 483.0,290.1 475.7,292.5 468.6,295.1 461.7,297.8 455.0,300.6 448.4,303.6 442.0,306.7 435.6,309.9 429.4,313.2 423.2,316.6 417.2,320.2 411.2,324.0 405.5,327.9 399.9,332.0 394.7,336.3 389.6,340.9 384.7,345.7 380.0,350.7 375.4,355.9 370.8,361.3 366.4,366.9 362.3,372.9 358.6,379.2 355.3,385.9 352.3,393.0 349.5,400.5 348.9,402.5 348.2,404.5 347.6,406.6 347.1,408.7 346.7,411.0 346.5,413.3 346.5,415.7 346.9,418.4 347.8,421.2 349.2,424.4 351.6,428.0" fill="#0007ce" stroke="#0007ce" stroke-width=".7"/>
<polygon points="351.6,428.0 349.2,424.4 347.8,421.2 346.9,418.4 346.5,415.7 346.5,413.3 346.7,411.0 347.1,408.7 347.6,406.6 348.2,404.5 348.9,402.5 349.5,400.5 352.3,393.0 355.3,385.9 358.6,379.2 362.3,372.9 366.4,366.9 370.8,361.3 375.4,355.9 380.0,350.7 384.7,345.7 389.6,340.9 394.7,336.3 399.9,332.0 405.5,327.9 411.2,324.0 417.2,320.2 423.2,316.6 429.4,313.2 435.6,309.9 442.0,306.7 448.4,303.6 455.0,300.6 461.7,297.8 468.6,295.1 475.7,292.5 483.0,290.1 490.6,287.9 498.5,285.8 506.8,283.8 515.3,282.0 524.2,280.4 533.4,278.9 542.9,277.6 552.8,276.3 562.9,275.2 573.4,274.2 584.1,273.4 595.1,272.6 595.5,273.7 584.5,274.5 573.8,275.4 563.3,276.4 553.2,277.5 543.4,278.7 533.8,280.1 524.6,281.6 515.7,283.2 507.2,285.0 499.0,286.9 491.1,289.0 483.5,291.3 476.1,293.7 469.0,296.3 462.1,299.0 455.4,301.8 448.9,304.8 442.4,307.9 436.1,311.1 429.9,314.4 423.7,317.9 417.7,321.5 411.7,325.2 406.0,329.2 400.4,333.3 395.2,337.6 390.1,342.2 385.3,347.0 380.5,352.0 375.9,357.2 371.4,362.7 367.0,368.3 362.9,374.3 359.2,380.6 355.9,387.4 352.9,394.5 350.2,401.9 349.5,404.0 348.8,406.0 348.2,408.1 347.7,410.3 347.4,412.5 347.2,414.8 347.2,417.3 347.6,420.0 348.5,422.9 350.0,426.1 352.4,429.8" fill="#0005d9" stroke="#0005d9" stroke-width=".7"/>
<polygon points="352.4,429.8 350.0,426.1 348.5,422.9 347.6,420.0 347.2,417.3 347.2,414.8 347.4,412.5 347.7,410.3 348.2,408.1 348.8,406.0 349.5,404.0 350.2,401.9 352.9,394.5 355.9,387.4 359.2,380.6 362.9,374.3 367.0,368.3 371.4,362.7 375.9,357.2 380.5,352.0 385.3,347.0 390.1,342.2 395.2,337.6 400.4,333.3 406.0,329.2 411.7,325.2 417.7,321.5 423.7,317.9 429.9,314.4 436.1,311.1 442.4,307.9 448.9,304.8 455.4,301.8 462.1,299.0 469.0,296.3 476.1,293.7 483.5,291.3 491.1,289.0 499.0,286.9 507.2,285.0 515.7,283.2 524.6,281.6 533.8,280.1 543.4,278.7 553.2,277.5 563.3,276.4 573.8,275.4 584.5,274.5 595.5,273.7 595.9,274.8 584.9,275.6 574.2,276.5 563.8,277.5 553.7,278.6 543.8,279.8 534.3,281.2 525.1,282.7 516.2,284.4 507.7,286.2 499.5,288.1 491.6,290.2 484.0,292.5 476.6,294.9 469.5,297.5 462.6,300.2 455.9,303.0 449.4,306.0 443.0,309.1 436.7,312.3 430.4,315.7 424.3,319.1 418.2,322.7 412.3,326.5 406.5,330.4 401.0,334.6 395.7,339.0 390.7,343.6 385.9,348.4 381.1,353.4 376.5,358.6 372.0,364.0 367.6,369.7 363.5,375.7 359.8,382.1 356.5,388.8 353.6,396.0 350.8,403.5 350.1,405.5 349.5,407.5 348.9,409.7 348.4,411.8 348.1,414.1 347.9,416.4 348.0,418.9 348.4,421.6 349.3,424.5 350.9,427.8 353.3,431.6" fill="#0003e3" stroke="#0003e3" stroke-width=".7"/>
<polygon points="353.3,431.6 350.9,427.8 349.3,424.5 348.4,421.6 348.0,418.9 347.9,416.4 348.1,414.1 348.4,411.8 348.9,409.7 349.5,407.5 350.1,405.5 350.8,403.5 353.6,396.0 356.5,388.8 359.8,382.1 363.5,375.7 367.6,369.7 372.0,364.0 376.5,358.6 381.1,353.4 385.9,348.4 390.7,343.6 395.7,339.0 401.0,334.6 406.5,330.4 412.3,326.5 418.2,322.7 424.3,319.1 430.4,315.7 436.7,312.3 443.0,309.1 449.4,306.0 455.9,303.0 462.6,300.2 469.5,297.5 476.6,294.9 484.0,292.5 491.6,290.2 499.5,288.1 507.7,286.2 516.2,284.4 525.1,282.7 534.3,281.2 543.8,279.8 553.7,278.6 563.8,277.5 574.2,276.5 584.9,275.6 595.9,274.8 596.5,276.0 585.5,276.8 574.8,277.7 564.3,278.7 554.2,279.8 544.4,281.0 534.9,282.4 525.7,283.9 516.8,285.5 508.2,287.3 500.0,289.3 492.1,291.4 484.5,293.7 477.2,296.1 470.1,298.7 463.2,301.4 456.5,304.3 450.0,307.2 443.6,310.4 437.3,313.6 431.0,317.0 424.9,320.4 418.8,324.0 412.9,327.8 407.2,331.8 401.7,335.9 396.4,340.3 391.4,344.9 386.5,349.7 381.8,354.8 377.2,360.0 372.7,365.5 368.3,371.2 364.2,377.2 360.5,383.5 357.3,390.3 354.3,397.5 351.6,405.0 350.9,407.0 350.3,409.1 349.7,411.2 349.2,413.4 348.9,415.7 348.7,418.1 348.8,420.6 349.3,423.3 350.2,426.3 351.8,429.6 354.4,433.4" fill="#0001ee" stroke="#0001ee" stroke-width=".7"/>
<polygon points="354.4,433.4 351.8,429.6 350.2,426.3 349.3,423.3 348.8,420.6 348.7,418.1 348.9,415.7 349.2,413.4 349.7,411.2 350.3,409.1 350.9,407.0 351.6,405.0 354.3,397.5 357.3,390.3 360.5,383.5 364.2,377.2 368.3,371.2 372.7,365.5 377.2,360.0 381.8,354.8 386.5,349.7 391.4,344.9 396.4,340.3 401.7,335.9 407.2,331.8 412.9,327.8 418.8,324.0 424.9,320.4 431.0,317.0 437.3,313.6 443.6,310.4 450.0,307.2 456.5,304.3 463.2,301.4 470.1,298.7 477.2,296.1 484.5,293.7 492.1,291.4 500.0,289.3 508.2,287.3 516.8,285.5 525.7,283.9 534.9,282.4 544.4,281.0 554.2,279.8 564.3,278.7 574.8,277.7 585.5,276.8 596.5,276.0 597.1,277.2 586.1,278.0 575.4,278.9 565.0,279.9 554.9,281.0 545.0,282.2 535.5,283.6 526.3,285.1 517.5,286.8 508.9,288.6 500.7,290.5 492.8,292.7 485.2,294.9 477.9,297.4 470.8,300.0 463.9,302.7 457.2,305.5 450.7,308.5 444.3,311.7 438.0,314.9 431.8,318.3 425.6,321.8 419.6,325.4 413.6,329.2 407.9,333.1 402.4,337.3 397.1,341.7 392.1,346.3 387.3,351.2 382.6,356.2 378.0,361.5 373.5,366.9 369.1,372.6 365.0,378.7 361.3,385.0 358.1,391.9 355.2,399.1 352.5,406.6 351.8,408.6 351.1,410.7 350.6,412.9 350.1,415.1 349.8,417.4 349.6,419.7 349.8,422.3 350.3,425.1 351.3,428.1 353.0,431.5 355.6,435.4" fill="#0000f6" stroke="#0000f6" stroke-width=".7"/>
<polygon points="355.6,435.4 353.0,431.5 351.3,428.1 350.3,425.1 349.8,422.3 349.6,419.7 349.8,417.4 350.1,415.1 350.6,412.9 351.1,410.7 351.8,408.6 352.5,406.6 355.2,399.1 358.1,391.9 361.3,385.0 365.0,378.7 369.1,372.6 373.5,366.9 378.0,361.5 382.6,356.2 387.3,351.2 392.1,346.3 397.1,341.7 402.4,337.3 407.9,333.1 413.6,329.2 419.6,325.4 425.6,321.8 431.8,318.3 438.0,314.9 444.3,311.7 450.7,308.5 457.2,305.5 463.9,302.7 470.8,300.0 477.9,297.4 485.2,294.9 492.8,292.7 500.7,290.5 508.9,288.6 517.5,286.8 526.3,285.1 535.5,283.6 545.0,282.2 554.9,281.0 565.0,279.9 575.4,278.9 586.1,278.0 597.1,277.2 597.9,278.4 586.9,279.2 576.2,280.1 565.8,281.1 555.7,282.2 545.8,283.5 536.3,284.9 527.1,286.4 518.3,288.0 509.7,289.8 501.5,291.8 493.6,293.9 486.0,296.2 478.7,298.7 471.6,301.3 464.8,304.0 458.1,306.9 451.5,309.9 445.1,313.0 438.8,316.3 432.6,319.7 426.5,323.2 420.4,326.8 414.5,330.6 408.8,334.6 403.3,338.7 398.1,343.2 393.0,347.8 388.2,352.7 383.5,357.7 378.9,363.0 374.4,368.5 370.1,374.2 366.0,380.2 362.3,386.6 359.1,393.5 356.2,400.7 353.5,408.3 352.8,410.3 352.2,412.4 351.6,414.6 351.2,416.8 350.9,419.1 350.8,421.5 350.9,424.1 351.5,426.9 352.5,430.0 354.3,433.4 357.0,437.4" fill="#0000f8" stroke="#0000f8" stroke-width=".7"/>
<polygon points="357.0,437.4 354.3,433.4 352.5,430.0 351.5,426.9 350.9,424.1 350.8,421.5 350.9,419.1 351.2,416.8 351.6,414.6 352.2,412.4 352.8,410.3 353.5,408.3 356.2,400.7 359.1,393.5 362.3,386.6 366.0,380.2 370.1,374.2 374.4,368.5 378.9,363.0 383.5,357.7 388.2,352.7 393.0,347.8 398.1,343.2 403.3,338.7 408.8,334.6 414.5,330.6 420.4,326.8 426.5,323.2 432.6,319.7 438.8,316.3 445.1,313.0 451.5,309.9 458.1,306.9 464.8,304.0 471.6,301.3 478.7,298.7 486.0,296.2 493.6,293.9 501.5,291.8 509.7,289.8 518.3,288.0 527.1,286.4 536.3,284.9 545.8,283.5 555.7,282.2 565.8,281.1 576.2,280.1 586.9,279.2 597.9,278.4 599.0,279.8 588.0,280.5 577.3,281.4 566.9,282.4 556.7,283.6 546.9,284.8 537.4,286.2 528.2,287.7 519.4,289.4 510.8,291.2 502.6,293.2 494.7,295.3 487.1,297.6 479.8,300.1 472.7,302.7 465.9,305.4 459.2,308.3 452.7,311.3 446.3,314.5 440.0,317.7 433.8,321.1 427.6,324.7 421.6,328.3 415.7,332.1 410.0,336.1 404.5,340.3 399.3,344.7 394.2,349.4 389.4,354.3 384.7,359.4 380.2,364.7 375.7,370.1 371.4,375.9 367.3,382.0 363.6,388.4 360.4,395.3 357.5,402.5 354.9,410.1 354.2,412.2 353.6,414.3 353.0,416.5 352.6,418.7 352.3,421.1 352.2,423.5 352.4,426.1 353.0,429.0 354.2,432.1 356.1,435.6 358.9,439.7" fill="#0000fa" stroke="#0000fa" stroke-width=".7"/>
<polygon points="358.9,439.7 356.1,435.6 354.2,432.1 353.0,429.0 352.4,426.1 352.2,423.5 352.3,421.1 352.6,418.7 353.0,416.5 353.6,414.3 354.2,412.2 354.9,410.1 357.5,402.5 360.4,395.3 363.6,388.4 367.3,382.0 371.4,375.9 375.7,370.1 380.2,364.7 384.7,359.4 389.4,354.3 394.2,349.4 399.3,344.7 404.5,340.3 410.0,336.1 415.7,332.1 421.6,328.3 427.6,324.7 433.8,321.1 440.0,317.7 446.3,314.5 452.7,311.3 459.2,308.3 465.9,305.4 472.7,302.7 479.8,300.1 487.1,297.6 494.7,295.3 502.6,293.2 510.8,291.2 519.4,289.4 528.2,287.7 537.4,286.2 546.9,284.8 556.7,283.6 566.9,282.4 577.3,281.4 588.0,280.5 599.0,279.8 600.7,281.3 589.8,282.1 579.0,283.0 568.6,284.0 558.5,285.1 548.6,286.4 539.1,287.8 529.9,289.3 521.1,291.0 512.5,292.8 504.3,294.8 496.4,296.9 488.9,299.3 481.5,301.7 474.5,304.3 467.6,307.1 460.9,310.0 454.4,313.0 448.0,316.2 441.8,319.5 435.6,322.9 429.4,326.4 423.4,330.1 417.5,333.9 411.8,337.9 406.3,342.1 401.1,346.6 396.1,351.3 391.3,356.2 386.7,361.3 382.1,366.6 377.6,372.1 373.3,377.9 369.3,384.0 365.6,390.5 362.4,397.4 359.6,404.7 356.9,412.3 356.3,414.4 355.7,416.6 355.2,418.8 354.8,421.0 354.5,423.4 354.5,425.9 354.8,428.5 355.5,431.5 356.7,434.7 358.8,438.3 361.9,442.6" fill="#0000fc" stroke="#0000fc" stroke-width=".7"/>
<polygon points="361.9,442.6 358.8,438.3 356.7,434.7 355.5,431.5 354.8,428.5 354.5,425.9 354.5,423.4 354.8,421.0 355.2,418.8 355.7,416.6 356.3,414.4 356.9,412.3 359.6,404.7 362.4,397.4 365.6,390.5 369.3,384.0 373.3,377.9 377.6,372.1 382.1,366.6 386.7,361.3 391.3,356.2 396.1,351.3 401.1,346.6 406.3,342.1 411.8,337.9 417.5,333.9 423.4,330.1 429.4,326.4 435.6,322.9 441.8,319.5 448.0,316.2 454.4,313.0 460.9,310.0 467.6,307.1 474.5,304.3 481.5,301.7 488.9,299.3 496.4,296.9 504.3,294.8 512.5,292.8 521.1,291.0 529.9,289.3 539.1,287.8 548.6,286.4 558.5,285.1 568.6,284.0 579.0,283.0 589.8,282.1 600.7,281.3 607.9,284.5 596.9,285.3 586.2,286.2 575.7,287.2 565.5,288.3 555.7,289.6 546.2,291.0 537.0,292.6 528.1,294.3 519.5,296.1 511.3,298.2 503.4,300.3 495.8,302.7 488.5,305.2 481.5,307.8 474.6,310.6 468.0,313.6 461.5,316.6 455.1,319.8 448.8,323.2 442.7,326.6 436.6,330.2 430.6,333.9 424.7,337.8 419.0,341.9 413.6,346.2 408.4,350.7 403.5,355.4 398.7,360.4 394.1,365.6 389.6,371.0 385.2,376.6 380.9,382.5 377.0,388.7 373.4,395.2 370.3,402.3 367.6,409.7 365.1,417.5 364.5,419.6 364.0,421.8 363.5,424.1 363.3,426.4 363.2,428.9 363.3,431.5 363.9,434.4 364.9,437.5 366.7,441.0 369.4,445.1 373.5,449.9" fill="#0000fe" stroke="#0000fe" stroke-width=".7"/>
<path d="M225.8,373.2L236.1,378.5L246.6,384.0L257.4,389.6L268.4,395.3L279.6,401.1L291.1,407.1L302.8,412.2L303.9,412.5L305.0,412.6M356.4,436.6L357.8,438.4L359.1,439.9L360.5,441.3L361.8,442.5L363.1,443.6L366.1,445.6L369.1,447.4L372.0,449.1L375.0,450.7L378.0,452.3L381.0,453.8L384.0,455.4M243.4,364.9L251.8,369.1L260.3,373.3L268.9,377.7L277.7,382.1L286.6,386.6L295.7,391.1L304.9,395.7L306.1,396.3L307.2,396.8L308.3,397.3L309.4,397.7L310.6,398.0L311.7,398.3L312.8,398.3M350.6,414.1L351.9,416.2L353.2,417.9L354.5,419.2L355.7,420.4L357.0,421.3L358.3,422.2L359.5,423.0L360.8,423.7L362.0,424.4L363.3,425.0L368.6,427.7L373.9,430.4L379.3,433.1L384.7,435.8L390.2,438.6L395.7,441.4L401.3,444.2M260.5,356.9L267.4,360.3L274.5,363.7L281.7,367.2L289.0,370.8L296.4,374.3L303.9,378.0L311.5,381.6L312.6,382.2L313.7,382.7L314.8,383.1L315.9,383.6L317.0,383.9L318.1,384.2M356.1,399.5L357.4,401.4L358.7,402.9L359.9,404.1L361.1,405.1L362.4,406.0L363.6,406.7L364.8,407.4L366.0,408.1L367.3,408.7L368.5,409.3L375.3,412.7L382.2,416.0L389.1,419.4L396.2,422.8L403.3,426.3L410.6,429.8L417.9,433.4M276.9,349.2L282.7,351.9L288.5,354.6L294.4,357.4L300.3,360.2L306.3,363.0L312.4,365.9L318.6,368.7L319.7,369.2L320.7,369.7M362.3,385.6L363.6,387.4L364.8,388.8L366.0,390.0L367.2,391.0L368.4,391.8L369.6,392.5L370.8,393.2L372.0,393.8L373.2,394.4L374.4,395.0L382.5,398.9L390.8,402.7L399.1,406.7L407.6,410.7L416.2,414.7L425.0,418.8L433.8,423.0M292.8,341.7L297.6,343.9L302.4,346.1L307.3,348.3L312.1,350.5L317.1,352.8L322.1,355.0L327.1,357.3M370.1,373.3L371.4,375.0L372.6,376.4L373.8,377.5L374.9,378.5L376.1,379.3L377.3,380.0L378.5,380.6L379.6,381.2L380.8,381.8L382.0,382.3L391.1,386.5L400.4,390.8L409.8,395.1L419.4,399.4L429.2,403.9L439.1,408.4L449.2,413.0M308.2,334.5L312.2,336.2L316.2,338.0L320.2,339.8L324.2,341.6L328.3,343.4L332.4,345.2M379.0,362.2L380.2,363.9L381.4,365.2L382.5,366.3L383.7,367.2L384.9,368.0L386.0,368.6L387.2,369.3L388.3,369.8L389.5,370.4L390.6,370.9L400.6,375.3L410.7,379.8L421.0,384.4L431.4,389.0L442.1,393.7L452.9,398.5L464.0,403.4M323.1,327.5L326.4,328.9L329.7,330.3L333.0,331.7L336.3,333.1M388.3,351.9L389.4,353.5L390.6,354.8L391.7,355.9L392.9,356.8L394.0,357.5L395.2,358.2L396.3,358.8L397.5,359.3L398.6,359.8L399.7,360.4L410.3,364.9L421.1,369.6L432.1,374.3L443.3,379.1L454.7,384.0L466.4,389.0L478.2,394.1M337.6,320.7L340.3,321.8L343.0,322.9M398.1,342.5L399.3,344.1L400.4,345.3L401.5,346.4L402.7,347.2L403.8,347.9L404.9,348.6L406.0,349.1L407.2,349.7L408.3,350.2L409.4,350.7L420.5,355.3L431.9,360.1L443.4,364.9L455.2,369.8L467.2,374.8L479.4,380.0L491.9,385.2M408.9,333.9L410.0,335.5L411.1,336.7L412.3,337.7L413.4,338.6L414.5,339.3L415.6,339.9L416.7,340.4L417.8,341.0L418.9,341.4L420.0,341.9L431.5,346.6L443.2,351.3L455.1,356.2L467.2,361.1L479.6,366.2L492.3,371.3L505.2,376.6M420.5,326.2L421.6,327.7L422.7,329.0L423.8,329.9L424.9,330.8L426.0,331.4L427.1,332.0L428.2,332.6L429.4,333.1L430.5,333.5L431.6,334.0L443.2,338.6L455.0,343.3L467.1,348.1L479.4,353.0L492.0,358.0L504.9,363.0L518.0,368.2M432.7,319.1L433.8,320.6L434.9,321.8L436.0,322.8L437.1,323.6L438.2,324.2L439.3,324.8L440.3,325.3L441.4,325.8L442.5,326.3L443.6,326.7L455.3,331.2L467.2,335.8L479.3,340.5L491.7,345.3L504.3,350.1L517.2,355.1L530.4,360.2M445.2,312.5L446.3,314.0L447.3,315.2L448.4,316.1L449.5,316.9L450.6,317.5L451.7,318.1L452.8,318.6L453.9,319.1L455.0,319.5L456.0,319.9L467.7,324.3L479.5,328.8L491.6,333.3L503.9,338.0L516.4,342.7L529.2,347.5L542.3,352.4M458.1,306.4L459.2,307.9L460.2,309.0L461.3,309.9L462.4,310.7L463.5,311.3L464.5,311.9L465.6,312.4L466.7,312.8L467.8,313.3L468.9,313.7L480.3,317.9L492.0,322.2L503.9,326.6L516.0,331.0L528.4,335.5L541.0,340.2L553.9,344.9M471.6,300.8L472.7,302.3L473.8,303.4L474.8,304.3L475.9,305.1L477.0,305.7L478.0,306.2L479.1,306.7L480.2,307.1L481.3,307.6L482.4,308.0L493.5,312.0L504.9,316.1L516.5,320.2L528.3,324.4L540.3,328.8L552.6,333.1L565.0,337.6M486.0,295.8L487.1,297.2L488.1,298.4L489.2,299.3L490.3,300.0L491.3,300.6L492.4,301.1L493.5,301.6L494.6,302.0L495.6,302.4L496.7,302.8L507.4,306.6L518.4,310.4L529.5,314.3L540.8,318.3L552.2,322.3L564.0,326.4L575.9,330.6M501.5,291.4L502.5,292.8L503.6,293.9L504.6,294.8L505.7,295.5L506.8,296.1L507.8,296.7L508.9,297.1L510.0,297.5L511.1,297.9L512.2,298.3L522.3,301.8L532.5,305.3L542.9,308.9L553.5,312.5L564.3,316.2L575.2,319.9L586.4,323.7M518.2,287.6L519.2,289.0L520.3,290.1L521.4,291.0L522.4,291.7L523.5,292.3L524.6,292.8L525.7,293.3L526.7,293.7L527.8,294.1L528.9,294.5L538.2,297.6L547.5,300.7L557.0,303.9L566.7,307.1L576.5,310.4L586.4,313.7L596.5,317.1M536.2,284.5L537.3,285.9L538.3,286.9L539.4,287.8L540.4,288.5L541.5,289.1L542.6,289.6L543.7,290.1L544.8,290.5L545.9,290.9L547.0,291.2L555.1,293.9L563.4,296.6L571.8,299.4L580.3,302.2L588.9,305.0L597.6,307.8L606.4,310.7M555.5,281.9L556.6,283.2L557.6,284.3L558.7,285.2L559.8,285.9L560.8,286.4L561.9,286.9L563.0,287.4L564.1,287.8L565.2,288.2L566.3,288.6L573.2,290.8L580.1,293.0L587.1,295.3L594.2,297.5L601.4,299.8L608.6,302.1L615.9,304.5M576.0,279.8L577.1,281.1L578.1,282.2L579.2,283.0L580.3,283.7L581.4,284.3L582.5,284.8L583.6,285.2L584.7,285.6L585.8,286.0L586.9,286.4L592.2,288.1L597.6,289.8L603.1,291.5L608.5,293.2L614.1,294.9L619.6,296.7L625.2,298.4M597.7,278.1L598.7,279.4L599.8,280.5L600.8,281.3L601.9,282.0L603.0,282.6L604.1,283.1L605.2,283.5L606.4,283.9L607.5,284.3L608.6,284.7L612.2,285.8L615.8,286.9L619.5,288.0L623.1,289.2L626.8,290.3L630.5,291.4L634.2,292.6M384.0,455.4L387.0,453.5L389.9,451.6L392.8,449.7L395.7,447.8L398.6,445.9L401.4,444.1L404.3,442.2L407.1,440.4L409.9,438.6L412.7,436.8L415.4,435.0L418.2,433.2L420.9,431.4L423.6,429.7L426.3,427.9L429.0,426.2L431.6,424.5L434.2,422.7L436.9,421.0L439.5,419.3L442.0,417.7L444.6,416.0L447.2,414.3L449.7,412.7L452.2,411.0L454.7,409.4L457.2,407.8L459.7,406.2L462.1,404.6L464.6,403.0L467.0,401.4L469.4,399.8L471.8,398.3L474.2,396.7L476.6,395.2L478.9,393.7L481.3,392.1L483.6,390.6L485.9,389.1L488.2,387.6L490.5,386.1L492.7,384.7L495.0,383.2L497.2,381.7L499.5,380.3L501.7,378.8L503.9,377.4L506.1,376.0L508.3,374.6L510.4,373.2L512.6,371.8L514.7,370.4L516.8,369.0L518.9,367.6L521.0,366.2L523.1,364.9L525.2,363.5L527.3,362.2L529.3,360.9L531.4,359.5L533.4,358.2L535.4,356.9L537.4,355.6L539.4,354.3L541.4,353.0L543.4,351.7L545.3,350.4L547.3,349.2L549.2,347.9L551.2,346.6L553.1,345.4L555.0,344.1L556.9,342.9L558.8,341.7L560.7,340.5L562.5,339.2L564.4,338.0L566.2,336.8L568.1,335.6L569.9,334.4L571.7,333.3L573.5,332.1L575.3,330.9L577.1,329.8L578.9,328.6L580.7,327.4L582.4,326.3L584.2,325.2L585.9,324.0L587.7,322.9L589.4,321.8L591.1,320.7L592.8,319.5L594.5,318.4L596.2,317.3L597.9,316.3L599.5,315.2L601.2,314.1L602.9,313.0L604.5,311.9L606.1,310.9L607.8,309.8L609.4,308.8L611.0,307.7L612.6,306.7L614.2,305.6L615.8,304.6L617.4,303.6L618.9,302.5L620.5,301.5L622.1,300.5L623.6,299.5L625.1,298.5L626.7,297.5L628.2,296.5L629.7,295.5L631.2,294.5L632.7,293.6L634.2,292.6M374.9,450.6L377.9,448.8L380.8,446.9L383.7,445.0L386.6,443.2L389.5,441.3L392.4,439.5L395.2,437.7L398.0,435.9L400.8,434.1L403.6,432.3L406.4,430.6L409.1,428.8L411.9,427.1L414.6,425.3L417.3,423.6L420.0,421.9L422.6,420.2L425.3,418.5L427.9,416.8L430.5,415.2L433.1,413.5L435.7,411.9L438.2,410.2L440.8,408.6L443.3,407.0L445.8,405.4L448.3,403.8L450.8,402.2L453.3,400.6L455.7,399.1L458.1,397.5L460.6,396.0L463.0,394.4L465.4,392.9L467.7,391.4L470.1,389.9L472.5,388.4L474.8,386.9L477.1,385.4L479.4,383.9L481.7,382.5L484.0,381.0L486.3,379.6L488.5,378.1L490.7,376.7L493.0,375.3L495.2,373.9L497.4,372.5L499.6,371.1L501.7,369.7L503.9,368.3L506.1,366.9L508.2,365.6L510.3,364.2L512.4,362.9L514.5,361.5L516.6,360.2L518.7,358.9L520.8,357.5L522.8,356.2L524.9,354.9L526.9,353.6L528.9,352.3L530.9,351.1L532.9,349.8L534.9,348.5L536.9,347.3L538.8,346.0L540.8,344.8L542.7,343.5L544.6,342.3L546.6,341.1L548.5,339.8L550.4,338.6L552.3,337.4L554.1,336.2L556.0,335.0L557.9,333.8L559.7,332.7L561.6,331.5L563.4,330.3L565.2,329.2L567.0,328.0L568.8,326.9L570.6,325.7L572.4,324.6L574.2,323.4L575.9,322.3L577.7,321.2L579.4,320.1L581.1,319.0L582.9,317.9L584.6,316.8L586.3,315.7L588.0,314.6L589.7,313.5L591.4,312.5L593.0,311.4L594.7,310.3L596.4,309.3L598.0,308.2L599.7,307.2L601.3,306.1L602.9,305.1L604.5,304.1L606.1,303.0L607.7,302.0L609.3,301.0L610.9,300.0L612.5,299.0L614.0,298.0L615.6,297.0L617.2,296.0L618.7,295.0L620.2,294.0L621.8,293.0L623.3,292.1L624.8,291.1L626.3,290.1M365.9,445.5L368.9,444.1L371.8,442.3L374.8,440.5L377.7,438.6L380.6,436.8L383.4,435.0L386.3,433.2L389.1,431.5L391.9,429.7L394.7,428.0L397.5,426.2L400.2,424.5L403.0,422.8L405.7,421.1L408.4,419.4L411.1,417.7L413.8,416.0L416.4,414.4L419.1,412.7L421.7,411.1L424.3,409.4L426.9,407.8L429.4,406.2L432.0,404.6L434.5,403.0L437.0,401.4L439.5,399.9L442.0,398.3L444.5,396.8L447.0,395.2L449.4,393.7L451.8,392.2L454.3,390.6L456.7,389.1L459.1,387.6L461.4,386.2L463.8,384.7L466.1,383.2L468.5,381.7L470.8,380.3L473.1,378.9L475.4,377.4L477.6,376.0L479.9,374.6L482.1,373.2L484.4,371.8L486.6,370.4L488.8,369.0L491.0,367.6L493.2,366.2L495.4,364.9L497.5,363.5L499.7,362.2L501.8,360.8L503.9,359.5L506.0,358.2L508.1,356.9L510.2,355.6L512.3,354.3L514.4,353.0L516.4,351.7L518.5,350.4L520.5,349.1L522.5,347.9L524.5,346.6L526.5,345.4L528.5,344.1L530.5,342.9L532.4,341.7L534.4,340.4L536.3,339.2L538.2,338.0L540.2,336.8L542.1,335.6L544.0,334.4L545.9,333.2L547.7,332.1L549.6,330.9L551.5,329.7L553.3,328.6L555.1,327.4L557.0,326.3L558.8,325.1L560.6,324.0L562.4,322.9L564.2,321.7L566.0,320.6L567.8,319.5L569.5,318.4L571.3,317.3L573.0,316.2L574.8,315.1L576.5,314.0L578.2,313.0L579.9,311.9L581.6,310.8L583.3,309.8L585.0,308.7L586.7,307.7L588.3,306.6L590.0,305.6L591.6,304.5L593.3,303.5L594.9,302.5L596.5,301.5L598.2,300.5L599.8,299.5L601.4,298.4L603.0,297.4L604.5,296.5L606.1,295.5L607.7,294.5L609.3,293.5L610.8,292.5L612.4,291.6L613.9,290.6L615.4,289.6L617.0,288.7L618.5,287.7M356.8,437.2L360.0,438.8L363.0,437.6L365.9,435.9L368.9,434.2L371.8,432.4L374.6,430.6L377.5,428.9L380.3,427.1L383.1,425.4L385.9,423.7L388.7,421.9L391.5,420.2L394.2,418.6L397.0,416.9L399.7,415.2L402.4,413.5L405.0,411.9L407.7,410.3L410.3,408.6L413.0,407.0L415.6,405.4L418.2,403.8L420.8,402.2L423.3,400.7L425.9,399.1L428.4,397.5L430.9,396.0L433.4,394.4L435.9,392.9L438.4,391.4L440.8,389.9L443.3,388.4L445.7,386.9L448.1,385.4L450.5,383.9L452.9,382.5L455.2,381.0L457.6,379.6L459.9,378.1L462.2,376.7L464.6,375.3L466.9,373.9L469.1,372.5L471.4,371.1L473.7,369.7L475.9,368.3L478.1,366.9L480.4,365.6L482.6,364.2L484.8,362.8L486.9,361.5L489.1,360.2L491.3,358.8L493.4,357.5L495.5,356.2L497.7,354.9L499.8,353.6L501.9,352.3L503.9,351.0L506.0,349.8L508.1,348.5L510.1,347.2L512.2,346.0L514.2,344.7L516.2,343.5L518.2,342.3L520.2,341.0L522.2,339.8L524.2,338.6L526.1,337.4L528.1,336.2L530.0,335.0L531.9,333.8L533.9,332.6L535.8,331.5L537.7,330.3L539.6,329.1L541.4,328.0L543.3,326.8L545.2,325.7L547.0,324.5L548.9,323.4L550.7,322.3L552.5,321.2L554.3,320.0L556.1,318.9L557.9,317.8L559.7,316.7L561.5,315.6L563.2,314.6L565.0,313.5L566.7,312.4L568.5,311.3L570.2,310.3L571.9,309.2L573.6,308.2L575.3,307.1L577.0,306.1L578.7,305.0L580.4,304.0L582.1,303.0L583.7,302.0L585.4,300.9L587.0,299.9L588.6,298.9L590.3,297.9L591.9,296.9L593.5,295.9L595.1,294.9L596.7,294.0L598.3,293.0L599.9,292.0L601.4,291.1L603.0,290.1L604.6,289.1L606.1,288.2L607.7,287.2L609.2,286.3L610.7,285.3M350.9,427.9L354.2,431.2L357.2,430.9L360.2,429.6L363.1,428.0L366.0,426.3L368.8,424.5L371.7,422.8L374.5,421.1L377.3,419.4L380.1,417.7L382.9,416.1L385.6,414.4L388.4,412.7L391.1,411.1L393.8,409.5L396.5,407.8L399.1,406.2L401.8,404.6L404.4,403.0L407.0,401.5L409.6,399.9L412.2,398.3L414.8,396.8L417.3,395.2L419.9,393.7L422.4,392.2L424.9,390.7L427.4,389.1L429.9,387.6L432.3,386.2L434.8,384.7L437.2,383.2L439.6,381.8L442.0,380.3L444.4,378.9L446.8,377.4L449.2,376.0L451.5,374.6L453.8,373.2L456.2,371.8L458.5,370.4L460.8,369.0L463.0,367.6L465.3,366.2L467.6,364.9L469.8,363.5L472.0,362.2L474.2,360.8L476.4,359.5L478.6,358.2L480.8,356.9L483.0,355.6L485.1,354.3L487.3,353.0L489.4,351.7L491.5,350.4L493.6,349.1L495.7,347.9L497.8,346.6L499.9,345.3L501.9,344.1L504.0,342.9L506.0,341.6L508.0,340.4L510.0,339.2L512.0,338.0L514.0,336.8L516.0,335.6L518.0,334.4L520.0,333.2L521.9,332.0L523.8,330.9L525.8,329.7L527.7,328.5L529.6,327.4L531.5,326.2L533.4,325.1L535.3,324.0L537.1,322.8L539.0,321.7L540.8,320.6L542.7,319.5L544.5,318.4L546.3,317.3L548.1,316.2L549.9,315.1L551.7,314.0L553.5,312.9L555.3,311.9L557.1,310.8L558.8,309.7L560.6,308.7L562.3,307.6L564.0,306.6L565.7,305.5L567.5,304.5L569.2,303.5L570.9,302.4L572.5,301.4L574.2,300.4L575.9,299.4L577.5,298.4L579.2,297.4L580.8,296.4L582.5,295.4L584.1,294.4L585.7,293.5L587.3,292.5L589.0,291.5L590.5,290.5L592.1,289.6L593.7,288.6L595.3,287.7L596.9,286.7L598.4,285.8L600.0,284.8L601.5,283.8L603.1,282.6M351.4,422.3L354.5,422.4L357.4,421.5L360.3,420.1L363.2,418.5L366.0,416.9L368.8,415.2L371.6,413.6L374.4,411.9L377.1,410.3L379.9,408.7L382.6,407.0L385.3,405.4L388.0,403.8L390.7,402.3L393.3,400.7L396.0,399.1L398.6,397.6L401.2,396.0L403.8,394.5L406.4,392.9L408.9,391.4L411.5,389.9L414.0,388.4L416.5,386.9L419.0,385.4L421.5,383.9L424.0,382.5L426.4,381.0L428.9,379.6L431.3,378.1L433.7,376.7L436.1,375.3L438.5,373.9L440.9,372.5L443.2,371.1L445.5,369.7L447.9,368.3L450.2,366.9L452.5,365.5L454.8,364.2L457.1,362.8L459.3,361.5L461.6,360.2L463.8,358.8L466.0,357.5L468.2,356.2L470.4,354.9L472.6,353.6L474.8,352.3L477.0,351.0L479.1,349.7L481.2,348.5L483.4,347.2L485.5,346.0L487.6,344.7L489.7,343.5L491.8,342.2L493.8,341.0L495.9,339.8L497.9,338.6L500.0,337.4L502.0,336.2L504.0,335.0L506.0,333.8L508.0,332.6L510.0,331.4L511.9,330.3L513.9,329.1L515.8,327.9L517.8,326.8L519.7,325.6L521.6,324.5L523.5,323.4L525.4,322.2L527.3,321.1L529.2,320.0L531.1,318.9L532.9,317.8L534.8,316.7L536.6,315.6L538.4,314.5L540.3,313.4L542.1,312.4L543.9,311.3L545.7,310.2L547.4,309.2L549.2,308.1L551.0,307.1L552.7,306.0L554.5,305.0L556.2,304.0L558.0,302.9L559.7,301.9L561.4,300.9L563.1,299.9L564.8,298.9L566.5,297.9L568.2,296.9L569.8,295.9L571.5,294.9L573.1,293.9L574.8,292.9L576.4,292.0L578.1,291.0L579.7,290.0L581.3,289.1L582.9,288.1L584.5,287.2L586.1,286.2L587.7,285.2L589.3,284.1L590.9,282.8L592.5,281.1L594.1,278.6M351.6,411.9L354.6,412.2L357.5,411.7L360.4,410.6L363.2,409.3L366.0,407.8L368.8,406.2L371.5,404.6L374.2,403.1L377.0,401.5L379.7,399.9L382.3,398.3L385.0,396.8L387.6,395.2L390.3,393.7L392.9,392.2L395.5,390.7L398.1,389.2L400.6,387.7L403.2,386.2L405.7,384.7L408.3,383.2L410.8,381.8L413.2,380.3L415.7,378.9L418.2,377.4L420.6,376.0L423.1,374.6L425.5,373.2L427.9,371.8L430.3,370.4L432.7,369.0L435.0,367.6L437.4,366.2L439.7,364.9L442.0,363.5L444.3,362.2L446.6,360.8L448.9,359.5L451.2,358.2L453.4,356.9L455.7,355.5L457.9,354.2L460.1,352.9L462.3,351.7L464.5,350.4L466.7,349.1L468.9,347.8L471.0,346.6L473.2,345.3L475.3,344.1L477.4,342.8L479.6,341.6L481.7,340.4L483.7,339.2L485.8,338.0L487.9,336.8L489.9,335.6L492.0,334.4L494.0,333.2L496.0,332.0L498.0,330.8L500.0,329.7L502.0,328.5L504.0,327.3L506.0,326.2L507.9,325.1L509.9,323.9L511.8,322.8L513.7,321.7L515.7,320.6L517.6,319.4L519.5,318.3L521.3,317.2L523.2,316.1L525.1,315.0L526.9,314.0L528.8,312.9L530.6,311.8L532.5,310.7L534.3,309.7L536.1,308.6L537.9,307.6L539.7,306.5L541.5,305.5L543.2,304.5L545.0,303.4L546.8,302.4L548.5,301.4L550.3,300.4L552.0,299.4L553.7,298.4L555.4,297.4L557.1,296.4L558.8,295.4L560.5,294.4L562.2,293.4L563.9,292.4L565.5,291.5L567.2,290.5L568.8,289.5L570.5,288.6L572.1,287.6L573.7,286.6L575.3,285.5L577.0,284.3L578.6,282.8L580.3,280.6L582.0,277.5M354.7,400.8L357.6,401.3L360.4,400.9L363.2,400.0L366.0,398.8L368.7,397.4L371.4,395.9L374.1,394.4L376.8,392.9L379.4,391.4L382.1,389.9L384.7,388.4L387.3,386.9L389.9,385.4L392.5,384.0L395.0,382.5L397.6,381.0L400.1,379.6L402.6,378.1L405.1,376.7L407.6,375.3L410.1,373.9L412.5,372.5L415.0,371.1L417.4,369.7L419.8,368.3L422.2,366.9L424.6,365.5L426.9,364.2L429.3,362.8L431.6,361.5L434.0,360.2L436.3,358.8L438.6,357.5L440.9,356.2L443.2,354.9L445.4,353.6L447.7,352.3L449.9,351.0L452.1,349.7L454.4,348.5L456.6,347.2L458.8,345.9L460.9,344.7L463.1,343.5L465.2,342.2L467.4,341.0L469.5,339.8L471.6,338.6L473.7,337.3L475.8,336.1L477.9,334.9L480.0,333.8L482.1,332.6L484.1,331.4L486.1,330.2L488.2,329.1L490.2,327.9L492.2,326.8L494.2,325.6L496.2,324.5L498.2,323.3L500.1,322.2L502.1,321.1L504.0,320.0L506.0,318.9L507.9,317.8L509.8,316.7L511.7,315.6L513.6,314.5L515.5,313.4L517.4,312.3L519.2,311.3L521.1,310.2L522.9,309.1L524.8,308.1L526.6,307.0L528.4,306.0L530.2,304.9L532.0,303.9L533.8,302.9L535.6,301.9L537.4,300.8L539.1,299.8L540.9,298.8L542.6,297.8L544.4,296.8L546.1,295.8L547.8,294.8L549.5,293.9L551.3,292.9L552.9,291.9L554.6,290.9L556.3,290.0L558.0,289.0L559.7,288.0L561.3,286.9L563.0,285.6L564.7,284.1L566.4,282.1L568.1,279.2M360.4,390.0L363.2,390.1L366.0,389.5L368.7,388.5L371.3,387.3L374.0,386.0L376.6,384.6L379.2,383.2L381.8,381.7L384.4,380.3L387.0,378.9L389.5,377.4L392.1,376.0L394.6,374.6L397.1,373.2L399.6,371.8L402.1,370.4L404.5,369.0L407.0,367.6L409.4,366.2L411.8,364.9L414.2,363.5L416.6,362.2L419.0,360.8L421.3,359.5L423.7,358.2L426.0,356.8L428.4,355.5L430.7,354.2L433.0,352.9L435.2,351.6L437.5,350.4L439.8,349.1L442.0,347.8L444.3,346.6L446.5,345.3L448.7,344.1L450.9,342.8L453.1,341.6L455.2,340.4L457.4,339.1L459.6,337.9L461.7,336.7L463.8,335.5L465.9,334.3L468.0,333.2L470.1,332.0L472.2,330.8L474.3,329.6L476.3,328.5L478.4,327.3L480.4,326.2L482.4,325.0L484.5,323.9L486.5,322.8L488.5,321.6L490.4,320.5L492.4,319.4L494.4,318.3L496.3,317.2L498.3,316.1L500.2,315.0L502.1,313.9L504.0,312.8L505.9,311.8L507.8,310.7L509.7,309.6L511.6,308.6L513.5,307.5L515.3,306.5L517.2,305.4L519.0,304.4L520.8,303.4L522.6,302.4L524.5,301.3L526.3,300.3L528.0,299.3L529.8,298.3L531.6,297.3L533.4,296.3L535.1,295.3L536.9,294.3L538.6,293.3L540.3,292.4L542.1,291.4L543.8,290.3L545.5,289.3L547.2,288.1L548.9,286.8L550.6,285.1L552.4,283.0L554.1,280.1M365.8,378.1L368.5,378.2L371.2,377.7L373.8,377.0L376.4,376.0L379.0,374.8L381.6,373.6L384.1,372.3L386.7,370.9L389.2,369.6L391.7,368.2L394.2,366.9L396.6,365.5L399.1,364.2L401.5,362.8L403.9,361.5L406.3,360.1L408.7,358.8L411.1,357.5L413.5,356.2L415.9,354.9L418.2,353.6L420.5,352.3L422.8,351.0L425.1,349.7L427.4,348.4L429.7,347.2L432.0,345.9L434.2,344.7L436.5,343.4L438.7,342.2L440.9,341.0L443.1,339.7L445.3,338.5L447.5,337.3L449.7,336.1L451.8,334.9L454.0,333.7L456.1,332.5L458.2,331.4L460.3,330.2L462.4,329.0L464.5,327.9L466.6,326.7L468.7,325.6L470.7,324.4L472.8,323.3L474.8,322.2L476.8,321.1L478.8,319.9L480.8,318.8L482.8,317.7L484.8,316.6L486.8,315.5L488.7,314.4L490.7,313.4L492.6,312.3L494.6,311.2L496.5,310.1L498.4,309.1L500.3,308.0L502.2,307.0L504.1,305.9L505.9,304.9L507.8,303.9L509.6,302.8L511.5,301.8L513.3,300.8L515.2,299.8L517.0,298.8L518.8,297.8L520.6,296.8L522.4,295.8L524.2,294.8L525.9,293.7L527.7,292.7L529.5,291.6L531.2,290.4L533.0,289.1L534.7,287.5L536.5,285.6L538.3,283.0M298.9,410.9L301.9,409.2L304.9,407.4L307.8,405.4L310.7,403.0M376.1,365.0L378.7,364.8L381.3,364.2L383.8,363.5L386.3,362.6L388.8,361.5L391.3,360.4L393.7,359.2L396.2,357.9L398.6,356.7L401.0,355.4L403.4,354.2L405.8,352.9L408.1,351.6L410.5,350.3L412.8,349.1L415.1,347.8L417.4,346.5L419.7,345.3L422.0,344.0L424.3,342.8L426.5,341.6L428.8,340.3L431.0,339.1L433.3,337.9L435.5,336.7L437.7,335.5L439.8,334.3L442.0,333.1L444.2,331.9L446.3,330.8L448.5,329.6L450.6,328.4L452.7,327.3L454.8,326.1L456.9,325.0L459.0,323.9L461.1,322.7L463.1,321.6L465.2,320.5L467.2,319.4L469.3,318.3L471.3,317.2L473.3,316.1L475.3,315.0L477.3,313.9L479.3,312.8L481.2,311.7L483.2,310.7L485.1,309.6L487.1,308.5L489.0,307.5L490.9,306.4L492.8,305.4L494.7,304.4L496.6,303.3L498.5,302.3L500.4,301.3L502.2,300.2L504.1,299.2L505.9,298.1L507.8,297.1L509.6,296.0L511.4,294.9L513.2,293.7L515.0,292.4L516.8,290.9L518.6,289.1L520.4,287.0M291.2,407.1L294.2,405.5L297.1,403.9L300.1,402.3L303.0,400.7L306.0,399.0L308.9,397.3L311.7,395.5L314.6,393.4L317.3,390.9M388.3,350.7L390.8,350.4L393.2,349.9L395.7,349.2L398.1,348.3L400.4,347.4L402.8,346.4L405.2,345.3L407.5,344.2L409.8,343.0L412.1,341.9L414.4,340.7L416.7,339.5L419.0,338.3L421.2,337.1L423.4,336.0L425.7,334.8L427.9,333.6L430.1,332.4L432.3,331.3L434.5,330.1L436.6,328.9L438.8,327.8L441.0,326.6L443.1,325.5L445.2,324.3L447.3,323.2L449.4,322.1L451.5,321.0L453.6,319.8L455.7,318.7L457.7,317.6L459.8,316.5L461.8,315.4L463.8,314.3L465.8,313.2L467.9,312.2L469.8,311.1L471.8,310.0L473.8,308.9L475.8,307.8L477.7,306.8L479.7,305.7L481.6,304.6L483.5,303.5L485.5,302.4L487.4,301.2L489.3,300.1L491.2,298.9L493.0,297.6L494.9,296.2L496.8,294.7L498.7,293.0L500.5,291.2M283.5,403.1L286.5,401.5L289.5,400.0L292.4,398.4L295.4,396.8L298.3,395.3L301.2,393.7L304.1,392.2L307.0,390.7L309.8,389.1L312.7,387.5L315.5,385.8L318.2,384.0M409.1,332.5L411.4,331.7L413.6,331.0L415.9,330.1L418.1,329.2L420.4,328.2L422.6,327.3L424.8,326.2L427.0,325.2L429.2,324.2L431.3,323.1L433.5,322.0L435.6,321.0L437.8,319.9L439.9,318.8L442.0,317.7L444.1,316.6L446.2,315.5L448.3,314.3L450.3,313.2L452.4,312.1L454.4,310.9L456.5,309.7L458.5,308.5L460.5,307.3L462.5,306.0L464.5,304.7L466.5,303.4L468.5,302.0L470.4,300.5M275.9,399.2L278.9,397.6L281.9,396.1L284.8,394.5L287.8,393.0L290.7,391.5L293.6,390.0L296.5,388.4L299.4,386.9L302.3,385.5L305.1,384.0L307.9,382.5L310.8,381.0L313.5,379.6L316.3,378.1L319.1,376.5M268.4,395.3L271.4,393.8L274.4,392.2L277.4,390.7L280.3,389.2L283.3,387.7L286.2,386.2L289.1,384.7L292.0,383.2L294.8,381.8L297.7,380.3L300.5,378.9L303.3,377.4L306.1,376.0L308.9,374.6L311.6,373.2L314.4,371.7L317.1,370.3L319.8,368.9L322.5,367.5M261.1,391.5L264.1,390.0L267.1,388.5L270.0,387.0L273.0,385.5L275.9,384.0L278.8,382.5L281.7,381.1L284.6,379.6L287.5,378.2L290.3,376.7L293.2,375.3L296.0,373.9L298.8,372.5L301.5,371.1L304.3,369.7L307.1,368.3L309.8,366.9L312.5,365.5L315.2,364.2L317.9,362.8L320.6,361.4L323.2,360.1M253.8,387.7L256.8,386.2L259.8,384.7L262.8,383.3L265.7,381.8L268.7,380.3L271.6,378.9L274.5,377.4L277.4,376.0L280.2,374.6L283.1,373.2L285.9,371.8L288.7,370.4L291.5,369.0L294.3,367.6L297.1,366.2L299.8,364.8L302.6,363.5L305.3,362.1L308.0,360.8L310.7,359.4L313.3,358.1L316.0,356.8L318.6,355.5L321.3,354.2L323.9,352.9L326.5,351.6M246.7,384.0L249.7,382.5L252.6,381.1L255.6,379.6L258.6,378.2L261.5,376.7L264.4,375.3L267.3,373.9L270.2,372.5L273.1,371.0L275.9,369.7L278.8,368.3L281.6,366.9L284.4,365.5L287.2,364.1L289.9,362.8L292.7,361.4L295.4,360.1L298.1,358.8L300.9,357.4L303.5,356.1L306.2,354.8L308.9,353.5L311.5,352.2L314.2,350.9L316.8,349.6L319.4,348.4L322.0,347.1L324.5,345.8L327.1,344.6L329.6,343.3L332.2,342.1M239.6,380.3L242.6,378.9L245.6,377.4L248.6,376.0L251.5,374.6L254.5,373.2L257.4,371.7L260.3,370.3L263.2,369.0L266.0,367.6L268.9,366.2L271.7,364.8L274.5,363.5L277.3,362.1L280.1,360.8L282.9,359.4L285.6,358.1L288.4,356.8L291.1,355.5L293.8,354.2L296.5,352.9L299.2,351.6L301.8,350.3L304.5,349.0L307.1,347.7L309.7,346.5L312.3,345.2L314.9,344.0L317.5,342.7L320.1,341.5L322.6,340.2L325.1,339.0L327.7,337.8L330.2,336.6L332.7,335.4L335.1,334.2M232.7,376.7L235.7,375.3L238.6,373.9L241.6,372.5L244.6,371.0L247.5,369.6L250.4,368.3L253.3,366.9L256.2,365.5L259.1,364.1L261.9,362.8L264.8,361.4L267.6,360.1L270.4,358.8L273.2,357.4L275.9,356.1L278.7,354.8L281.4,353.5L284.2,352.2L286.9,350.9L289.6,349.6L292.2,348.4L294.9,347.1L297.6,345.8L300.2,344.6L302.8,343.3L305.4,342.1L308.0,340.8L310.6,339.6L313.2,338.4L315.7,337.2L318.2,336.0L320.8,334.8L323.3,333.6L325.8,332.4L328.2,331.2L330.7,330.0L333.2,328.9L335.6,327.7L338.0,326.6L340.4,325.4M225.8,373.2L228.8,371.7L231.8,370.3L234.8,369.0L237.7,367.6L240.7,366.2L243.6,364.8L246.5,363.5L249.4,362.1L252.2,360.8L255.1,359.4L257.9,358.1L260.7,356.8L263.5,355.4L266.3,354.1L269.1,352.8L271.9,351.5L274.6,350.3L277.3,349.0L280.0,347.7L282.7,346.4L285.4,345.2L288.1,343.9L290.7,342.7L293.4,341.5L296.0,340.2L298.6,339.0L301.2,337.8L303.8,336.6L306.3,335.4L308.9,334.2L311.4,333.0L313.9,331.8L316.4,330.6L318.9,329.4L321.4,328.3L323.9,327.1L326.3,326.0L328.8,324.8L331.2,323.7L333.6,322.5L336.0,321.4L338.4,320.3L340.8,319.2L343.2,318.1L345.5,317.0L347.9,315.9" fill="none" stroke="#404058" stroke-opacity=".62" stroke-width="1"/><path d="M325.2,362.0L326.4,361.6L327.6,362.2L329.0,363.7L330.4,366.2L331.9,369.5L333.4,373.5L335.0,378.2L336.6,383.2L338.3,388.6L339.9,394.0L341.5,399.4L343.1,404.7L344.7,409.8L346.3,414.5L347.8,418.8L349.3,422.8L350.8,426.3L352.2,429.4L353.6,432.2L355.0,434.5L356.4,436.6M327.0,350.3L328.1,349.3L329.3,349.9L330.7,351.9L332.1,355.4L333.7,360.0L335.3,365.5L336.9,371.5L338.5,377.9L340.2,384.2L341.8,390.2L343.4,395.7L344.9,400.6L346.4,404.9L347.8,408.6L349.2,411.6L350.6,414.1M333.3,337.6L334.4,336.6L335.6,337.1L336.9,339.2L338.3,342.6L339.8,347.2L341.4,352.7L343.0,358.7L344.6,365.0L346.1,371.2L347.7,377.0L349.2,382.3L350.7,387.0L352.1,391.1L353.5,394.5L354.8,397.3L356.1,399.5M339.3,327.7L340.3,325.3L341.4,324.4L342.5,324.8L343.8,326.8L345.2,330.2L346.6,334.7L348.1,340.0L349.6,345.9L351.2,352.1L352.7,358.1L354.2,363.8L355.6,368.9L357.0,373.5L358.4,377.4L359.8,380.7L361.1,383.4L362.3,385.6M347.8,316.7L348.8,314.4L349.8,313.4L351.0,313.9L352.2,315.8L353.5,319.1L354.9,323.5L356.4,328.7L357.8,334.5L359.3,340.5L360.8,346.4L362.2,351.9L363.6,357.0L365.0,361.5L366.3,365.3L367.6,368.5L368.9,371.2L370.1,373.3M357.2,306.8L358.2,304.5L359.3,303.5L360.4,304.0L361.6,305.8L362.9,309.0L364.3,313.4L365.6,318.5L367.1,324.2L368.5,330.0L369.9,335.8L371.3,341.2L372.7,346.2L374.0,350.6L375.3,354.4L376.5,357.5L377.8,360.1L379.0,362.2M367.1,297.6L368.1,295.4L369.1,294.4L370.2,294.8L371.4,296.7L372.7,299.8L374.0,304.0L375.3,309.1L376.7,314.6L378.1,320.4L379.4,326.0L380.8,331.4L382.1,336.3L383.4,340.6L384.6,344.2L385.9,347.3L387.1,349.9L388.3,351.9M377.5,289.2L378.4,287.0L379.5,286.0L380.6,286.4L381.8,288.2L383.0,291.3L384.3,295.4L385.6,300.4L386.9,305.8L388.2,311.5L389.5,317.1L390.8,322.3L392.1,327.1L393.3,331.3L394.6,335.0L395.8,338.0L397.0,340.5L398.1,342.5M388.7,281.6L389.7,279.4L390.7,278.4L391.8,278.8L393.0,280.6L394.2,283.6L395.4,287.7L396.7,292.6L398.0,297.9L399.2,303.5L400.5,309.0L401.8,314.1L403.0,318.8L404.2,323.0L405.4,326.6L406.6,329.5L407.7,332.0L408.9,333.9M401.8,272.6L402.8,271.6L403.9,272.0L405.1,273.7L406.2,276.7L407.4,280.7L408.7,285.5L409.9,290.8L411.1,296.2L412.3,301.6L413.6,306.7L414.8,311.4L415.9,315.5L417.1,319.0L418.2,321.9L419.4,324.3L420.5,326.2M414.4,266.3L415.5,265.3L416.5,265.7L417.7,267.4L418.8,270.3L420.0,274.3L421.2,279.0L422.3,284.2L423.5,289.6L424.7,294.9L425.9,299.9L427.0,304.5L428.2,308.5L429.3,312.0L430.5,314.9L431.6,317.2L432.7,319.1M427.3,260.4L428.4,259.5L429.5,259.8L430.6,261.5L431.7,264.4L432.8,268.3L434.0,272.9L435.1,278.1L436.3,283.4L437.4,288.6L438.5,293.6L439.7,298.1L440.8,302.1L441.9,305.5L443.0,308.3L444.1,310.6L445.2,312.5M440.6,255.0L441.7,254.1L442.8,254.4L443.9,256.1L445.0,258.9L446.1,262.7L447.2,267.3L448.3,272.4L449.4,277.7L450.5,282.8L451.6,287.7L452.7,292.2L453.8,296.1L454.8,299.5L455.9,302.3L457.0,304.6L458.1,306.4M454.6,250.1L455.6,249.1L456.7,249.5L457.8,251.1L458.9,253.9L459.9,257.7L461.0,262.2L462.1,267.3L463.1,272.4L464.2,277.6L465.3,282.4L466.3,286.8L467.4,290.7L468.4,294.0L469.5,296.7L470.6,299.0L471.6,300.8M469.3,245.7L470.4,244.7L471.5,245.1L472.5,246.7L473.6,249.4L474.6,253.2L475.7,257.7L476.7,262.6L477.7,267.8L478.8,272.8L479.8,277.6L480.8,282.0L481.8,285.8L482.9,289.1L483.9,291.8L485.0,294.0L486.0,295.8M485.1,241.8L486.2,240.9L487.3,241.2L488.4,242.8L489.4,245.5L490.4,249.2L491.4,253.7L492.4,258.6L493.4,263.6L494.4,268.7L495.4,273.4L496.4,277.7L497.4,281.5L498.4,284.7L499.4,287.4L500.4,289.6L501.5,291.4M502.2,238.5L503.3,237.5L504.4,237.9L505.4,239.4L506.5,242.1L507.4,245.8L508.4,250.2L509.4,255.1L510.3,260.1L511.3,265.1L512.2,269.8L513.2,274.1L514.2,277.8L515.1,281.0L516.2,283.7L517.2,285.9L518.2,287.6M520.6,235.7L521.7,234.8L522.8,235.1L523.8,236.6L524.8,239.3L525.8,243.0L526.7,247.4L527.6,252.2L528.5,257.2L529.5,262.1L530.4,266.8L531.3,271.0L532.2,274.7L533.2,277.9L534.2,280.6L535.2,282.7L536.2,284.5M540.2,233.4L541.3,232.5L542.4,232.8L543.4,234.3L544.4,237.0L545.4,240.6L546.3,245.0L547.2,249.8L548.0,254.7L548.9,259.6L549.8,264.3L550.7,268.5L551.6,272.2L552.5,275.4L553.5,278.0L554.5,280.1L555.5,281.9M561.0,231.6L562.2,230.7L563.3,231.0L564.3,232.5L565.3,235.1L566.2,238.8L567.1,243.1L567.9,247.8L568.7,252.8L569.6,257.7L570.4,262.3L571.3,266.4L572.2,270.1L573.1,273.3L574.0,275.9L575.0,278.0L576.0,279.8M582.9,230.1L584.1,229.2L585.2,229.5L586.2,231.0L587.2,233.7L588.1,237.3L588.9,241.6L589.7,246.3L590.5,251.2L591.3,256.1L592.1,260.7L593.0,264.8L593.8,268.5L594.7,271.6L595.7,274.3L596.7,276.4L597.7,278.1M348.2,419.8L351.4,422.3M594.1,278.6L595.9,274.8M326.2,361.6L329.7,364.6L333.7,375.2L337.8,388.0L341.6,398.6L345.2,405.9L348.5,410.0L351.6,411.9M582.0,277.5L583.9,272.9L585.8,266.5L587.9,258.1L590.1,248.5M324.2,358.5L327.2,356.2L330.6,359.7L334.3,367.0L338.0,375.7L341.7,384.0L345.2,390.8L348.5,395.9L351.7,399.1L354.7,400.8M568.1,279.2L569.9,275.2L571.8,269.5L573.8,262.1L575.9,253.3L578.1,244.0L580.2,235.8L582.1,230.5L583.7,229.4M328.0,349.3L331.1,348.5L334.4,351.5L337.8,357.2L341.3,364.4L344.8,371.7L348.2,378.3L351.5,383.5L354.6,387.1L357.5,389.2L360.4,390.0M554.1,280.1L555.9,276.1L557.8,270.7L559.8,263.9L561.9,255.7L563.9,247.0L566.0,238.8L568.0,232.7L569.7,230.1L571.2,231.6M331.7,341.1L334.6,339.0L337.7,340.4L341.0,344.7L344.3,350.8L347.7,357.6L351.0,363.9L354.2,369.2L357.2,373.2L360.2,375.9L363.0,377.5L365.8,378.1M538.3,283.0L540.1,279.7L541.9,275.4L543.8,269.9L545.8,263.2L547.8,255.5L549.9,247.4L551.9,239.9L553.8,234.2L555.6,231.3L557.2,231.9M332.8,340.5L335.3,333.8L338.0,330.1L340.9,329.4L343.9,331.4L347.1,335.4L350.3,340.4L353.4,345.6L356.5,350.6L359.5,354.9L362.5,358.5L365.3,361.2L368.1,363.1L370.8,364.3L373.5,364.9L376.1,365.0M520.4,287.0L522.3,284.5L524.1,281.2L526.0,277.2L527.9,272.3L529.8,266.4L531.8,259.6L533.8,252.4L535.7,245.2L537.7,239.0L539.6,234.4L541.3,232.5L543.0,233.5M339.0,329.4L341.5,323.8L344.1,320.3L346.8,318.9L349.7,319.3L352.6,321.2L355.5,324.2L358.5,327.8L361.4,331.6L364.3,335.4L367.2,339.0L370.0,342.1L372.8,344.8L375.5,347.0L378.1,348.6L380.7,349.8L383.3,350.5L385.8,350.8L388.3,350.7M500.5,291.2L502.4,289.0L504.2,286.4L506.1,283.4L508.0,279.8L509.9,275.6L511.8,270.7L513.7,265.2L515.7,259.1L517.6,252.8L519.6,246.6L521.5,241.1L523.4,236.9L525.2,234.5L527.0,234.4M350.0,313.5L352.6,310.1L355.2,308.0L357.8,307.1L360.6,307.4L363.3,308.6L366.1,310.6L368.8,313.2L371.6,316.1L374.3,319.1L377.0,322.0L379.7,324.7L382.3,327.1L384.9,329.1L387.5,330.8L390.0,332.1L392.5,333.1L394.9,333.7L397.3,334.0L399.7,334.1L402.1,333.9L404.4,333.6L406.8,333.1L409.1,332.5M470.4,300.5L472.4,299.0L474.3,297.4L476.3,295.6L478.2,293.6L480.2,291.5L482.1,289.2L484.0,286.6L485.9,283.7L487.9,280.5L489.8,276.9L491.7,272.9L493.6,268.5L495.6,263.7L497.5,258.8L499.5,253.7L501.4,248.7L503.3,244.2L505.2,240.4L507.1,237.8L508.9,236.6L510.7,237.1M360.8,303.6L363.2,300.0L365.7,297.2L368.2,295.4L370.8,294.4L373.3,294.2L375.9,294.6L378.5,295.5L381.0,296.7L383.6,298.2L386.2,299.8L388.7,301.3L391.2,302.8L393.6,304.1L396.1,305.2L398.5,306.1L400.9,306.8L403.3,307.3L405.6,307.7L407.9,307.8L410.2,307.8L412.5,307.7L414.8,307.4L417.0,307.0L419.3,306.5L421.5,305.9L423.7,305.3L425.9,304.5L428.0,303.7L430.2,302.8L432.3,301.9L434.5,300.9L436.6,299.8L438.7,298.6L440.8,297.4L442.9,296.1L445.0,294.7L447.0,293.2L449.1,291.7L451.1,290.0L453.2,288.2L455.2,286.2L457.2,284.2L459.2,282.0L461.2,279.6L463.2,277.1L465.2,274.4L467.2,271.6L469.2,268.5L471.1,265.4L473.1,262.1L475.1,258.7L477.0,255.3L479.0,251.9L481.0,248.7L482.9,245.8L484.8,243.3L486.7,241.5L488.6,240.4L490.5,240.2L492.4,241.0M378.3,288.3L380.6,285.7L383.0,283.6L385.4,281.8L387.8,280.4L390.1,279.2L392.5,278.2L394.9,277.4L397.2,276.7L399.6,276.1L401.9,275.5L404.2,275.0L406.5,274.4L408.8,273.8L411.1,273.2L413.3,272.5L415.6,271.8L417.8,271.1L420.0,270.3L422.2,269.4L424.4,268.6L426.6,267.6L428.8,266.6L430.9,265.6L433.1,264.4L435.2,263.2L437.3,262.0L439.4,260.7L441.5,259.4L443.6,258.0L445.7,256.6L447.7,255.1L449.8,253.7L451.9,252.3L453.9,251.0L455.9,249.8L457.9,248.7L459.9,247.8L461.9,247.2L463.9,246.8L465.9,246.8" fill="none" stroke="#1c2808" stroke-opacity=".82" stroke-width="1.1"/>
<polyline points="226.2,376.2 384.2,458.7" stroke="#a4a4a4" stroke-width="1.5" fill="none"/>
<polyline points="384.2,458.7 634.0,295.2" stroke="#a4a4a4" stroke-width="1.5" fill="none"/>
<path d="M384.2,458.7L376.6,463.7M375.4,454.2L371.4,456.7M366.8,449.6L362.8,452.2M358.3,445.2L354.3,447.7M349.9,440.8L342.3,445.5M341.7,436.5L337.7,438.9M333.6,432.3L329.5,434.7M325.6,428.1L321.5,430.4M317.7,424.0L310.0,428.3M309.9,419.9L305.9,422.2M302.3,415.9L298.2,418.2M294.7,412.0L290.7,414.2M287.3,408.1L279.6,412.2M280.0,404.3L275.9,406.4M272.7,400.5L268.7,402.6M265.6,396.8L261.6,398.8M258.6,393.1L250.9,397.0M251.7,389.5L247.6,391.5M244.8,385.9L240.8,387.9M238.1,382.4L234.0,384.3M231.4,378.9L223.7,382.6M384.2,458.7L406.7,470.5M401.4,447.5L411.0,452.3M418.0,436.6L427.5,441.3M433.9,426.2L443.4,430.7M449.2,416.2L471.2,426.2M464.0,406.5L473.3,410.7M478.2,397.2L487.5,401.2M491.9,388.2L501.1,392.1M505.1,379.6L526.5,388.3M517.9,371.2L527.0,374.8M530.2,363.1L539.3,366.6M542.2,355.3L551.1,358.7M553.7,347.7L574.4,355.4M564.9,340.4L573.7,343.6M575.7,333.4L584.4,336.4M586.2,326.5L594.8,329.5M596.3,319.8L616.3,326.6M606.2,313.4L614.7,316.2M615.7,307.1L624.2,309.9M625.0,301.1L633.4,303.7M634.0,295.2L653.4,301.2" stroke="#b0b0b0" stroke-width="1.1" fill="none"/>
<path d="M225.8,373.2h-3M634.2,292.6h3.5M223.7,358.0h-3M635.5,279.5h3.5M221.6,342.5h-3M636.8,266.2h3.5M219.4,326.7h-3M638.1,252.7h3.5M217.2,310.7h-3M639.4,238.9h3.5" stroke="#aaa" stroke-width="1" fill="none"/>
<text x="227.7" y="314.0" font-size="9" text-anchor="start">1.100</text>
<text x="228.8" y="330.9" font-size="9" text-anchor="start">0.825</text>
<text x="230.7" y="347.9" font-size="9" text-anchor="start">0.550</text>
<text x="232.7" y="363.9" font-size="9" text-anchor="start">0.275</text>
<text x="234.5" y="379.4" font-size="9" text-anchor="start" fill="#9a9aff" fill-opacity=".42">0.000</text>
<text x="650.2" y="241.4" font-size="8.8" text-anchor="start">1.100</text>
<text x="647.5" y="255.9" font-size="8.8" text-anchor="start">0.825</text>
<text x="646.7" y="269.4" font-size="8.8" text-anchor="start">0.550</text>
<text x="643.7" y="296.9" font-size="8.8" text-anchor="start">0.000</text>
<text x="644.8" y="283.7" font-size="8.8" clip-path="url(#c275)">0.275</text>
<text x="218.9" y="392.5" font-size="9" text-anchor="start">23.056</text>
<text x="245.8" y="408.2" font-size="9" text-anchor="start">13.477</text>
<text x="273.7" y="422.2" font-size="9" text-anchor="start">3.858</text>
<text x="304.0" y="439.2" font-size="9" text-anchor="start">-5.762</text>
<text x="336.0" y="456.8" font-size="9" text-anchor="start">-15.381</text>
<text x="369.8" y="475.2" font-size="9" text-anchor="start">-25.000</text>
<text x="414.0" y="491.7" font-size="9" text-anchor="start">2.0</text>
<text x="477.8" y="447.0" font-size="9" text-anchor="start">161.6</text>
<text x="531.4" y="406.8" font-size="9" text-anchor="start">321.2</text>
<text x="579.9" y="372.7" font-size="9" text-anchor="start">480.8</text>
<text x="620.4" y="342.6" font-size="9" text-anchor="start">640.4</text>
<text x="657.9" y="316.9" font-size="9" text-anchor="start">800.0</text>
<text x="496.0" y="193.8" font-size="12" text-anchor="middle">E</text>
<text x="277.7" y="446.1" font-size="13.5" text-anchor="middle">X</text>
<text x="589.0" y="416.4" font-size="13" text-anchor="middle">Z</text>
<rect x="898.5" y="136.5" width="41" height="334" fill="url(#cb)" stroke="#000" stroke-width="1"/>
<g font-family="Liberation Serif, Times New Roman, serif" font-size="9.8" fill="#111" clip-path="url(#cbl)">
<text x="956.8" y="139.8">1.0018</text>
<text x="956.8" y="181.6">0.8766</text>
<text x="956.8" y="223.3">0.7513</text>
<text x="956.8" y="265.1">0.6261</text>
<text x="956.8" y="306.8">0.5009</text>
<text x="956.8" y="348.6">0.3757</text>
<text x="956.8" y="390.3">0.2504</text>
<text x="956.8" y="432.1">0.1252</text>
<text x="956.8" y="473.8">0.0000</text>
</g>
<path d="M940,136.5h10.5M940,178.2h10.5M940,220.0h10.5M940,261.8h10.5M940,303.5h10.5M940,345.2h10.5M940,387.0h10.5M940,428.8h10.5M940,470.5h10.5" stroke="#000" stroke-width="1" fill="none" shape-rendering="crispEdges"/>
</svg>
<div class="a tab" style="left:13px;width:52px"><span style="left:7px;transform:scaleX(.87)">Layout</span></div>
<div class="a tab" style="left:153px;width:102px"><span style="left:5px;transform:scaleX(.845)">Refractive Index</span></div>
<div class="a tab" style="left:255px;width:65px"><span style="left:7px;transform:scaleX(.84)">Cut View</span></div>
<div class="a tab" style="left:64px;top:537px;width:90px;height:26px;border-top:0"><span style="left:8.3px;top:7px;font-weight:bold;text-shadow:.35px 0 0 #000;transform:scaleX(.965)">Optical Field</span></div>
<div class="a" style="left:0;top:565px;width:1016px;height:1px;background:#fff"></div>
</body></html>
